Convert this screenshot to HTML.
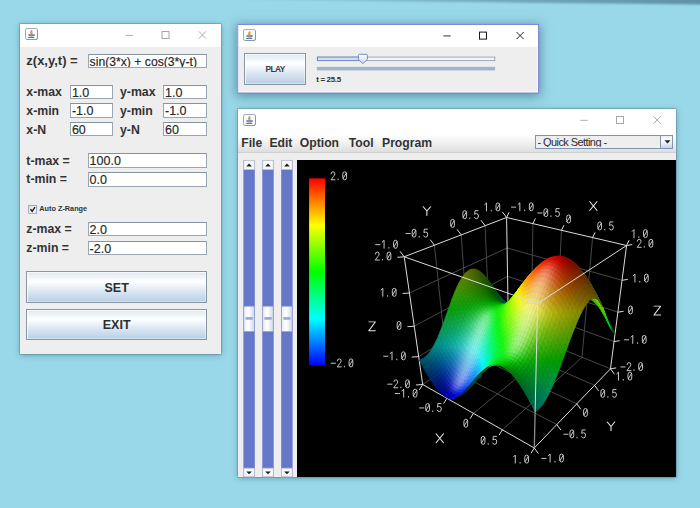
<!DOCTYPE html>
<html><head><meta charset="utf-8"><title>plot</title>
<style>
html,body{margin:0;padding:0}
body{width:700px;height:508px;overflow:hidden;position:relative;background:#99d8e9;font-family:"Liberation Sans",sans-serif;color:#333}
.abs,.jicon,.fld,.lbl,.win,.btn,.box{position:absolute}
.win{background:#eee;box-shadow:0 0 0 .6px rgba(80,110,125,.55),0 1px 6px rgba(30,70,90,.42)}
.tbar{position:absolute;left:0;top:0;right:0;background:#fff}
.fld{background:#fff;border:1px solid #9aa6b3;border-top-color:#8592a0;box-sizing:border-box;white-space:pre;overflow:hidden;padding-left:.6px;color:#262626;-webkit-text-stroke:.15px #262626}
.lbl{font-weight:bold;white-space:pre;color:#333}
.btn{box-sizing:border-box;border:1px solid #8795a5;background:linear-gradient(#dde8f3 0%,#fff 32%,#dde8f3 62%,#b8cfe5 100%);font-weight:bold;text-align:center;color:#2e2e2e;box-shadow:inset 1px 1px 0 rgba(255,255,255,.75),inset -1px -1px 0 rgba(255,255,255,.35)}
</style></head><body>

<svg class="abs" style="left:0;top:0" width="700" height="14"><defs><linearGradient id="tg" x1="0" y1="0" x2="1" y2="0"><stop offset="0" stop-color="#7db6c8" stop-opacity=".0"/><stop offset=".35" stop-color="#76b0c3" stop-opacity=".75"/><stop offset="1" stop-color="#5c91a4" stop-opacity="1"/></linearGradient><filter id="bl" x="-5%" y="-100%" width="110%" height="300%"><feGaussianBlur stdDeviation="1.1"/></filter></defs><path d="M110 -3H705V4.6L420 1.6Z" fill="url(#tg)" filter="url(#bl)"/></svg>
<div class="win" style="left:20px;top:24px;width:201px;height:329.6px"><div class="tbar" style="height:23.1px"></div></div>
<svg class="jicon" style="left:25px;top:28.4px" width="13" height="13" viewBox="0 0 13 13"><rect x=".5" y=".5" width="12" height="11" rx="1.6" fill="#fbfcfd" stroke="#a1adbc"/><path d="M12.45 2V9.8Q12.45 11.5 10.8 11.5H2" fill="none" stroke="#8292a6" stroke-width=".8"/><path d="M6.4 1.8C7.7 3.2 8 4.5 7.3 6H5.4C4.6 4.7 5.3 3.2 6.4 1.8z" fill="#f6932e"/><rect x="3.4" y="6.2" width="6.3" height="1.7" fill="#5f7fa8"/><rect x="4.4" y="7.9" width="4.2" height=".8" fill="#9fb3cc"/><rect x="2.9" y="9" width="6.4" height=".9" fill="#4b6b92"/></svg>
<svg class="abs" style="left:0;top:0" width="700" height="508"><g fill="none" stroke="#a6a6a6" stroke-width="1">
<path d="M125.6 35.35h7.4" stroke-width=".9"/><rect x="162.0" y="31.5" width="7" height="7"/><path d="M198.8 31.4l7.2 7.2m0 -7.2l-7.2 7.2" stroke-width=".95"/></g></svg>
<div class="lbl" style="left:26.3px;top:53.73px;font-size:13px;line-height:14.94px;">z(x,y,t) =</div>
<div class="fld" style="left:88px;top:53.6px;width:119px;height:14.4px;font-size:12.2px;line-height:15.4px">sin(3*x) + cos(3*y-t)</div>
<div class="lbl" style="left:26.3px;top:85.47px;font-size:12.3px;line-height:14.13px;">x-max</div>
<div class="fld" style="left:70.3px;top:84.6px;width:42.6px;height:14.4px;font-size:12.5px;line-height:15.4px">1.0</div>
<div class="lbl" style="left:120px;top:85.47px;font-size:12.3px;line-height:14.13px;">y-max</div>
<div class="fld" style="left:163.4px;top:84.6px;width:43.6px;height:14.4px;font-size:12.5px;line-height:15.4px">1.0</div>
<div class="lbl" style="left:26.3px;top:104.07px;font-size:12.3px;line-height:14.13px;">x-min</div>
<div class="fld" style="left:70.3px;top:103.3px;width:42.6px;height:14.4px;font-size:12.5px;line-height:15.4px">-1.0</div>
<div class="lbl" style="left:120px;top:104.07px;font-size:12.3px;line-height:14.13px;">y-min</div>
<div class="fld" style="left:163.4px;top:103.3px;width:43.6px;height:14.4px;font-size:12.5px;line-height:15.4px">-1.0</div>
<div class="lbl" style="left:26.3px;top:122.67px;font-size:12.3px;line-height:14.13px;">x-N</div>
<div class="fld" style="left:70.3px;top:122px;width:42.6px;height:14.4px;font-size:12.5px;line-height:15.4px">60</div>
<div class="lbl" style="left:120px;top:122.67px;font-size:12.3px;line-height:14.13px;">y-N</div>
<div class="fld" style="left:163.4px;top:122px;width:43.6px;height:14.4px;font-size:12.5px;line-height:15.4px">60</div>
<div class="lbl" style="left:26.3px;top:153.57px;font-size:12.3px;line-height:14.13px;">t-max =</div>
<div class="fld" style="left:88px;top:153.2px;width:119px;height:14.6px;font-size:12.5px;line-height:15.6px">100.0</div>
<div class="lbl" style="left:26.3px;top:172.27px;font-size:12.3px;line-height:14.13px;">t-min =</div>
<div class="fld" style="left:88px;top:171.9px;width:119px;height:14.8px;font-size:12.5px;line-height:15.8px">0.0</div>
<svg class="abs" style="left:0;top:0" width="120" height="230"><defs><linearGradient id="ckg" x1="0" y1="0" x2="1" y2="1"><stop offset="0" stop-color="#cfdbe8"/><stop offset=".55" stop-color="#fbfcfd"/><stop offset="1" stop-color="#e3ebf4"/></linearGradient></defs><rect x="28.7" y="205.4" width="7.9" height="7.9" fill="url(#ckg)" stroke="#93a0af" stroke-width=".9"/><path d="M30.5 209.3L32.2 211.3L35 207.2" fill="none" stroke="#1c1c1c" stroke-width="1.5"/></svg>
<div class="lbl" style="left:39.3px;top:204.99px;font-size:7.3px;line-height:8.39px;">Auto Z-Range</div>
<div class="lbl" style="left:26.3px;top:222.27px;font-size:12.3px;line-height:14.13px;">z-max =</div>
<div class="fld" style="left:88px;top:221.7px;width:119px;height:14.7px;font-size:12.5px;line-height:15.7px">2.0</div>
<div class="lbl" style="left:26.3px;top:241.27px;font-size:12.3px;line-height:14.13px;">z-min =</div>
<div class="fld" style="left:88px;top:240.5px;width:119px;height:14.6px;font-size:12.5px;line-height:15.6px">-2.0</div>
<div class="btn" style="left:26.3px;top:271px;width:180.7px;height:31.6px;font-size:12.5px;line-height:32.6px">SET</div>
<div class="btn" style="left:26.3px;top:309.3px;width:180.7px;height:30.6px;font-size:12.5px;line-height:31.6px">EXIT</div>
<div class="win" style="left:237px;top:24px;width:302px;height:69.4px;box-shadow:0 2px 10px 1px rgba(30,70,90,.5)"><div class="tbar" style="height:23.1px"></div></div><svg class="abs" style="left:0;top:0" width="700" height="508"><rect x="238.7" y="25.4" width="298.9" height="66.7" fill="none" stroke="#fff" stroke-width=".9"/><rect x="237.75" y="24.45" width="300.8" height="68.6" fill="none" stroke="#7a7edb" stroke-width=".95"/></svg>
<svg class="jicon" style="left:243.1px;top:28.9px" width="13" height="13" viewBox="0 0 13 13"><rect x=".5" y=".5" width="12" height="11" rx="1.6" fill="#fbfcfd" stroke="#a1adbc"/><path d="M12.45 2V9.8Q12.45 11.5 10.8 11.5H2" fill="none" stroke="#8292a6" stroke-width=".8"/><path d="M6.4 1.8C7.7 3.2 8 4.5 7.3 6H5.4C4.6 4.7 5.3 3.2 6.4 1.8z" fill="#f6932e"/><rect x="3.4" y="6.2" width="6.3" height="1.7" fill="#5f7fa8"/><rect x="4.4" y="7.9" width="4.2" height=".8" fill="#9fb3cc"/><rect x="2.9" y="9" width="6.4" height=".9" fill="#4b6b92"/></svg>
<svg class="abs" style="left:0;top:0" width="700" height="508"><g fill="none" stroke="#1a1a1a" stroke-width="1">
<path d="M443.3 35.95h7.4" stroke-width=".9"/><rect x="479.5" y="32.1" width="7" height="7"/><path d="M516.5 32.0l7.2 7.2m0 -7.2l-7.2 7.2" stroke-width=".95"/></g></svg>
<div class="btn" style="left:244.2px;top:53.4px;width:62px;height:31.3px;font-size:8.4px;letter-spacing:-.55px;line-height:31.4px;color:#3a3a3a">PLAY</div>
<svg class="abs" style="left:0;top:0" width="700" height="508"><defs><linearGradient id="thb" x1="0" y1="0" x2="0" y2="1"><stop offset="0" stop-color="#fff"/><stop offset="1" stop-color="#c9d9ee"/></linearGradient></defs>
<rect x="317.4" y="57.1" width="177.4" height="3.5" fill="#f3f5f8" stroke="#96a3b3" stroke-width=".9"/>
<rect x="317.4" y="57.1" width="45" height="3.5" fill="#d3dff1" stroke="#6788c5" stroke-width=".9"/>
<path d="M358.4 55.4Q358.4 54.3 359.5 54.3H366.3Q367.4 54.3 367.4 55.4V59.3L362.9 63.6L358.4 59.3Z" fill="url(#thb)" stroke="#6382bf" stroke-width=".9"/>
<rect x="316.9" y="66.9" width="178.2" height="3.5" fill="#9fb3d0"/>
</svg>
<div class="lbl" style="left:316.2px;top:74.55px;font-size:7.9px;line-height:9.08px;letter-spacing:-.3px;color:#2e2e2e">t = 25.5</div>
<div class="win" style="left:237.6px;top:109.2px;width:438.6px;height:368px"><div class="tbar" style="height:25.3px"></div><div class="abs" style="position:absolute;left:0;right:0;top:25.3px;height:17.8px;background:linear-gradient(#fff,#f4f4f4 40%,#dedede);border-bottom:1px solid #d0d0d0"></div></div>
<svg class="jicon" style="left:243.1px;top:113.9px" width="13" height="13" viewBox="0 0 13 13"><rect x=".5" y=".5" width="12" height="11" rx="1.6" fill="#fbfcfd" stroke="#a1adbc"/><path d="M12.45 2V9.8Q12.45 11.5 10.8 11.5H2" fill="none" stroke="#8292a6" stroke-width=".8"/><path d="M6.4 1.8C7.7 3.2 8 4.5 7.3 6H5.4C4.6 4.7 5.3 3.2 6.4 1.8z" fill="#f6932e"/><rect x="3.4" y="6.2" width="6.3" height="1.7" fill="#5f7fa8"/><rect x="4.4" y="7.9" width="4.2" height=".8" fill="#9fb3cc"/><rect x="2.9" y="9" width="6.4" height=".9" fill="#4b6b92"/></svg>
<svg class="abs" style="left:0;top:0" width="700" height="508"><g fill="none" stroke="#a6a6a6" stroke-width="1">
<path d="M580.3 120.35h7.4" stroke-width=".9"/><rect x="616.5" y="116.5" width="7" height="7"/><path d="M653.5 116.4l7.2 7.2m0 -7.2l-7.2 7.2" stroke-width=".95"/></g></svg>
<div class="lbl" style="left:241.2px;top:135.86px;font-size:12.2px;line-height:14.02px;">File</div>
<div class="lbl" style="left:269.4px;top:135.86px;font-size:12.2px;line-height:14.02px;">Edit</div>
<div class="lbl" style="left:299.8px;top:135.86px;font-size:12.2px;line-height:14.02px;">Option</div>
<div class="lbl" style="left:348.8px;top:135.86px;font-size:12.2px;line-height:14.02px;">Tool</div>
<div class="lbl" style="left:382.0px;top:135.86px;font-size:12.2px;line-height:14.02px;">Program</div>
<div class="box" style="left:535px;top:135px;width:138px;height:14px;box-sizing:border-box;border:1px solid #7f93b3;background:#eee;overflow:hidden"><div style="position:absolute;left:0;top:0;width:124px;height:10.9px;overflow:hidden"><div style="position:absolute;left:1.5px;top:0px;font-size:11px;letter-spacing:-0.58px;white-space:pre;color:#2c2c2c;line-height:13px">- Quick Setting -</div></div><div style="position:absolute;right:0;top:0;bottom:0;width:11.2px;border-left:1px solid #7f93b3;background:linear-gradient(#e6eef7,#fff 35%,#c3d5ea)"></div></div>
<svg class="abs" style="left:662.6px;top:139.4px" width="10" height="6"><path d="M1.4 1.2H7.6L4.5 4.4Z" fill="#222"/></svg>
<svg class="abs" style="left:0;top:0" width="700" height="508"><defs><linearGradient id="thg" x1="0" x2="1" y1="0" y2="0"><stop offset="0" stop-color="#e8eef8"/><stop offset=".45" stop-color="#fff"/><stop offset="1" stop-color="#cdd8ea"/></linearGradient></defs><rect x="243.4" y="160" width="11.4" height="317" fill="#6577c9"/><rect x="243.8" y="160.3" width="10.6" height="9.3" fill="#f7f8fa" stroke="#b9c0cc" stroke-width=".8"/><path d="M246.3 166.4h5.6l-2.8 -2.9z" fill="#1a1a1a"/><rect x="243.8" y="468.2" width="10.6" height="8.6" fill="#f7f8fa" stroke="#b9c0cc" stroke-width=".8"/><path d="M246.3 471.4h5.6l-2.8 2.9z" fill="#1a1a1a"/><rect x="243.8" y="306.2" width="10.6" height="25.4" fill="url(#thg)" stroke="#8fa0d8" stroke-width=".8"/><rect x="245.5" y="317.1" width="7.3" height="2.6" fill="#98a6d6"/><rect x="262.3" y="160" width="11.4" height="317" fill="#6577c9"/><rect x="262.7" y="160.3" width="10.6" height="9.3" fill="#f7f8fa" stroke="#b9c0cc" stroke-width=".8"/><path d="M265.2 166.4h5.6l-2.8 -2.9z" fill="#1a1a1a"/><rect x="262.7" y="468.2" width="10.6" height="8.6" fill="#f7f8fa" stroke="#b9c0cc" stroke-width=".8"/><path d="M265.2 471.4h5.6l-2.8 2.9z" fill="#1a1a1a"/><rect x="262.7" y="306.2" width="10.6" height="25.4" fill="url(#thg)" stroke="#8fa0d8" stroke-width=".8"/><rect x="264.40000000000003" y="317.1" width="7.3" height="2.6" fill="#98a6d6"/><rect x="281.2" y="160" width="11.4" height="317" fill="#6577c9"/><rect x="281.59999999999997" y="160.3" width="10.6" height="9.3" fill="#f7f8fa" stroke="#b9c0cc" stroke-width=".8"/><path d="M284.09999999999997 166.4h5.6l-2.8 -2.9z" fill="#1a1a1a"/><rect x="281.59999999999997" y="468.2" width="10.6" height="8.6" fill="#f7f8fa" stroke="#b9c0cc" stroke-width=".8"/><path d="M284.09999999999997 471.4h5.6l-2.8 2.9z" fill="#1a1a1a"/><rect x="281.59999999999997" y="306.2" width="10.6" height="25.4" fill="url(#thg)" stroke="#8fa0d8" stroke-width=".8"/><rect x="283.3" y="317.1" width="7.3" height="2.6" fill="#98a6d6"/></svg>
<svg class="abs" style="left:297px;top:160px;background:#000" width="379.2" height="317.2" viewBox="297 160 379.2 317.2"><defs><linearGradient id="cbg" x1="0" y1="0" x2="0" y2="1"><stop offset="0" stop-color="#f00"/><stop offset="0.25" stop-color="#ff0"/><stop offset="0.5" stop-color="#0f0"/><stop offset="0.75" stop-color="#0ff"/><stop offset="1" stop-color="#00f"/></linearGradient></defs><rect x="309.1" y="178.4" width="15.9" height="187.1" fill="url(#cbg)"/><g fill="none" stroke="#e6e6e6" stroke-width="0.871" stroke-linecap="round" stroke-linejoin="round"><path transform="translate(330.60 171.80) scale(1.043 0.930)" d="M.5 2.1Q.5 0 2.3 0Q4.1 0 4.1 2.1Q4.1 3.6 2.6 5.2L.4 8.6H4.3"/><path transform="translate(336.45 171.80) scale(1.043 0.930)" d="M1.6 7.8V8.6"/><path transform="translate(342.30 171.80) scale(1.043 0.930)" d="M.5 2.2Q.5 0 2.3 0Q4.1 0 4.1 2.2V6.4Q4.1 8.6 2.3 8.6Q.5 8.6 .5 6.4ZM.9 6.9L3.7 1.7"/></g><g fill="none" stroke="#e6e6e6" stroke-width="0.871" stroke-linecap="round" stroke-linejoin="round"><path transform="translate(331.00 358.90) scale(1.043 0.930)" d="M.2 4.7H4.3"/><path transform="translate(336.85 358.90) scale(1.043 0.930)" d="M.5 2.1Q.5 0 2.3 0Q4.1 0 4.1 2.1Q4.1 3.6 2.6 5.2L.4 8.6H4.3"/><path transform="translate(342.70 358.90) scale(1.043 0.930)" d="M1.6 7.8V8.6"/><path transform="translate(348.55 358.90) scale(1.043 0.930)" d="M.5 2.2Q.5 0 2.3 0Q4.1 0 4.1 2.2V6.4Q4.1 8.6 2.3 8.6Q.5 8.6 .5 6.4ZM.9 6.9L3.7 1.7"/></g><g fill="none"><path d="M447.4 368.1L434.4 245.2" stroke="#474747" stroke-width="1"/><path d="M418.6 356.6L508.0 302.8" stroke="#474747" stroke-width="1"/><path d="M531.2 336.8L532.9 223.6" stroke="#474747" stroke-width="1"/><path d="M508.0 302.8L614.0 341.6" stroke="#474747" stroke-width="1"/><path d="M446.9 398.3L531.2 336.8" stroke="#474747" stroke-width="1"/><path d="M447.4 368.1L556.8 424.5" stroke="#474747" stroke-width="1"/><path d="M469.7 353.2L461.2 234.9" stroke="#474747" stroke-width="1"/><path d="M414.2 326.2L507.5 276.4" stroke="#474747" stroke-width="1"/><path d="M555.7 346.6L561.5 230.3" stroke="#474747" stroke-width="1"/><path d="M507.5 276.4L617.9 312.2" stroke="#474747" stroke-width="1"/><path d="M473.4 413.4L555.7 346.6" stroke="#474747" stroke-width="1"/><path d="M469.7 353.2L576.8 403.8" stroke="#474747" stroke-width="1"/><path d="M490.0 339.8L485.1 225.7" stroke="#474747" stroke-width="1"/><path d="M409.4 293.0L507.1 248.0" stroke="#474747" stroke-width="1"/><path d="M582.0 357.3L592.6 237.6" stroke="#474747" stroke-width="1"/><path d="M507.1 248.0L622.1 280.3" stroke="#474747" stroke-width="1"/><path d="M502.4 429.8L582.0 357.3" stroke="#474747" stroke-width="1"/><path d="M490.0 339.8L594.6 385.3" stroke="#474747" stroke-width="1"/><path d="M422.7 384.5L508.4 327.5" stroke="#474747" stroke-width="1"/><path d="M508.4 327.5L610.5 368.8" stroke="#474747" stroke-width="1"/><path d="M508.4 327.5L506.6 217.5" stroke="#dcdcdc" stroke-width="1"/><path d="M404.2 256.8L506.6 217.5" stroke="#dcdcdc" stroke-width="1"/><path d="M506.6 217.5L626.6 245.5" stroke="#dcdcdc" stroke-width="1"/><path d="M422.7 384.5L404.2 256.8" stroke="#dcdcdc" stroke-width="1"/><path d="M610.5 368.8L626.6 245.5" stroke="#dcdcdc" stroke-width="1"/><path d="M422.7 384.5L534.3 448.0" stroke="#dcdcdc" stroke-width="1"/><path d="M534.3 448.0L610.5 368.8" stroke="#dcdcdc" stroke-width="1"/></g><g stroke-width="0.6" stroke-linejoin="round"><path d="M515.8 319.4L517.7 322.2L519.1 322.9L517.3 320.1z" fill="#00295e" stroke="#00295e"/><path d="M514.0 316.4L515.8 319.4L517.3 320.1L515.4 317.1z" fill="#00305c" stroke="#00305c"/><path d="M517.7 322.2L519.6 324.8L521.0 325.4L519.1 322.9z" fill="#002360" stroke="#002360"/><path d="M512.1 313.1L514.0 316.4L515.4 317.1L513.6 313.8z" fill="#00385a" stroke="#00385a"/><path d="M519.6 324.8L521.4 327.0L522.8 327.6L521.0 325.4z" fill="#001d64" stroke="#001d64"/><path d="M510.2 309.7L512.1 313.1L513.6 313.8L511.7 310.4z" fill="#004159" stroke="#004159"/><path d="M521.4 327.0L523.3 328.9L524.7 329.5L522.8 327.6z" fill="#001969" stroke="#001969"/><path d="M508.4 306.1L510.2 309.7L511.7 310.4L509.9 306.8z" fill="#004a58" stroke="#004a58"/><path d="M523.3 328.9L525.1 330.5L526.5 331.1L524.7 329.5z" fill="#00166e" stroke="#00166e"/><path d="M506.5 302.4L508.4 306.1L509.9 306.8L508.0 303.2z" fill="#005457" stroke="#005457"/><path d="M525.1 330.5L527.0 331.8L528.4 332.4L526.5 331.1z" fill="#001475" stroke="#001475"/><path d="M514.4 318.4L516.3 321.3L517.7 322.2L515.8 319.4z" fill="#002e5b" stroke="#002e5b"/><path d="M512.5 315.4L514.4 318.4L515.8 319.4L514.0 316.4z" fill="#003559" stroke="#003559"/><path d="M516.3 321.3L518.1 323.8L519.6 324.8L517.7 322.2z" fill="#00285d" stroke="#00285d"/><path d="M510.6 312.1L512.5 315.4L514.0 316.4L512.1 313.1z" fill="#003d57" stroke="#003d57"/><path d="M518.1 323.8L520.0 326.1L521.4 327.0L519.6 324.8z" fill="#002361" stroke="#002361"/><path d="M508.8 308.6L510.6 312.1L512.1 313.1L510.2 309.7z" fill="#004556" stroke="#004556"/><path d="M527.0 331.8L528.9 332.7L530.3 333.3L528.4 332.4z" fill="#00147d" stroke="#00147d"/><path d="M520.0 326.1L521.9 328.0L523.3 328.9L521.4 327.0z" fill="#001f65" stroke="#001f65"/><path d="M506.9 305.0L508.8 308.6L510.2 309.7L508.4 306.1z" fill="#004e55" stroke="#004e55"/><path d="M521.9 328.0L523.8 329.6L525.1 330.5L523.3 328.9z" fill="#001d6a" stroke="#001d6a"/><path d="M505.0 301.3L506.9 305.0L508.4 306.1L506.5 302.4z" fill="#005553" stroke="#005553"/><path d="M528.9 332.7L530.8 333.2L532.2 333.8L530.3 333.3z" fill="#001585" stroke="#001585"/><path d="M523.8 329.6L525.6 330.9L527.0 331.8L525.1 330.5z" fill="#001b71" stroke="#001b71"/><path d="M512.9 317.2L514.8 320.0L516.3 321.3L514.4 318.4z" fill="#003459" stroke="#003459"/><path d="M511.0 314.1L512.9 317.2L514.4 318.4L512.5 315.4z" fill="#003b57" stroke="#003b57"/><path d="M514.8 320.0L516.7 322.6L518.1 323.8L516.3 321.3z" fill="#002f5b" stroke="#002f5b"/><path d="M509.1 310.8L511.0 314.1L512.5 315.4L510.6 312.1z" fill="#004255" stroke="#004255"/><path d="M516.7 322.6L518.6 324.9L520.0 326.1L518.1 323.8z" fill="#002a5e" stroke="#002a5e"/><path d="M525.6 330.9L527.5 331.8L528.9 332.7L527.0 331.8z" fill="#002397" stroke="#002397"/><path d="M530.8 333.2L532.8 333.4L534.1 334.0L532.2 333.8z" fill="#00167d" stroke="#00167d"/><path d="M507.2 307.3L509.1 310.8L510.6 312.1L508.8 308.6z" fill="#004a54" stroke="#004a54"/><path d="M518.6 324.9L520.4 326.8L521.9 328.0L520.0 326.1z" fill="#002762" stroke="#002762"/><path d="M505.3 303.7L507.2 307.3L508.8 308.6L506.9 305.0z" fill="#005353" stroke="#005353"/><path d="M520.4 326.8L522.3 328.4L523.8 329.6L521.9 328.0z" fill="#002467" stroke="#002467"/><path d="M503.4 299.9L505.3 303.7L506.9 305.0L505.0 301.3z" fill="#00534a" stroke="#00534a"/><path d="M527.5 331.8L529.5 332.3L530.8 333.2L528.9 332.7z" fill="#00208d" stroke="#00208d"/><path d="M532.8 333.4L534.7 333.3L536.1 333.9L534.1 334.0z" fill="#001876" stroke="#001876"/><path d="M522.3 328.4L524.2 329.7L525.6 330.9L523.8 329.6z" fill="#0036a5" stroke="#0036a5"/><path d="M511.4 315.7L513.3 318.5L514.8 320.0L512.9 317.2z" fill="#003b57" stroke="#003b57"/><path d="M509.5 312.6L511.4 315.7L512.9 317.2L511.0 314.1z" fill="#004255" stroke="#004255"/><path d="M513.3 318.5L515.2 321.1L516.7 322.6L514.8 320.0z" fill="#003659" stroke="#003659"/><path d="M529.5 332.3L531.4 332.5L532.8 333.4L530.8 333.2z" fill="#002083" stroke="#002083"/><path d="M507.6 309.2L509.5 312.6L511.0 314.1L509.1 310.8z" fill="#004954" stroke="#004954"/><path d="M524.2 329.7L526.1 330.6L527.5 331.8L525.6 330.9z" fill="#00319c" stroke="#00319c"/><path d="M515.2 321.1L517.1 323.4L518.6 324.9L516.7 322.6z" fill="#00325c" stroke="#00325c"/><path d="M505.7 305.7L507.6 309.2L509.1 310.8L507.2 307.3z" fill="#005053" stroke="#005053"/><path d="M517.1 323.4L519.0 325.4L520.4 326.8L518.6 324.9z" fill="#002f60" stroke="#002f60"/><path d="M503.8 302.1L505.7 305.7L507.2 307.3L505.3 303.7z" fill="#00524b" stroke="#00524b"/><path d="M534.7 333.3L536.7 332.8L538.0 333.4L536.1 333.9z" fill="#001c70" stroke="#001c70"/><path d="M519.0 325.4L520.9 327.0L522.3 328.4L520.4 326.8z" fill="#004eb1" stroke="#004eb1"/><path d="M501.9 298.3L503.8 302.1L505.3 303.7L503.4 299.9z" fill="#005141" stroke="#005141"/><path d="M526.1 330.6L528.1 331.1L529.5 332.3L527.5 331.8z" fill="#002e93" stroke="#002e93"/><path d="M531.4 332.5L533.3 332.4L534.7 333.3L532.8 333.4z" fill="#00227d" stroke="#00227d"/><path d="M520.9 327.0L522.8 328.2L524.2 329.7L522.3 328.4z" fill="#0046a9" stroke="#0046a9"/><path d="M528.1 331.1L530.0 331.3L531.4 332.5L529.5 332.3z" fill="#002d8a" stroke="#002d8a"/><path d="M509.9 313.9L511.8 316.8L513.3 318.5L511.4 315.7z" fill="#004356" stroke="#004356"/><path d="M508.0 310.8L509.9 313.9L511.4 315.7L509.5 312.6z" fill="#004954" stroke="#004954"/><path d="M511.8 316.8L513.7 319.4L515.2 321.1L513.3 318.5z" fill="#003e58" stroke="#003e58"/><path d="M536.7 332.8L538.7 332.0L540.0 332.6L538.0 333.4z" fill="#00216c" stroke="#00216c"/><path d="M522.8 328.2L524.7 329.2L526.1 330.6L524.2 329.7z" fill="#0041a1" stroke="#0041a1"/><path d="M506.1 307.4L508.0 310.8L509.5 312.6L507.6 309.2z" fill="#005053" stroke="#005053"/><path d="M513.7 319.4L515.6 321.7L517.1 323.4L515.2 321.1z" fill="#003a5b" stroke="#003a5b"/><path d="M504.1 303.9L506.1 307.4L507.6 309.2L505.7 305.7z" fill="#00524b" stroke="#00524b"/><path d="M533.3 332.4L535.3 331.9L536.7 332.8L534.7 333.3z" fill="#002677" stroke="#002677"/><path d="M515.6 321.7L517.5 323.7L519.0 325.4L517.1 323.4z" fill="#006cb9" stroke="#006cb9"/><path d="M502.2 300.2L504.1 303.9L505.7 305.7L503.8 302.1z" fill="#005142" stroke="#005142"/><path d="M517.5 323.7L519.4 325.3L520.9 327.0L519.0 325.4z" fill="#0061b3" stroke="#0061b3"/><path d="M500.3 296.4L502.2 300.2L503.8 302.1L501.9 298.3z" fill="#005038" stroke="#005038"/><path d="M524.7 329.2L526.7 329.7L528.1 331.1L526.1 330.6z" fill="#003d98" stroke="#003d98"/><path d="M530.0 331.3L532.0 331.2L533.3 332.4L531.4 332.5z" fill="#002e82" stroke="#002e82"/><path d="M519.4 325.3L521.4 326.6L522.8 328.2L520.9 327.0z" fill="#0059ac" stroke="#0059ac"/><path d="M538.7 332.0L540.7 330.8L542.0 331.5L540.0 332.6z" fill="#002768" stroke="#002768"/><path d="M535.3 331.9L537.3 331.0L538.7 332.0L536.7 332.8z" fill="#002b72" stroke="#002b72"/><path d="M526.7 329.7L528.6 329.9L530.0 331.3L528.1 331.1z" fill="#003c8f" stroke="#003c8f"/><path d="M508.4 312.0L510.3 314.9L511.8 316.8L509.9 313.9z" fill="#004b55" stroke="#004b55"/><path d="M506.4 308.8L508.4 312.0L509.9 313.9L508.0 310.8z" fill="#005153" stroke="#005153"/><path d="M510.3 314.9L512.2 317.5L513.7 319.4L511.8 316.8z" fill="#004757" stroke="#004757"/><path d="M521.4 326.6L523.3 327.5L524.7 329.2L522.8 328.2z" fill="#0052a4" stroke="#0052a4"/><path d="M504.5 305.5L506.4 308.8L508.0 310.8L506.1 307.4z" fill="#00524b" stroke="#00524b"/><path d="M532.0 331.2L534.0 330.7L535.3 331.9L533.3 332.4z" fill="#00327c" stroke="#00327c"/><path d="M512.2 317.5L514.1 319.8L515.6 321.7L513.7 319.4z" fill="#008fc0" stroke="#008fc0"/><path d="M502.6 301.9L504.5 305.5L506.1 307.4L504.1 303.9z" fill="#005142" stroke="#005142"/><path d="M514.1 319.8L516.0 321.8L517.5 323.7L515.6 321.7z" fill="#0081bb" stroke="#0081bb"/><path d="M500.6 298.2L502.6 301.9L504.1 303.9L502.2 300.2z" fill="#005039" stroke="#005039"/><path d="M523.3 327.5L525.2 328.0L526.7 329.7L524.7 329.2z" fill="#004e9b" stroke="#004e9b"/><path d="M528.6 329.9L530.6 329.7L532.0 331.2L530.0 331.3z" fill="#003c86" stroke="#003c86"/><path d="M516.0 321.8L518.0 323.5L519.4 325.3L517.5 323.7z" fill="#0076b5" stroke="#0076b5"/><path d="M498.6 294.3L500.6 298.2L502.2 300.2L500.3 296.4z" fill="#00502f" stroke="#00502f"/><path d="M540.7 330.8L542.8 329.4L544.1 330.1L542.0 331.5z" fill="#002e65" stroke="#002e65"/><path d="M537.3 331.0L539.4 329.9L540.7 330.8L538.7 332.0z" fill="#00316e" stroke="#00316e"/><path d="M518.0 323.5L519.9 324.7L521.4 326.6L519.4 325.3z" fill="#006cae" stroke="#006cae"/><path d="M534.0 330.7L536.0 329.8L537.3 331.0L535.3 331.9z" fill="#003677" stroke="#003677"/><path d="M525.2 328.0L527.2 328.2L528.6 329.9L526.7 329.7z" fill="#004c93" stroke="#004c93"/><path d="M506.8 309.9L508.7 312.8L510.3 314.9L508.4 312.0z" fill="#005454" stroke="#005454"/><path d="M530.6 329.7L532.6 329.2L534.0 330.7L532.0 331.2z" fill="#003f80" stroke="#003f80"/><path d="M519.9 324.7L521.8 325.7L523.3 327.5L521.4 326.6z" fill="#0065a6" stroke="#0065a6"/><path d="M504.8 306.7L506.8 309.9L508.4 312.0L506.4 308.8z" fill="#00524b" stroke="#00524b"/><path d="M508.7 312.8L510.7 315.5L512.2 317.5L510.3 314.9z" fill="#005056" stroke="#005056"/><path d="M502.9 303.3L504.8 306.7L506.4 308.8L504.5 305.5z" fill="#005142" stroke="#005142"/><path d="M510.7 315.5L512.6 317.8L514.1 319.8L512.2 317.5z" fill="#00a5c1" stroke="#00a5c1"/><path d="M500.9 299.7L502.9 303.3L504.5 305.5L502.6 301.9z" fill="#005039" stroke="#005039"/><path d="M512.6 317.8L514.5 319.8L516.0 321.8L514.1 319.8z" fill="#0097bc" stroke="#0097bc"/><path d="M542.8 329.4L544.8 327.7L546.2 328.4L544.1 330.1z" fill="#003562" stroke="#003562"/><path d="M539.4 329.9L541.4 328.5L542.8 329.4L540.7 330.8z" fill="#00386b" stroke="#00386b"/><path d="M499.0 296.0L500.9 299.7L502.6 301.9L500.6 298.2z" fill="#004f2f" stroke="#004f2f"/><path d="M527.2 328.2L529.2 328.1L530.6 329.7L528.6 329.9z" fill="#004c8b" stroke="#004c8b"/><path d="M521.8 325.7L523.8 326.2L525.2 328.0L523.3 327.5z" fill="#00619e" stroke="#00619e"/><path d="M536.0 329.8L538.0 328.7L539.4 329.9L537.3 331.0z" fill="#003c73" stroke="#003c73"/><path d="M514.5 319.8L516.5 321.5L518.0 323.5L516.0 321.8z" fill="#008bb6" stroke="#008bb6"/><path d="M497.0 292.1L499.0 296.0L500.6 298.2L498.6 294.3z" fill="#004f26" stroke="#004f26"/><path d="M532.6 329.2L534.6 328.4L536.0 329.8L534.0 330.7z" fill="#00447b" stroke="#00447b"/><path d="M516.5 321.5L518.4 322.7L519.9 324.7L518.0 323.5z" fill="#0081af" stroke="#0081af"/><path d="M523.8 326.2L525.8 326.4L527.2 328.2L525.2 328.0z" fill="#005e96" stroke="#005e96"/><path d="M529.2 328.1L531.2 327.5L532.6 329.2L530.6 329.7z" fill="#004e83" stroke="#004e83"/><path d="M518.4 322.7L520.4 323.7L521.8 325.7L519.9 324.7z" fill="#0079a8" stroke="#0079a8"/><path d="M505.2 307.7L507.1 310.7L508.7 312.8L506.8 309.9z" fill="#00544a" stroke="#00544a"/><path d="M503.2 304.5L505.2 307.7L506.8 309.9L504.8 306.7z" fill="#005241" stroke="#005241"/><path d="M507.1 310.7L509.1 313.3L510.7 315.5L508.7 312.8z" fill="#00c5bd" stroke="#00c5bd"/><path d="M541.4 328.5L543.5 326.8L544.8 327.7L542.8 329.4z" fill="#004068" stroke="#004068"/><path d="M544.8 327.7L547.0 325.8L548.3 326.5L546.2 328.4z" fill="#003e60" stroke="#003e60"/><path d="M501.3 301.1L503.2 304.5L504.8 306.7L502.9 303.3z" fill="#005138" stroke="#005138"/><path d="M509.1 313.3L511.0 315.7L512.6 317.8L510.7 315.5z" fill="#00bcc1" stroke="#00bcc1"/><path d="M538.0 328.7L540.1 327.2L541.4 328.5L539.4 329.9z" fill="#004470" stroke="#004470"/><path d="M499.3 297.4L501.3 301.1L502.9 303.3L500.9 299.7z" fill="#00502f" stroke="#00502f"/><path d="M511.0 315.7L513.0 317.7L514.5 319.8L512.6 317.8z" fill="#00aebc" stroke="#00aebc"/><path d="M497.3 293.6L499.3 297.4L500.9 299.7L499.0 296.0z" fill="#004f26" stroke="#004f26"/><path d="M534.6 328.4L536.6 327.2L538.0 328.7L536.0 329.8z" fill="#004a77" stroke="#004a77"/><path d="M525.8 326.4L527.8 326.2L529.2 328.1L527.2 328.2z" fill="#005d8e" stroke="#005d8e"/><path d="M520.4 323.7L522.3 324.2L523.8 326.2L521.8 325.7z" fill="#0074a0" stroke="#0074a0"/><path d="M513.0 317.7L514.9 319.3L516.5 321.5L514.5 319.8z" fill="#00a1b7" stroke="#00a1b7"/><path d="M495.3 289.7L497.3 293.6L499.0 296.0L497.0 292.1z" fill="#004f1c" stroke="#004f1c"/><path d="M531.2 327.5L533.2 326.7L534.6 328.4L532.6 329.2z" fill="#00527f" stroke="#00527f"/><path d="M514.9 319.3L516.9 320.6L518.4 322.7L516.5 321.5z" fill="#0096b0" stroke="#0096b0"/><path d="M522.3 324.2L524.3 324.4L525.8 326.4L523.8 326.2z" fill="#007098" stroke="#007098"/><path d="M543.5 326.8L545.7 324.8L547.0 325.8L544.8 327.7z" fill="#004966" stroke="#004966"/><path d="M527.8 326.2L529.8 325.7L531.2 327.5L529.2 328.1z" fill="#005e86" stroke="#005e86"/><path d="M540.1 327.2L542.2 325.5L543.5 326.8L541.4 328.5z" fill="#004c6d" stroke="#004c6d"/><path d="M547.0 325.8L549.1 323.7L550.4 324.4L548.3 326.5z" fill="#00475f" stroke="#00475f"/><path d="M516.9 320.6L518.9 321.5L520.4 323.7L518.4 322.7z" fill="#008ea9" stroke="#008ea9"/><path d="M503.6 305.4L505.5 308.4L507.1 310.7L505.2 307.7z" fill="#005440" stroke="#005440"/><path d="M536.6 327.2L538.7 325.7L540.1 327.2L538.0 328.7z" fill="#005174" stroke="#005174"/><path d="M501.6 302.2L503.6 305.4L505.2 307.7L503.2 304.5z" fill="#005237" stroke="#005237"/><path d="M505.5 308.4L507.5 311.1L509.1 313.3L507.1 310.7z" fill="#00c5a5" stroke="#00c5a5"/><path d="M499.6 298.7L501.6 302.2L503.2 304.5L501.3 301.1z" fill="#00512e" stroke="#00512e"/><path d="M507.5 311.1L509.5 313.4L511.0 315.7L509.1 313.3z" fill="#00c1af" stroke="#00c1af"/><path d="M497.6 295.1L499.6 298.7L501.3 301.1L499.3 297.4z" fill="#005025" stroke="#005025"/><path d="M533.2 326.7L535.3 325.5L536.6 327.2L534.6 328.4z" fill="#00587a" stroke="#00587a"/><path d="M509.5 313.4L511.4 315.5L513.0 317.7L511.0 315.7z" fill="#00bdb5" stroke="#00bdb5"/><path d="M495.6 291.2L497.6 295.1L499.3 297.4L497.3 293.6z" fill="#004f1c" stroke="#004f1c"/><path d="M524.3 324.4L526.3 324.2L527.8 326.2L525.8 326.4z" fill="#006f90" stroke="#006f90"/><path d="M518.9 321.5L520.8 322.1L522.3 324.2L520.4 323.7z" fill="#0087a1" stroke="#0087a1"/><path d="M511.4 315.5L513.4 317.1L514.9 319.3L513.0 317.7z" fill="#00b7b7" stroke="#00b7b7"/><path d="M493.6 287.3L495.6 291.2L497.3 293.6L495.3 289.7z" fill="#004e13" stroke="#004e13"/><path d="M529.8 325.7L531.8 324.8L533.2 326.7L531.2 327.5z" fill="#006281" stroke="#006281"/><path d="M513.4 317.1L515.4 318.4L516.9 320.6L514.9 319.3z" fill="#00acb1" stroke="#00acb1"/><path d="M545.7 324.8L547.8 322.7L549.1 323.7L547.0 325.8z" fill="#005264" stroke="#005264"/><path d="M542.2 325.5L544.3 323.6L545.7 324.8L543.5 326.8z" fill="#00556b" stroke="#00556b"/><path d="M549.1 323.7L551.3 321.4L552.6 322.2L550.4 324.4z" fill="#00515e" stroke="#00515e"/><path d="M538.7 325.7L540.8 324.0L542.2 325.5L540.1 327.2z" fill="#005971" stroke="#005971"/><path d="M520.8 322.1L522.8 322.2L524.3 324.4L522.3 324.2z" fill="#008399" stroke="#008399"/><path d="M526.3 324.2L528.3 323.6L529.8 325.7L527.8 326.2z" fill="#006f89" stroke="#006f89"/><path d="M535.3 325.5L537.3 324.0L538.7 325.7L536.6 327.2z" fill="#005f77" stroke="#005f77"/><path d="M515.4 318.4L517.3 319.3L518.9 321.5L516.9 320.6z" fill="#00a2a9" stroke="#00a2a9"/><path d="M501.9 303.1L503.9 306.1L505.5 308.4L503.6 305.4z" fill="#005436" stroke="#005436"/><path d="M499.9 299.8L501.9 303.1L503.6 305.4L501.6 302.2z" fill="#00522d" stroke="#00522d"/><path d="M503.9 306.1L505.9 308.8L507.5 311.1L505.5 308.4z" fill="#00c58e" stroke="#00c58e"/><path d="M497.9 296.3L499.9 299.8L501.6 302.2L499.6 298.7z" fill="#005125" stroke="#005125"/><path d="M505.9 308.8L507.9 311.2L509.5 313.4L507.5 311.1z" fill="#00c198" stroke="#00c198"/><path d="M531.8 324.8L533.9 323.6L535.3 325.5L533.2 326.7z" fill="#00677d" stroke="#00677d"/><path d="M495.9 292.6L497.9 296.3L499.6 298.7L497.6 295.1z" fill="#00501c" stroke="#00501c"/><path d="M507.9 311.2L509.8 313.2L511.4 315.5L509.5 313.4z" fill="#00bd9e" stroke="#00bd9e"/><path d="M522.8 322.2L524.8 322.0L526.3 324.2L524.3 324.4z" fill="#008191" stroke="#008191"/><path d="M493.9 288.8L495.9 292.6L497.6 295.1L495.6 291.2z" fill="#004f13" stroke="#004f13"/><path d="M517.3 319.3L519.3 319.9L520.8 322.1L518.9 321.5z" fill="#009ba2" stroke="#009ba2"/><path d="M509.8 313.2L511.8 314.9L513.4 317.1L511.4 315.5z" fill="#00b7a1" stroke="#00b7a1"/><path d="M491.9 284.8L493.9 288.8L495.6 291.2L493.6 287.3z" fill="#004e0a" stroke="#004e0a"/><path d="M528.3 323.6L530.4 322.7L531.8 324.8L529.8 325.7z" fill="#007283" stroke="#007283"/><path d="M544.3 323.6L546.5 321.4L547.8 322.7L545.7 324.8z" fill="#005f69" stroke="#005f69"/><path d="M547.8 322.7L550.0 320.4L551.3 321.4L549.1 323.7z" fill="#005d63" stroke="#005d63"/><path d="M540.8 324.0L543.0 322.0L544.3 323.6L542.2 325.5z" fill="#00626f" stroke="#00626f"/><path d="M551.3 321.4L553.6 319.0L554.9 319.8L552.6 322.2z" fill="#005c5e" stroke="#005c5e"/><path d="M511.8 314.9L513.8 316.2L515.4 318.4L513.4 317.1z" fill="#00b0a0" stroke="#00b0a0"/><path d="M537.3 324.0L539.5 322.2L540.8 324.0L538.7 325.7z" fill="#006774" stroke="#006774"/><path d="M519.3 319.9L521.3 320.0L522.8 322.2L520.8 322.1z" fill="#00969a" stroke="#00969a"/><path d="M524.8 322.0L526.9 321.5L528.3 323.6L526.3 324.2z" fill="#00818a" stroke="#00818a"/><path d="M533.9 323.6L536.0 322.1L537.3 324.0L535.3 325.5z" fill="#006e7a" stroke="#006e7a"/><path d="M513.8 316.2L515.8 317.1L517.3 319.3L515.4 318.4z" fill="#00a99c" stroke="#00a99c"/><path d="M500.2 300.8L502.2 303.8L503.9 306.1L501.9 303.1z" fill="#00542c" stroke="#00542c"/><path d="M498.2 297.5L500.2 300.8L501.9 303.1L499.9 299.8z" fill="#005224" stroke="#005224"/><path d="M502.2 303.8L504.2 306.6L505.9 308.8L503.9 306.1z" fill="#00c576" stroke="#00c576"/><path d="M496.2 294.0L498.2 297.5L499.9 299.8L497.9 296.3z" fill="#00511b" stroke="#00511b"/><path d="M504.2 306.6L506.2 309.0L507.9 311.2L505.9 308.8z" fill="#00c181" stroke="#00c181"/><path d="M530.4 322.7L532.4 321.5L533.9 323.6L531.8 324.8z" fill="#00777f" stroke="#00777f"/><path d="M494.2 290.3L496.2 294.0L497.9 296.3L495.9 292.6z" fill="#005012" stroke="#005012"/><path d="M506.2 309.0L508.2 311.0L509.8 313.2L507.9 311.2z" fill="#00bc88" stroke="#00bc88"/><path d="M521.3 320.0L523.3 319.8L524.8 322.0L522.8 322.2z" fill="#009291" stroke="#009291"/><path d="M492.1 286.4L494.2 290.3L495.9 292.6L493.9 288.8z" fill="#004f09" stroke="#004f09"/><path d="M515.8 317.1L517.8 317.7L519.3 319.9L517.3 319.3z" fill="#00a194" stroke="#00a194"/><path d="M546.5 321.4L548.7 319.1L550.0 320.4L547.8 322.7z" fill="#006867" stroke="#006867"/><path d="M543.0 322.0L545.2 319.8L546.5 321.4L544.3 323.6z" fill="#006c6d" stroke="#006c6d"/><path d="M508.2 311.0L510.2 312.7L511.8 314.9L509.8 313.2z" fill="#00b78b" stroke="#00b78b"/><path d="M550.0 320.4L552.3 318.0L553.6 319.0L551.3 321.4z" fill="#00635e" stroke="#00635e"/><path d="M490.1 282.4L492.1 286.4L493.9 288.8L491.9 284.8z" fill="#004f00" stroke="#004f00"/><path d="M526.9 321.5L528.9 320.6L530.4 322.7L528.3 323.6z" fill="#008284" stroke="#008284"/><path d="M539.5 322.2L541.6 320.2L543.0 322.0L540.8 324.0z" fill="#007072" stroke="#007072"/><path d="M553.6 319.0L555.8 316.6L557.1 317.3L554.9 319.8z" fill="#005d54" stroke="#005d54"/><path d="M536.0 322.1L538.1 320.3L539.5 322.2L537.3 324.0z" fill="#007677" stroke="#007677"/><path d="M510.2 312.7L512.2 314.0L513.8 316.2L511.8 314.9z" fill="#00b08b" stroke="#00b08b"/><path d="M517.8 317.7L519.8 317.8L521.3 320.0L519.3 319.9z" fill="#009a8b" stroke="#009a8b"/><path d="M523.3 319.8L525.4 319.2L526.9 321.5L524.8 322.0z" fill="#008b84" stroke="#008b84"/><path d="M532.4 321.5L534.5 320.0L536.0 322.1L533.9 323.6z" fill="#007b79" stroke="#007b79"/><path d="M512.2 314.0L514.2 314.9L515.8 317.1L513.8 316.2z" fill="#00a987" stroke="#00a987"/><path d="M498.5 298.6L500.6 301.6L502.2 303.8L500.2 300.8z" fill="#005422" stroke="#005422"/><path d="M496.5 295.3L498.5 298.6L500.2 300.8L498.2 297.5z" fill="#00531a" stroke="#00531a"/><path d="M500.6 301.6L502.6 304.4L504.2 306.6L502.2 303.8z" fill="#00572a" stroke="#00572a"/><path d="M494.5 291.7L496.5 295.3L498.2 297.5L496.2 294.0z" fill="#005112" stroke="#005112"/><path d="M502.6 304.4L504.6 306.8L506.2 309.0L504.2 306.6z" fill="#00c06a" stroke="#00c06a"/><path d="M528.9 320.6L531.0 319.3L532.4 321.5L530.4 322.7z" fill="#008079" stroke="#008079"/><path d="M492.4 287.9L494.5 291.7L496.2 294.0L494.2 290.3z" fill="#005009" stroke="#005009"/><path d="M504.6 306.8L506.6 308.9L508.2 311.0L506.2 309.0z" fill="#00bb71" stroke="#00bb71"/><path d="M548.7 319.1L550.9 316.6L552.3 318.0L550.0 320.4z" fill="#00675a" stroke="#00675a"/><path d="M545.2 319.8L547.4 317.5L548.7 319.1L546.5 321.4z" fill="#006c60" stroke="#006c60"/><path d="M490.4 284.0L492.4 287.9L494.2 290.3L492.1 286.4z" fill="#005000" stroke="#005000"/><path d="M519.8 317.8L521.8 317.6L523.3 319.8L521.3 320.0z" fill="#009280" stroke="#009280"/><path d="M552.3 318.0L554.5 315.5L555.8 316.6L553.6 319.0z" fill="#006252" stroke="#006252"/><path d="M541.6 320.2L543.8 318.0L545.2 319.8L543.0 322.0z" fill="#007066" stroke="#007066"/><path d="M514.2 314.9L516.2 315.5L517.8 317.7L515.8 317.1z" fill="#00a181" stroke="#00a181"/><path d="M506.6 308.9L508.6 310.5L510.2 312.7L508.2 311.0z" fill="#00b675" stroke="#00b675"/><path d="M488.3 280.0L490.4 284.0L492.1 286.4L490.1 282.4z" fill="#094f00" stroke="#094f00"/><path d="M555.8 316.6L558.1 314.0L559.4 314.8L557.1 317.3z" fill="#005d49" stroke="#005d49"/><path d="M538.1 320.3L540.2 318.2L541.6 320.2L539.5 322.2z" fill="#007469" stroke="#007469"/><path d="M525.4 319.2L527.4 318.3L528.9 320.6L526.9 321.5z" fill="#008576" stroke="#008576"/><path d="M534.5 320.0L536.7 318.1L538.1 320.3L536.0 322.1z" fill="#00786b" stroke="#00786b"/><path d="M508.6 310.5L510.6 311.9L512.2 314.0L510.2 312.7z" fill="#00af76" stroke="#00af76"/><path d="M516.2 315.5L518.2 315.6L519.8 317.8L517.8 317.7z" fill="#009978" stroke="#009978"/><path d="M531.0 319.3L533.1 317.7L534.5 320.0L532.4 321.5z" fill="#007d6c" stroke="#007d6c"/><path d="M521.8 317.6L523.9 317.0L525.4 319.2L523.3 319.8z" fill="#008b73" stroke="#008b73"/><path d="M496.8 296.5L498.8 299.5L500.6 301.6L498.5 298.6z" fill="#005519" stroke="#005519"/><path d="M510.6 311.9L512.6 312.8L514.2 314.9L512.2 314.0z" fill="#00a773" stroke="#00a773"/><path d="M494.8 293.1L496.8 296.5L498.5 298.6L496.5 295.3z" fill="#005311" stroke="#005311"/><path d="M498.8 299.5L500.9 302.3L502.6 304.4L500.6 301.6z" fill="#005721" stroke="#005721"/><path d="M492.7 289.5L494.8 293.1L496.5 295.3L494.5 291.7z" fill="#005209" stroke="#005209"/><path d="M500.9 302.3L502.9 304.7L504.6 306.8L502.6 304.4z" fill="#00bf54" stroke="#00bf54"/><path d="M527.4 318.3L529.5 317.0L531.0 319.3L528.9 320.6z" fill="#00806a" stroke="#00806a"/><path d="M490.6 285.7L492.7 289.5L494.5 291.7L492.4 287.9z" fill="#005100" stroke="#005100"/><path d="M547.4 317.5L549.6 315.0L550.9 316.6L548.7 319.1z" fill="#006b53" stroke="#006b53"/><path d="M550.9 316.6L553.2 314.1L554.5 315.5L552.3 318.0z" fill="#00674d" stroke="#00674d"/><path d="M543.8 318.0L546.0 315.6L547.4 317.5L545.2 319.8z" fill="#006f58" stroke="#006f58"/><path d="M502.9 304.7L504.9 306.8L506.6 308.9L504.6 306.8z" fill="#00ba5c" stroke="#00ba5c"/><path d="M554.5 315.5L556.8 312.9L558.1 314.0L555.8 316.6z" fill="#006246" stroke="#006246"/><path d="M488.6 281.8L490.6 285.7L492.4 287.9L490.4 284.0z" fill="#095000" stroke="#095000"/><path d="M540.2 318.2L542.4 316.0L543.8 318.0L541.6 320.2z" fill="#00735c" stroke="#00735c"/><path d="M518.2 315.6L520.3 315.4L521.8 317.6L519.8 317.8z" fill="#00916e" stroke="#00916e"/><path d="M558.1 314.0L560.5 311.5L561.8 312.3L559.4 314.8z" fill="#005e3e" stroke="#005e3e"/><path d="M512.6 312.8L514.6 313.3L516.2 315.5L514.2 314.9z" fill="#009f6d" stroke="#009f6d"/><path d="M504.9 306.8L506.9 308.5L508.6 310.5L506.6 308.9z" fill="#00b460" stroke="#00b460"/><path d="M486.5 277.7L488.6 281.8L490.4 284.0L488.3 280.0z" fill="#125000" stroke="#125000"/><path d="M536.7 318.1L538.8 316.1L540.2 318.2L538.1 320.3z" fill="#00765e" stroke="#00765e"/><path d="M523.9 317.0L525.9 316.0L527.4 318.3L525.4 319.2z" fill="#008467" stroke="#008467"/><path d="M533.1 317.7L535.3 315.9L536.7 318.1L534.5 320.0z" fill="#007a5e" stroke="#007a5e"/><path d="M506.9 308.5L509.0 309.8L510.6 311.9L508.6 310.5z" fill="#00ad61" stroke="#00ad61"/><path d="M514.6 313.3L516.7 313.5L518.2 315.6L516.2 315.5z" fill="#009765" stroke="#009765"/><path d="M529.5 317.0L531.7 315.4L533.1 317.7L531.0 319.3z" fill="#007d5d" stroke="#007d5d"/><path d="M520.3 315.4L522.3 314.7L523.9 317.0L521.8 317.6z" fill="#008a62" stroke="#008a62"/><path d="M495.1 294.5L497.1 297.6L498.8 299.5L496.8 296.5z" fill="#005610" stroke="#005610"/><path d="M493.0 291.1L495.1 294.5L496.8 296.5L494.8 293.1z" fill="#005408" stroke="#005408"/><path d="M497.1 297.6L499.2 300.4L500.9 302.3L498.8 299.5z" fill="#005818" stroke="#005818"/><path d="M509.0 309.8L511.0 310.8L512.6 312.8L510.6 311.9z" fill="#00a65f" stroke="#00a65f"/><path d="M490.9 287.5L493.0 291.1L494.8 293.1L492.7 289.5z" fill="#005300" stroke="#005300"/><path d="M499.2 300.4L501.2 302.8L502.9 304.7L500.9 302.3z" fill="#005b1e" stroke="#005b1e"/><path d="M549.6 315.0L551.9 312.4L553.2 314.1L550.9 316.6z" fill="#006b46" stroke="#006b46"/><path d="M553.2 314.1L555.5 311.5L556.8 312.9L554.5 315.5z" fill="#006741" stroke="#006741"/><path d="M546.0 315.6L548.3 313.1L549.6 315.0L547.4 317.5z" fill="#006e4b" stroke="#006e4b"/><path d="M488.8 283.7L490.9 287.5L492.7 289.5L490.6 285.7z" fill="#085200" stroke="#085200"/><path d="M556.8 312.9L559.2 310.4L560.5 311.5L558.1 314.0z" fill="#00633b" stroke="#00633b"/><path d="M501.2 302.8L503.2 304.9L504.9 306.8L502.9 304.7z" fill="#00b948" stroke="#00b948"/><path d="M525.9 316.0L528.0 314.7L529.5 317.0L527.4 318.3z" fill="#00805b" stroke="#00805b"/><path d="M542.4 316.0L544.7 313.6L546.0 315.6L543.8 318.0z" fill="#00714e" stroke="#00714e"/><path d="M560.5 311.5L562.8 309.1L564.1 309.9L561.8 312.3z" fill="#005e34" stroke="#005e34"/><path d="M486.7 279.7L488.8 283.7L490.6 285.7L488.6 281.8z" fill="#115100" stroke="#115100"/><path d="M538.8 316.1L541.0 313.8L542.4 316.0L540.2 318.2z" fill="#007450" stroke="#007450"/><path d="M516.7 313.5L518.7 313.2L520.3 315.4L518.2 315.6z" fill="#008f5c" stroke="#008f5c"/><path d="M511.0 310.8L513.0 311.3L514.6 313.3L512.6 312.8z" fill="#009d5a" stroke="#009d5a"/><path d="M503.2 304.9L505.3 306.6L506.9 308.5L504.9 306.8z" fill="#00b24c" stroke="#00b24c"/><path d="M484.6 275.6L486.7 279.7L488.6 281.8L486.5 277.7z" fill="#1b5100" stroke="#1b5100"/><path d="M535.3 315.9L537.4 313.8L538.8 316.1L536.7 318.1z" fill="#007751" stroke="#007751"/><path d="M522.3 314.7L524.4 313.8L525.9 316.0L523.9 317.0z" fill="#008456" stroke="#008456"/><path d="M505.3 306.6L507.3 308.0L509.0 309.8L506.9 308.5z" fill="#00ab4e" stroke="#00ab4e"/><path d="M531.7 315.4L533.8 313.6L535.3 315.9L533.1 317.7z" fill="#007a50" stroke="#007a50"/><path d="M513.0 311.3L515.1 311.4L516.7 313.5L514.6 313.3z" fill="#009553" stroke="#009553"/><path d="M493.3 292.8L495.4 295.9L497.1 297.6L495.1 294.5z" fill="#005708" stroke="#005708"/><path d="M491.2 289.3L493.3 292.8L495.1 294.5L493.0 291.1z" fill="#005600" stroke="#005600"/><path d="M495.4 295.9L497.4 298.7L499.2 300.4L497.1 297.6z" fill="#005a0f" stroke="#005a0f"/><path d="M518.7 313.2L520.8 312.6L522.3 314.7L520.3 315.4z" fill="#008851" stroke="#008851"/><path d="M528.0 314.7L530.2 313.1L531.7 315.4L529.5 317.0z" fill="#007d4e" stroke="#007d4e"/><path d="M507.3 308.0L509.3 308.9L511.0 310.8L509.0 309.8z" fill="#00a34c" stroke="#00a34c"/><path d="M489.1 285.7L491.2 289.3L493.0 291.1L490.9 287.5z" fill="#085400" stroke="#085400"/><path d="M497.4 298.7L499.5 301.1L501.2 302.8L499.2 300.4z" fill="#005d16" stroke="#005d16"/><path d="M551.9 312.4L554.2 309.8L555.5 311.5L553.2 314.1z" fill="#006b39" stroke="#006b39"/><path d="M555.5 311.5L557.9 309.0L559.2 310.4L556.8 312.9z" fill="#006735" stroke="#006735"/><path d="M548.3 313.1L550.6 310.5L551.9 312.4L549.6 315.0z" fill="#006e3d" stroke="#006e3d"/><path d="M487.0 281.8L489.1 285.7L490.9 287.5L488.8 283.7z" fill="#115300" stroke="#115300"/><path d="M559.2 310.4L561.6 307.9L562.8 309.1L560.5 311.5z" fill="#00632f" stroke="#00632f"/><path d="M544.7 313.6L546.9 311.0L548.3 313.1L546.0 315.6z" fill="#007140" stroke="#007140"/><path d="M499.5 301.1L501.5 303.3L503.2 304.9L501.2 302.8z" fill="#00611c" stroke="#00611c"/><path d="M562.8 309.1L565.2 306.7L566.5 307.6L564.1 309.9z" fill="#005f29" stroke="#005f29"/><path d="M484.9 277.8L487.0 281.8L488.8 283.7L486.7 279.7z" fill="#1a5200" stroke="#1a5200"/><path d="M541.0 313.8L543.3 311.3L544.7 313.6L542.4 316.0z" fill="#007342" stroke="#007342"/><path d="M524.4 313.8L526.5 312.4L528.0 314.7L525.9 316.0z" fill="#00804b" stroke="#00804b"/><path d="M501.5 303.3L503.6 305.0L505.3 306.6L503.2 304.9z" fill="#00b03a" stroke="#00b03a"/><path d="M482.8 273.7L484.9 277.8L486.7 279.7L484.6 275.6z" fill="#235200" stroke="#235200"/><path d="M537.4 313.8L539.6 311.5L541.0 313.8L538.8 316.1z" fill="#007643" stroke="#007643"/><path d="M515.1 311.4L517.1 311.2L518.7 313.2L516.7 313.5z" fill="#008d4a" stroke="#008d4a"/><path d="M509.3 308.9L511.4 309.4L513.0 311.3L511.0 310.8z" fill="#009a48" stroke="#009a48"/><path d="M533.8 313.6L536.0 311.4L537.4 313.8L535.3 315.9z" fill="#007843" stroke="#007843"/><path d="M520.8 312.6L522.9 311.6L524.4 313.8L522.3 314.7z" fill="#008246" stroke="#008246"/><path d="M503.6 305.0L505.6 306.3L507.3 308.0L505.3 306.6z" fill="#00a83c" stroke="#00a83c"/><path d="M530.2 313.1L532.3 311.2L533.8 313.6L531.7 315.4z" fill="#007a41" stroke="#007a41"/><path d="M491.5 291.3L493.6 294.4L495.4 295.9L493.3 292.8z" fill="#005900" stroke="#005900"/><path d="M511.4 309.4L513.4 309.5L515.1 311.4L513.0 311.3z" fill="#009242" stroke="#009242"/><path d="M489.4 287.8L491.5 291.3L493.3 292.8L491.2 289.3z" fill="#085700" stroke="#085700"/><path d="M493.6 294.4L495.7 297.2L497.4 298.7L495.4 295.9z" fill="#005c07" stroke="#005c07"/><path d="M487.3 284.2L489.4 287.8L491.2 289.3L489.1 285.7z" fill="#105600" stroke="#105600"/><path d="M495.7 297.2L497.7 299.7L499.5 301.1L497.4 298.7z" fill="#005f0e" stroke="#005f0e"/><path d="M505.6 306.3L507.7 307.2L509.3 308.9L507.3 308.0z" fill="#009f3b" stroke="#009f3b"/><path d="M517.1 311.2L519.2 310.5L520.8 312.6L518.7 313.2z" fill="#008541" stroke="#008541"/><path d="M557.9 309.0L560.3 306.4L561.6 307.9L559.2 310.4z" fill="#006829" stroke="#006829"/><path d="M554.2 309.8L556.6 307.2L557.9 309.0L555.5 311.5z" fill="#006b2d" stroke="#006b2d"/><path d="M561.6 307.9L564.0 305.6L565.2 306.7L562.8 309.1z" fill="#006425" stroke="#006425"/><path d="M485.2 280.3L487.3 284.2L489.1 285.7L487.0 281.8z" fill="#185500" stroke="#185500"/><path d="M550.6 310.5L552.9 307.9L554.2 309.8L551.9 312.4z" fill="#006e30" stroke="#006e30"/><path d="M526.5 312.4L528.7 310.8L530.2 313.1L528.0 314.7z" fill="#007c3f" stroke="#007c3f"/><path d="M565.2 306.7L567.6 304.5L568.9 305.4L566.5 307.6z" fill="#006020" stroke="#006020"/><path d="M546.9 311.0L549.2 308.4L550.6 310.5L548.3 313.1z" fill="#007033" stroke="#007033"/><path d="M497.7 299.7L499.8 301.8L501.5 303.3L499.5 301.1z" fill="#006314" stroke="#006314"/><path d="M483.1 276.2L485.2 280.3L487.0 281.8L484.9 277.8z" fill="#225400" stroke="#225400"/><path d="M543.3 311.3L545.6 308.7L546.9 311.0L544.7 313.6z" fill="#007234" stroke="#007234"/><path d="M499.8 301.8L501.8 303.6L503.6 305.0L501.5 303.3z" fill="#006819" stroke="#006819"/><path d="M539.6 311.5L541.9 309.0L543.3 311.3L541.0 313.8z" fill="#007435" stroke="#007435"/><path d="M480.9 272.0L483.1 276.2L484.9 277.8L482.8 273.7z" fill="#2b5400" stroke="#2b5400"/><path d="M522.9 311.6L525.0 310.2L526.5 312.4L524.4 313.8z" fill="#007e3b" stroke="#007e3b"/><path d="M507.7 307.2L509.7 307.8L511.4 309.4L509.3 308.9z" fill="#009638" stroke="#009638"/><path d="M513.4 309.5L515.5 309.3L517.1 311.2L515.1 311.4z" fill="#00893a" stroke="#00893a"/><path d="M536.0 311.4L538.2 309.1L539.6 311.5L537.4 313.8z" fill="#007635" stroke="#007635"/><path d="M501.8 303.6L503.9 304.9L505.6 306.3L503.6 305.0z" fill="#00a42c" stroke="#00a42c"/><path d="M532.3 311.2L534.5 309.0L536.0 311.4L533.8 313.6z" fill="#007834" stroke="#007834"/><path d="M519.2 310.5L521.3 309.5L522.9 311.6L520.8 312.6z" fill="#008037" stroke="#008037"/><path d="M489.7 290.1L491.8 293.2L493.6 294.4L491.5 291.3z" fill="#075c00" stroke="#075c00"/><path d="M487.6 286.6L489.7 290.1L491.5 291.3L489.4 287.8z" fill="#0f5a00" stroke="#0f5a00"/><path d="M491.8 293.2L493.9 296.1L495.7 297.2L493.6 294.4z" fill="#005e00" stroke="#005e00"/><path d="M485.5 282.9L487.6 286.6L489.4 287.8L487.3 284.2z" fill="#175800" stroke="#175800"/><path d="M509.7 307.8L511.8 307.9L513.4 309.5L511.4 309.4z" fill="#008d32" stroke="#008d32"/><path d="M493.9 296.1L496.0 298.6L497.7 299.7L495.7 297.2z" fill="#006207" stroke="#006207"/><path d="M528.7 310.8L530.8 308.8L532.3 311.2L530.2 313.1z" fill="#007933" stroke="#007933"/><path d="M503.9 304.9L506.0 305.8L507.7 307.2L505.6 306.3z" fill="#009b2c" stroke="#009b2c"/><path d="M483.3 279.0L485.5 282.9L487.3 284.2L485.2 280.3z" fill="#205700" stroke="#205700"/><path d="M564.0 305.6L566.4 303.3L567.6 304.5L565.2 306.7z" fill="#00661a" stroke="#00661a"/><path d="M560.3 306.4L562.7 304.0L564.0 305.6L561.6 307.9z" fill="#00691e" stroke="#00691e"/><path d="M567.6 304.5L570.1 302.6L571.3 303.4L568.9 305.4z" fill="#006217" stroke="#006217"/><path d="M556.6 307.2L559.0 304.7L560.3 306.4L557.9 309.0z" fill="#006c21" stroke="#006c21"/><path d="M496.0 298.6L498.0 300.7L499.8 301.8L497.7 299.7z" fill="#00660d" stroke="#00660d"/><path d="M552.9 307.9L555.3 305.2L556.6 307.2L554.2 309.8z" fill="#006e23" stroke="#006e23"/><path d="M515.5 309.3L517.6 308.6L519.2 310.5L517.1 311.2z" fill="#008331" stroke="#008331"/><path d="M481.2 274.9L483.3 279.0L485.2 280.3L483.1 276.2z" fill="#295600" stroke="#295600"/><path d="M549.2 308.4L551.6 305.7L552.9 307.9L550.6 310.5z" fill="#007025" stroke="#007025"/><path d="M525.0 310.2L527.1 308.5L528.7 310.8L526.5 312.4z" fill="#007b30" stroke="#007b30"/><path d="M545.6 308.7L547.9 306.1L549.2 308.4L546.9 311.0z" fill="#007227" stroke="#007227"/><path d="M498.0 300.7L500.1 302.5L501.8 303.6L499.8 301.8z" fill="#006b12" stroke="#006b12"/><path d="M479.0 270.7L481.2 274.9L483.1 276.2L480.9 272.0z" fill="#335600" stroke="#335600"/><path d="M541.9 309.0L544.2 306.3L545.6 308.7L543.3 311.3z" fill="#007327" stroke="#007327"/><path d="M506.0 305.8L508.0 306.4L509.7 307.8L507.7 307.2z" fill="#009129" stroke="#009129"/><path d="M521.3 309.5L523.4 308.1L525.0 310.2L522.9 311.6z" fill="#007c2d" stroke="#007c2d"/><path d="M511.8 307.9L513.8 307.6L515.5 309.3L513.4 309.5z" fill="#00852b" stroke="#00852b"/><path d="M538.2 309.1L540.5 306.5L541.9 309.0L539.6 311.5z" fill="#007527" stroke="#007527"/><path d="M500.1 302.5L502.2 303.8L503.9 304.9L501.8 303.6z" fill="#007216" stroke="#007216"/><path d="M534.5 309.0L536.8 306.6L538.2 309.1L536.0 311.4z" fill="#007627" stroke="#007627"/><path d="M487.9 289.2L490.0 292.4L491.8 293.2L489.7 290.1z" fill="#0e5f00" stroke="#0e5f00"/><path d="M485.8 285.7L487.9 289.2L489.7 290.1L487.6 286.6z" fill="#155c00" stroke="#155c00"/><path d="M490.0 292.4L492.1 295.3L493.9 296.1L491.8 293.2z" fill="#066200" stroke="#066200"/><path d="M483.6 282.0L485.8 285.7L487.6 286.6L485.5 282.9z" fill="#1e5b00" stroke="#1e5b00"/><path d="M517.6 308.6L519.7 307.6L521.3 309.5L519.2 310.5z" fill="#007e29" stroke="#007e29"/><path d="M492.1 295.3L494.2 297.8L496.0 298.6L493.9 296.1z" fill="#006500" stroke="#006500"/><path d="M530.8 308.8L533.0 306.6L534.5 309.0L532.3 311.2z" fill="#007726" stroke="#007726"/><path d="M481.5 278.1L483.6 282.0L485.5 282.9L483.3 279.0z" fill="#275a00" stroke="#275a00"/><path d="M570.1 302.6L572.5 300.8L573.8 301.7L571.3 303.4z" fill="#00650e" stroke="#00650e"/><path d="M508.0 306.4L510.1 306.5L511.8 307.9L509.7 307.8z" fill="#008824" stroke="#008824"/><path d="M566.4 303.3L568.8 301.3L570.1 302.6L567.6 304.5z" fill="#006811" stroke="#006811"/><path d="M502.2 303.8L504.2 304.7L506.0 305.8L503.9 304.9z" fill="#00951e" stroke="#00951e"/><path d="M494.2 297.8L496.3 299.9L498.0 300.7L496.0 298.6z" fill="#006a06" stroke="#006a06"/><path d="M562.7 304.0L565.1 301.8L566.4 303.3L564.0 305.6z" fill="#006b13" stroke="#006b13"/><path d="M559.0 304.7L561.4 302.2L562.7 304.0L560.3 306.4z" fill="#006d15" stroke="#006d15"/><path d="M479.3 273.9L481.5 278.1L483.3 279.0L481.2 274.9z" fill="#305900" stroke="#305900"/><path d="M527.1 308.5L529.3 306.6L530.8 308.8L528.7 310.8z" fill="#007824" stroke="#007824"/><path d="M555.3 305.2L557.7 302.6L559.0 304.7L556.6 307.2z" fill="#006f17" stroke="#006f17"/><path d="M513.8 307.6L515.9 306.9L517.6 308.6L515.5 309.3z" fill="#007f24" stroke="#007f24"/><path d="M551.6 305.7L554.0 303.0L555.3 305.2L552.9 307.9z" fill="#007118" stroke="#007118"/><path d="M496.3 299.9L498.4 301.7L500.1 302.5L498.0 300.7z" fill="#00700b" stroke="#00700b"/><path d="M477.1 269.7L479.3 273.9L481.2 274.9L479.0 270.7z" fill="#3a5800" stroke="#3a5800"/><path d="M547.9 306.1L550.2 303.3L551.6 305.7L549.2 308.4z" fill="#007219" stroke="#007219"/><path d="M523.4 308.1L525.6 306.4L527.1 308.5L525.0 310.2z" fill="#007922" stroke="#007922"/><path d="M504.2 304.7L506.3 305.3L508.0 306.4L506.0 305.8z" fill="#008b1c" stroke="#008b1c"/><path d="M544.2 306.3L546.5 303.6L547.9 306.1L545.6 308.7z" fill="#007319" stroke="#007319"/><path d="M498.4 301.7L500.4 303.0L502.2 303.8L500.1 302.5z" fill="#00770f" stroke="#00770f"/><path d="M510.1 306.5L512.2 306.2L513.8 307.6L511.8 307.9z" fill="#00801e" stroke="#00801e"/><path d="M540.5 306.5L542.8 303.9L544.2 306.3L541.9 309.0z" fill="#00741a" stroke="#00741a"/><path d="M486.1 288.7L488.2 291.9L490.0 292.4L487.9 289.2z" fill="#136300" stroke="#136300"/><path d="M484.0 285.2L486.1 288.7L487.9 289.2L485.8 285.7z" fill="#1c6000" stroke="#1c6000"/><path d="M488.2 291.9L490.3 294.8L492.1 295.3L490.0 292.4z" fill="#0c6600" stroke="#0c6600"/><path d="M519.7 307.6L521.8 306.2L523.4 308.1L521.3 309.5z" fill="#007a1f" stroke="#007a1f"/><path d="M481.8 281.5L484.0 285.2L485.8 285.7L483.6 282.0z" fill="#245e00" stroke="#245e00"/><path d="M490.3 294.8L492.4 297.3L494.2 297.8L492.1 295.3z" fill="#066a00" stroke="#066a00"/><path d="M536.8 306.6L539.0 304.1L540.5 306.5L538.2 309.1z" fill="#007519" stroke="#007519"/><path d="M479.6 277.5L481.8 281.5L483.6 282.0L481.5 278.1z" fill="#2d5d00" stroke="#2d5d00"/><path d="M572.5 300.8L575.0 299.4L576.2 300.3L573.8 301.7z" fill="#006806" stroke="#006806"/><path d="M492.4 297.3L494.5 299.5L496.3 299.9L494.2 297.8z" fill="#006f00" stroke="#006f00"/><path d="M568.8 301.3L571.3 299.6L572.5 300.8L570.1 302.6z" fill="#006b07" stroke="#006b07"/><path d="M533.0 306.6L535.3 304.2L536.8 306.6L534.5 309.0z" fill="#007519" stroke="#007519"/><path d="M500.4 303.0L502.5 304.0L504.2 304.7L502.2 303.8z" fill="#007e11" stroke="#007e11"/><path d="M515.9 306.9L518.1 305.9L519.7 307.6L517.6 308.6z" fill="#007a1b" stroke="#007a1b"/><path d="M477.5 273.4L479.6 277.5L481.5 278.1L479.3 273.9z" fill="#375c00" stroke="#375c00"/><path d="M506.3 305.3L508.4 305.4L510.1 306.5L508.0 306.4z" fill="#008218" stroke="#008218"/><path d="M565.1 301.8L567.6 299.8L568.8 301.3L566.4 303.3z" fill="#006d08" stroke="#006d08"/><path d="M561.4 302.2L563.8 300.0L565.1 301.8L562.7 304.0z" fill="#006f09" stroke="#006f09"/><path d="M529.3 306.6L531.5 304.3L533.0 306.6L530.8 308.8z" fill="#007618" stroke="#007618"/><path d="M494.5 299.5L496.6 301.3L498.4 301.7L496.3 299.9z" fill="#007505" stroke="#007505"/><path d="M475.3 269.1L477.5 273.4L479.3 273.9L477.1 269.7z" fill="#425c00" stroke="#425c00"/><path d="M557.7 302.6L560.1 300.2L561.4 302.2L559.0 304.7z" fill="#00700a" stroke="#00700a"/><path d="M512.2 306.2L514.3 305.5L515.9 306.9L513.8 307.6z" fill="#007b18" stroke="#007b18"/><path d="M554.0 303.0L556.4 300.4L557.7 302.6L555.3 305.2z" fill="#00710b" stroke="#00710b"/><path d="M525.6 306.4L527.7 304.4L529.3 306.6L527.1 308.5z" fill="#007616" stroke="#007616"/><path d="M502.5 304.0L504.6 304.5L506.3 305.3L504.2 304.7z" fill="#008312" stroke="#008312"/><path d="M484.3 288.6L486.4 291.9L488.2 291.9L486.1 288.7z" fill="#196700" stroke="#196700"/><path d="M496.6 301.3L498.7 302.6L500.4 303.0L498.4 301.7z" fill="#007d09" stroke="#007d09"/><path d="M550.2 303.3L552.6 300.6L554.0 303.0L551.6 305.7z" fill="#00720b" stroke="#00720b"/><path d="M482.1 285.1L484.3 288.6L486.1 288.7L484.0 285.2z" fill="#216500" stroke="#216500"/><path d="M486.4 291.9L488.5 294.8L490.3 294.8L488.2 291.9z" fill="#116b00" stroke="#116b00"/><path d="M480.0 281.3L482.1 285.1L484.0 285.2L481.8 281.5z" fill="#2a6300" stroke="#2a6300"/><path d="M521.8 306.2L524.0 304.4L525.6 306.4L523.4 308.1z" fill="#007615" stroke="#007615"/><path d="M488.5 294.8L490.6 297.3L492.4 297.3L490.3 294.8z" fill="#0b6f00" stroke="#0b6f00"/><path d="M546.5 303.6L548.9 300.9L550.2 303.3L547.9 306.1z" fill="#00730c" stroke="#00730c"/><path d="M508.4 305.4L510.5 305.1L512.2 306.2L510.1 306.5z" fill="#007b13" stroke="#007b13"/><path d="M477.8 277.4L480.0 281.3L481.8 281.5L479.6 277.5z" fill="#346100" stroke="#346100"/><path d="M575.0 299.4L577.4 298.3L578.7 299.2L576.2 300.3z" fill="#016c00" stroke="#016c00"/><path d="M542.8 303.9L545.1 301.1L546.5 303.6L544.2 306.3z" fill="#00740c" stroke="#00740c"/><path d="M490.6 297.3L492.7 299.5L494.5 299.5L492.4 297.3z" fill="#057500" stroke="#057500"/><path d="M518.1 305.9L520.2 304.4L521.8 306.2L519.7 307.6z" fill="#007612" stroke="#007612"/><path d="M475.6 273.2L477.8 277.4L479.6 277.5L477.5 273.4z" fill="#3e6000" stroke="#3e6000"/><path d="M571.3 299.6L573.7 298.1L575.0 299.4L572.5 300.8z" fill="#016e00" stroke="#016e00"/><path d="M498.7 302.6L500.8 303.6L502.5 304.0L500.4 303.0z" fill="#00860b" stroke="#00860b"/><path d="M539.0 304.1L541.3 301.3L542.8 303.9L540.5 306.5z" fill="#00740c" stroke="#00740c"/><path d="M504.6 304.5L506.7 304.6L508.4 305.4L506.3 305.3z" fill="#007b0f" stroke="#007b0f"/><path d="M492.7 299.5L494.8 301.2L496.6 301.3L494.5 299.5z" fill="#007c00" stroke="#007c00"/><path d="M567.6 299.8L570.0 298.0L571.3 299.6L568.8 301.3z" fill="#017000" stroke="#017000"/><path d="M473.4 268.9L475.6 273.2L477.5 273.4L475.3 269.1z" fill="#486000" stroke="#486000"/><path d="M535.3 304.2L537.5 301.6L539.0 304.1L536.8 306.6z" fill="#00740b" stroke="#00740b"/><path d="M514.3 305.5L516.4 304.4L518.1 305.9L515.9 306.9z" fill="#007610" stroke="#007610"/><path d="M563.8 300.0L566.3 297.9L567.6 299.8L565.1 301.8z" fill="#027100" stroke="#027100"/><path d="M531.5 304.3L533.8 301.9L535.3 304.2L533.0 306.6z" fill="#00740b" stroke="#00740b"/><path d="M482.5 289.0L484.6 292.2L486.4 291.9L484.3 288.6z" fill="#1d6d00" stroke="#1d6d00"/><path d="M480.3 285.4L482.5 289.0L484.3 288.6L482.1 285.1z" fill="#266a00" stroke="#266a00"/><path d="M484.6 292.2L486.7 295.1L488.5 294.8L486.4 291.9z" fill="#157100" stroke="#157100"/><path d="M560.1 300.2L562.6 297.9L563.8 300.0L561.4 302.2z" fill="#027200" stroke="#027200"/><path d="M494.8 301.2L496.9 302.6L498.7 302.6L496.6 301.3z" fill="#008504" stroke="#008504"/><path d="M478.1 281.6L480.3 285.4L482.1 285.1L480.0 281.3z" fill="#2f6800" stroke="#2f6800"/><path d="M500.8 303.6L502.9 304.1L504.6 304.5L502.5 304.0z" fill="#00920c" stroke="#00920c"/><path d="M510.5 305.1L512.6 304.4L514.3 305.5L512.2 306.2z" fill="#00750d" stroke="#00750d"/><path d="M486.7 295.1L488.9 297.7L490.6 297.3L488.5 294.8z" fill="#0e7600" stroke="#0e7600"/><path d="M527.7 304.4L530.0 302.1L531.5 304.3L529.3 306.6z" fill="#00740a" stroke="#00740a"/><path d="M475.9 277.6L478.1 281.6L480.0 281.3L477.8 277.4z" fill="#396600" stroke="#396600"/><path d="M556.4 300.4L558.8 297.9L560.1 300.2L557.7 302.6z" fill="#027300" stroke="#027300"/><path d="M577.4 298.3L579.9 297.5L581.1 298.5L578.7 299.2z" fill="#077000" stroke="#077000"/><path d="M488.9 297.7L491.0 299.9L492.7 299.5L490.6 297.3z" fill="#087d00" stroke="#087d00"/><path d="M524.0 304.4L526.2 302.4L527.7 304.4L525.6 306.4z" fill="#00730a" stroke="#00730a"/><path d="M552.6 300.6L555.0 298.0L556.4 300.4L554.0 303.0z" fill="#027300" stroke="#027300"/><path d="M473.7 273.4L475.9 277.6L477.8 277.4L475.6 273.2z" fill="#446500" stroke="#446500"/><path d="M506.7 304.6L508.8 304.3L510.5 305.1L508.4 305.4z" fill="#00740b" stroke="#00740b"/><path d="M573.7 298.1L576.2 297.0L577.4 298.3L575.0 299.4z" fill="#097200" stroke="#097200"/><path d="M496.9 302.6L499.0 303.6L500.8 303.6L498.7 302.6z" fill="#009106" stroke="#009106"/><path d="M548.9 300.9L551.3 298.1L552.6 300.6L550.2 303.3z" fill="#027300" stroke="#027300"/><path d="M520.2 304.4L522.4 302.7L524.0 304.4L521.8 306.2z" fill="#007309" stroke="#007309"/><path d="M491.0 299.9L493.1 301.6L494.8 301.2L492.7 299.5z" fill="#048500" stroke="#048500"/><path d="M471.5 269.1L473.7 273.4L475.6 273.2L473.4 268.9z" fill="#4f6400" stroke="#4f6400"/><path d="M545.1 301.1L547.5 298.3L548.9 300.9L546.5 303.6z" fill="#027400" stroke="#027400"/><path d="M502.9 304.1L504.9 304.2L506.7 304.6L504.6 304.5z" fill="#007308" stroke="#007308"/><path d="M480.6 289.7L482.8 293.0L484.6 292.2L482.5 289.0z" fill="#207300" stroke="#207300"/><path d="M570.0 298.0L572.5 296.5L573.7 298.1L571.3 299.6z" fill="#0b7300" stroke="#0b7300"/><path d="M516.4 304.4L518.5 303.0L520.2 304.4L518.1 305.9z" fill="#007108" stroke="#007108"/><path d="M478.5 286.2L480.6 289.7L482.5 289.0L480.3 285.4z" fill="#297000" stroke="#297000"/><path d="M482.8 293.0L484.9 295.9L486.7 295.1L484.6 292.2z" fill="#187800" stroke="#187800"/><path d="M476.3 282.4L478.5 286.2L480.3 285.4L478.1 281.6z" fill="#336d00" stroke="#336d00"/><path d="M541.3 301.3L543.7 298.5L545.1 301.1L542.8 303.9z" fill="#027300" stroke="#027300"/><path d="M484.9 295.9L487.1 298.5L488.9 297.7L486.7 295.1z" fill="#117e00" stroke="#117e00"/><path d="M493.1 301.6L495.2 303.0L496.9 302.6L494.8 301.2z" fill="#009100" stroke="#009100"/><path d="M566.3 297.9L568.8 296.1L570.0 298.0L567.6 299.8z" fill="#0c7400" stroke="#0c7400"/><path d="M512.6 304.4L514.7 303.3L516.4 304.4L514.3 305.5z" fill="#007006" stroke="#007006"/><path d="M474.1 278.3L476.3 282.4L478.1 281.6L475.9 277.6z" fill="#3d6c00" stroke="#3d6c00"/><path d="M537.5 301.6L539.9 298.8L541.3 301.3L539.0 304.1z" fill="#027300" stroke="#027300"/><path d="M499.0 303.6L501.1 304.1L502.9 304.1L500.8 303.6z" fill="#009e06" stroke="#009e06"/><path d="M579.9 297.5L582.4 297.2L583.6 298.1L581.1 298.5z" fill="#0d7600" stroke="#0d7600"/><path d="M487.1 298.5L489.2 300.7L491.0 299.9L488.9 297.7z" fill="#0b8500" stroke="#0b8500"/><path d="M471.9 274.1L474.1 278.3L475.9 277.6L473.7 273.4z" fill="#486a00" stroke="#486a00"/><path d="M533.8 301.9L536.0 299.2L537.5 301.6L535.3 304.2z" fill="#027300" stroke="#027300"/><path d="M562.6 297.9L565.0 295.8L566.3 297.9L563.8 300.0z" fill="#0d7400" stroke="#0d7400"/><path d="M508.8 304.3L510.9 303.6L512.6 304.4L510.5 305.1z" fill="#006e05" stroke="#006e05"/><path d="M530.0 302.1L532.2 299.6L533.8 301.9L531.5 304.3z" fill="#027200" stroke="#027200"/><path d="M489.2 300.7L491.3 302.5L493.1 301.6L491.0 299.9z" fill="#069100" stroke="#069100"/><path d="M469.6 269.8L471.9 274.1L473.7 273.4L471.5 269.1z" fill="#546900" stroke="#546900"/><path d="M495.2 303.0L497.3 304.0L499.0 303.6L496.9 302.6z" fill="#009f02" stroke="#009f02"/><path d="M576.2 297.0L578.7 296.2L579.9 297.5L577.4 298.3z" fill="#107700" stroke="#107700"/><path d="M558.8 297.9L561.3 295.5L562.6 297.9L560.1 300.2z" fill="#0e7400" stroke="#0e7400"/><path d="M478.8 290.9L481.0 294.2L482.8 293.0L480.6 289.7z" fill="#227a00" stroke="#227a00"/><path d="M504.9 304.2L507.0 303.9L508.8 304.3L506.7 304.6z" fill="#006c04" stroke="#006c04"/><path d="M476.7 287.4L478.8 290.9L480.6 289.7L478.5 286.2z" fill="#2c7600" stroke="#2c7600"/><path d="M481.0 294.2L483.2 297.1L484.9 295.9L482.8 293.0z" fill="#1a7f00" stroke="#1a7f00"/><path d="M526.2 302.4L528.4 300.1L530.0 302.1L527.7 304.4z" fill="#027100" stroke="#027100"/><path d="M474.5 283.6L476.7 287.4L478.5 286.2L476.3 282.4z" fill="#367400" stroke="#367400"/><path d="M483.2 297.1L485.3 299.7L487.1 298.5L484.9 295.9z" fill="#128600" stroke="#128600"/><path d="M555.0 298.0L557.5 295.4L558.8 297.9L556.4 300.4z" fill="#0f7400" stroke="#0f7400"/><path d="M522.4 302.7L524.6 300.6L526.2 302.4L524.0 304.4z" fill="#027000" stroke="#027000"/><path d="M472.2 279.5L474.5 283.6L476.3 282.4L474.1 278.3z" fill="#417100" stroke="#417100"/><path d="M501.1 304.1L503.2 304.2L504.9 304.2L502.9 304.1z" fill="#00aa04" stroke="#00aa04"/><path d="M491.3 302.5L493.4 303.9L495.2 303.0L493.1 301.6z" fill="#029f00" stroke="#029f00"/><path d="M572.5 296.5L575.0 295.4L576.2 297.0L573.7 298.1z" fill="#137700" stroke="#137700"/><path d="M485.3 299.7L487.4 301.9L489.2 300.7L487.1 298.5z" fill="#0c9100" stroke="#0c9100"/><path d="M582.4 297.2L584.8 297.3L586.0 298.2L583.6 298.1z" fill="#117d00" stroke="#117d00"/><path d="M518.5 303.0L520.7 301.2L522.4 302.7L520.2 304.4z" fill="#016e00" stroke="#016e00"/><path d="M551.3 298.1L553.7 295.4L555.0 298.0L552.6 300.6z" fill="#107400" stroke="#107400"/><path d="M470.0 275.3L472.2 279.5L474.1 278.3L471.9 274.1z" fill="#4c7000" stroke="#4c7000"/><path d="M497.3 304.0L499.4 304.5L501.1 304.1L499.0 303.6z" fill="#00ac02" stroke="#00ac02"/><path d="M514.7 303.3L516.9 301.8L518.5 303.0L516.4 304.4z" fill="#016c00" stroke="#016c00"/><path d="M547.5 298.3L549.9 295.5L551.3 298.1L548.9 300.9z" fill="#107400" stroke="#107400"/><path d="M568.8 296.1L571.3 294.6L572.5 296.5L570.0 298.0z" fill="#167700" stroke="#167700"/><path d="M477.0 292.6L479.2 295.9L481.0 294.2L478.8 290.9z" fill="#228100" stroke="#228100"/><path d="M487.4 301.9L489.5 303.7L491.3 302.5L489.2 300.7z" fill="#079d01" stroke="#079d01"/><path d="M467.8 271.0L470.0 275.3L471.9 274.1L469.6 269.8z" fill="#586f00" stroke="#586f00"/><path d="M474.8 289.0L477.0 292.6L478.8 290.9L476.7 287.4z" fill="#2c7d00" stroke="#2c7d00"/><path d="M479.2 295.9L481.4 298.8L483.2 297.1L481.0 294.2z" fill="#1a8700" stroke="#1a8700"/><path d="M510.9 303.6L513.0 302.5L514.7 303.3L512.6 304.4z" fill="#016900" stroke="#016900"/><path d="M472.6 285.2L474.8 289.0L476.7 287.4L474.5 283.6z" fill="#377a00" stroke="#377a00"/><path d="M493.4 303.9L495.5 304.8L497.3 304.0L495.2 303.0z" fill="#00ad00" stroke="#00ad00"/><path d="M543.7 298.5L546.0 295.7L547.5 298.3L545.1 301.1z" fill="#107300" stroke="#107300"/><path d="M481.4 298.8L483.5 301.4L485.3 299.7L483.2 297.1z" fill="#129101" stroke="#129101"/><path d="M578.7 296.2L581.2 295.9L582.4 297.2L579.9 297.5z" fill="#167d00" stroke="#167d00"/><path d="M507.0 303.9L509.2 303.2L510.9 303.6L508.8 304.3z" fill="#016600" stroke="#016600"/><path d="M470.4 281.1L472.6 285.2L474.5 283.6L472.2 279.5z" fill="#427700" stroke="#427700"/><path d="M565.0 295.8L567.5 293.9L568.8 296.1L566.3 297.9z" fill="#187700" stroke="#187700"/><path d="M539.9 298.8L542.2 296.0L543.7 298.5L541.3 301.3z" fill="#107300" stroke="#107300"/><path d="M483.5 301.4L485.6 303.6L487.4 301.9L485.3 299.7z" fill="#0c9c02" stroke="#0c9c02"/><path d="M489.5 303.7L491.6 305.1L493.4 303.9L491.3 302.5z" fill="#03ac01" stroke="#03ac01"/><path d="M503.2 304.2L505.3 303.9L507.0 303.9L504.9 304.2z" fill="#016300" stroke="#016300"/><path d="M584.8 297.3L587.2 297.8L588.4 298.7L586.0 298.2z" fill="#158500" stroke="#158500"/><path d="M468.2 276.9L470.4 281.1L472.2 279.5L470.0 275.3z" fill="#4e7600" stroke="#4e7600"/><path d="M536.0 299.2L538.4 296.4L539.9 298.8L537.5 301.6z" fill="#0f7200" stroke="#0f7200"/><path d="M475.3 294.7L477.4 298.0L479.2 295.9L477.0 292.6z" fill="#218901" stroke="#218901"/><path d="M499.4 304.5L501.5 304.6L503.2 304.2L501.1 304.1z" fill="#01b800" stroke="#01b800"/><path d="M473.1 291.1L475.3 294.7L477.0 292.6L474.8 289.0z" fill="#2b8301" stroke="#2b8301"/><path d="M477.4 298.0L479.6 300.9L481.4 298.8L479.2 295.9z" fill="#189102" stroke="#189102"/><path d="M561.3 295.5L563.8 293.4L565.0 295.8L562.6 297.9z" fill="#1a7700" stroke="#1a7700"/><path d="M532.2 299.6L534.5 296.9L536.0 299.2L533.8 301.9z" fill="#0f7100" stroke="#0f7100"/><path d="M575.0 295.4L577.5 294.6L578.7 296.2L576.2 297.0z" fill="#1b7c00" stroke="#1b7c00"/><path d="M485.6 303.6L487.8 305.4L489.5 303.7L487.4 301.9z" fill="#08aa04" stroke="#08aa04"/><path d="M470.8 287.3L473.1 291.1L474.8 289.0L472.6 285.2z" fill="#368000" stroke="#368000"/><path d="M465.9 272.5L468.2 276.9L470.0 275.3L467.8 271.0z" fill="#5b7400" stroke="#5b7400"/><path d="M479.6 300.9L481.7 303.5L483.5 301.4L481.4 298.8z" fill="#119b04" stroke="#119b04"/><path d="M495.5 304.8L497.6 305.4L499.4 304.5L497.3 304.0z" fill="#00bb00" stroke="#00bb00"/><path d="M528.4 300.1L530.6 297.5L532.2 299.6L530.0 302.1z" fill="#0e6f00" stroke="#0e6f00"/><path d="M468.6 283.2L470.8 287.3L472.6 285.2L470.4 281.1z" fill="#427d00" stroke="#427d00"/><path d="M524.6 300.6L526.8 298.3L528.4 300.1L526.2 302.4z" fill="#0c6e00" stroke="#0c6e00"/><path d="M557.5 295.4L560.0 293.0L561.3 295.5L558.8 297.9z" fill="#1c7600" stroke="#1c7600"/><path d="M491.6 305.1L493.7 306.1L495.5 304.8L493.4 303.9z" fill="#02bb02" stroke="#02bb02"/><path d="M481.7 303.5L483.9 305.8L485.6 303.6L483.5 301.4z" fill="#0da707" stroke="#0da707"/><path d="M520.7 301.2L522.9 299.1L524.6 300.6L522.4 302.7z" fill="#0b6b00" stroke="#0b6b00"/><path d="M581.2 295.9L583.6 296.0L584.8 297.3L582.4 297.2z" fill="#1c8300" stroke="#1c8300"/><path d="M587.2 297.8L589.6 298.7L590.8 299.7L588.4 298.7z" fill="#169000" stroke="#169000"/><path d="M473.5 297.2L475.7 300.5L477.4 298.0L475.3 294.7z" fill="#1e9203" stroke="#1e9203"/><path d="M466.4 279.0L468.6 283.2L470.4 281.1L468.2 276.9z" fill="#4f7b00" stroke="#4f7b00"/><path d="M471.3 293.6L473.5 297.2L475.3 294.7L473.1 291.1z" fill="#288b02" stroke="#288b02"/><path d="M571.3 294.6L573.8 293.4L575.0 295.4L572.5 296.5z" fill="#1f7b00" stroke="#1f7b00"/><path d="M475.7 300.5L477.8 303.5L479.6 300.9L477.4 298.0z" fill="#169a05" stroke="#169a05"/><path d="M516.9 301.8L519.0 300.0L520.7 301.2L518.5 303.0z" fill="#0a6900" stroke="#0a6900"/><path d="M487.8 305.4L489.9 306.9L491.6 305.1L489.5 303.7z" fill="#07b908" stroke="#07b908"/><path d="M553.7 295.4L556.2 292.8L557.5 295.4L555.0 298.0z" fill="#1d7600" stroke="#1d7600"/><path d="M469.1 289.8L471.3 293.6L473.1 291.1L470.8 287.3z" fill="#338601" stroke="#338601"/><path d="M513.0 302.5L515.2 301.0L516.9 301.8L514.7 303.3z" fill="#086600" stroke="#086600"/><path d="M477.8 303.5L480.0 306.1L481.7 303.5L479.6 300.9z" fill="#10a509" stroke="#10a509"/><path d="M483.9 305.8L486.0 307.6L487.8 305.4L485.6 303.6z" fill="#0db60e" stroke="#0db60e"/><path d="M509.2 303.2L511.3 302.1L513.0 302.5L510.9 303.6z" fill="#066200" stroke="#066200"/><path d="M464.1 274.6L466.4 279.0L468.2 276.9L465.9 272.5z" fill="#5c7a00" stroke="#5c7a00"/><path d="M466.8 285.7L469.1 289.8L470.8 287.3L468.6 283.2z" fill="#3f8301" stroke="#3f8301"/><path d="M505.3 303.9L507.4 303.2L509.2 303.2L507.0 303.9z" fill="#055d00" stroke="#055d00"/><path d="M549.9 295.5L552.3 292.7L553.7 295.4L551.3 298.1z" fill="#1e7500" stroke="#1e7500"/><path d="M501.5 304.6L503.6 304.3L505.3 303.9L503.2 304.2z" fill="#06c100" stroke="#06c100"/><path d="M480.0 306.1L482.1 308.3L483.9 305.8L481.7 303.5z" fill="#10b212" stroke="#10b212"/><path d="M471.7 300.1L473.9 303.4L475.7 300.5L473.5 297.2z" fill="#1a9906" stroke="#1a9906"/><path d="M469.5 296.5L471.7 300.1L473.5 297.2L471.3 293.6z" fill="#249204" stroke="#249204"/><path d="M497.6 305.4L499.7 305.5L501.5 304.6L499.4 304.5z" fill="#03c600" stroke="#03c600"/><path d="M473.9 303.4L476.1 306.4L477.8 303.5L475.7 300.5z" fill="#12a209" stroke="#12a209"/><path d="M567.5 293.9L570.0 292.4L571.3 294.6L568.8 296.1z" fill="#237a00" stroke="#237a00"/><path d="M464.6 281.4L466.8 285.7L468.6 283.2L466.4 279.0z" fill="#4d8101" stroke="#4d8101"/><path d="M493.7 306.1L495.8 306.6L497.6 305.4L495.5 304.8z" fill="#02c802" stroke="#02c802"/><path d="M589.6 298.7L592.0 300.1L593.2 301.1L590.8 299.7z" fill="#169a00" stroke="#169a00"/><path d="M467.3 292.6L469.5 296.5L471.3 293.6L469.1 289.8z" fill="#2f8d02" stroke="#2f8d02"/><path d="M577.5 294.6L580.0 294.3L581.2 295.9L578.7 296.2z" fill="#228200" stroke="#228200"/><path d="M476.1 306.4L478.2 309.0L480.0 306.1L477.8 303.5z" fill="#10ae12" stroke="#10ae12"/><path d="M489.9 306.9L492.0 307.8L493.7 306.1L491.6 305.1z" fill="#0ac80d" stroke="#0ac80d"/><path d="M546.0 295.7L548.5 292.8L549.9 295.5L547.5 298.3z" fill="#1e7400" stroke="#1e7400"/><path d="M486.0 307.6L488.1 309.0L489.9 306.9L487.8 305.4z" fill="#16c51c" stroke="#16c51c"/><path d="M465.0 288.6L467.3 292.6L469.1 289.8L466.8 285.7z" fill="#3b8902" stroke="#3b8902"/><path d="M583.6 296.0L586.0 296.5L587.2 297.8L584.8 297.3z" fill="#208d00" stroke="#208d00"/><path d="M470.0 303.4L472.2 306.7L473.9 303.4L471.7 300.1z" fill="#14a00a" stroke="#14a00a"/><path d="M482.1 308.3L484.2 310.1L486.0 307.6L483.9 305.8z" fill="#1dc125" stroke="#1dc125"/><path d="M462.3 277.1L464.6 281.4L466.4 279.0L464.1 274.6z" fill="#5b7f00" stroke="#5b7f00"/><path d="M467.8 299.8L470.0 303.4L471.7 300.1L469.5 296.5z" fill="#1d9906" stroke="#1d9906"/><path d="M472.2 306.7L474.4 309.7L476.1 306.4L473.9 303.4z" fill="#0faa11" stroke="#0faa11"/><path d="M542.2 296.0L544.6 293.1L546.0 295.7L543.7 298.5z" fill="#1d7300" stroke="#1d7300"/><path d="M478.2 309.0L480.4 311.2L482.1 308.3L480.0 306.1z" fill="#1cbb27" stroke="#1cbb27"/><path d="M451.7 351.2L453.8 354.5L455.5 350.1L453.3 346.8z" fill="#179fb2" stroke="#179fb2"/><path d="M450.0 355.3L452.2 358.7L453.8 354.5L451.7 351.2z" fill="#158caf" stroke="#158caf"/><path d="M453.3 346.8L455.5 350.1L457.2 345.6L455.0 342.3z" fill="#19b2b4" stroke="#19b2b4"/><path d="M465.5 295.9L467.8 299.8L469.5 296.5L467.3 292.6z" fill="#299304" stroke="#299304"/><path d="M449.4 347.6L451.7 351.2L453.3 346.8L451.1 343.2z" fill="#11a5aa" stroke="#11a5aa"/><path d="M453.8 354.5L456.0 357.5L457.7 353.1L455.5 350.1z" fill="#209cbb" stroke="#209cbb"/><path d="M563.8 293.4L566.3 291.6L567.5 293.9L565.0 295.8z" fill="#267a00" stroke="#267a00"/><path d="M447.8 351.8L450.0 355.3L451.7 351.2L449.4 347.6z" fill="#0f92a8" stroke="#0f92a8"/><path d="M451.1 343.2L453.3 346.8L455.0 342.3L452.8 338.8z" fill="#12aca0" stroke="#12aca0"/><path d="M452.2 358.7L454.3 361.7L456.0 357.5L453.8 354.5z" fill="#1e89b8" stroke="#1e89b8"/><path d="M455.5 350.1L457.7 353.1L459.3 348.6L457.2 345.6z" fill="#22afbd" stroke="#22afbd"/><path d="M474.4 309.7L476.5 312.3L478.2 309.0L476.1 306.4z" fill="#19b525" stroke="#19b525"/><path d="M455.0 342.3L457.2 345.6L458.8 341.1L456.6 337.8z" fill="#1ab5a5" stroke="#1ab5a5"/><path d="M462.8 284.3L465.0 288.6L466.8 285.7L464.6 281.4z" fill="#498601" stroke="#498601"/><path d="M448.3 359.3L450.5 362.6L452.2 358.7L450.0 355.3z" fill="#1279ac" stroke="#1279ac"/><path d="M452.8 338.8L455.0 342.3L456.6 337.8L454.4 334.2z" fill="#14ae90" stroke="#14ae90"/><path d="M468.3 307.0L470.5 310.3L472.2 306.7L470.0 303.4z" fill="#0ea610" stroke="#0ea610"/><path d="M538.4 296.4L540.7 293.5L542.2 296.0L539.9 298.8z" fill="#1d7100" stroke="#1d7100"/><path d="M457.2 345.6L459.3 348.6L461.0 344.1L458.8 341.1z" fill="#24beba" stroke="#24beba"/><path d="M611.9 329.0L614.0 333.3L615.0 334.0L613.0 329.7z" fill="#005738" stroke="#005738"/><path d="M446.0 355.7L448.3 359.3L450.0 355.3L447.8 351.8z" fill="#0c80a4" stroke="#0c80a4"/><path d="M447.2 343.8L449.4 347.6L451.1 343.2L448.9 339.4z" fill="#0da49b" stroke="#0da49b"/><path d="M592.0 300.1L594.4 302.0L595.5 302.9L593.2 301.1z" fill="#13a300" stroke="#13a300"/><path d="M450.5 362.6L452.6 365.6L454.3 361.7L452.2 358.7z" fill="#1a76b5" stroke="#1a76b5"/><path d="M456.6 337.8L458.8 341.1L460.5 336.4L458.3 333.1z" fill="#1bb693" stroke="#1bb693"/><path d="M466.1 303.4L468.3 307.0L470.0 303.4L467.8 299.8z" fill="#159f09" stroke="#159f09"/><path d="M445.5 347.9L447.8 351.8L449.4 347.6L447.2 343.8z" fill="#0b9ba2" stroke="#0b9ba2"/><path d="M448.9 339.4L451.1 343.2L452.8 338.8L450.5 334.9z" fill="#0ea78c" stroke="#0ea78c"/><path d="M470.5 310.3L472.6 313.3L474.4 309.7L472.2 306.7z" fill="#15b023" stroke="#15b023"/><path d="M456.0 357.5L458.1 360.2L459.8 355.8L457.7 353.1z" fill="#2e9dc5" stroke="#2e9dc5"/><path d="M454.4 334.2L456.6 337.8L458.3 333.1L456.0 329.5z" fill="#14ae7e" stroke="#14ae7e"/><path d="M463.3 291.8L465.5 295.9L467.3 292.6L465.0 288.6z" fill="#358f03" stroke="#358f03"/><path d="M458.8 341.1L461.0 344.1L462.6 339.4L460.5 336.4z" fill="#24bea8" stroke="#24bea8"/><path d="M454.3 361.7L456.5 364.3L458.1 360.2L456.0 357.5z" fill="#2b8ac3" stroke="#2b8ac3"/><path d="M457.7 353.1L459.8 355.8L461.5 351.3L459.3 348.6z" fill="#30afc7" stroke="#30afc7"/><path d="M450.5 334.9L452.8 338.8L454.4 334.2L452.2 330.3z" fill="#0fa87b" stroke="#0fa87b"/><path d="M458.3 333.1L460.5 336.4L462.1 331.8L459.9 328.5z" fill="#1bb680" stroke="#1bb680"/><path d="M443.8 351.9L446.0 355.7L447.8 351.8L445.5 347.9z" fill="#09899e" stroke="#09899e"/><path d="M446.5 363.0L448.7 366.3L450.5 362.6L448.3 359.3z" fill="#0e67a7" stroke="#0e67a7"/><path d="M459.3 348.6L461.5 351.3L463.1 346.7L461.0 344.1z" fill="#31c2c8" stroke="#31c2c8"/><path d="M534.5 296.9L536.8 294.1L538.4 296.4L536.0 299.2z" fill="#1b7000" stroke="#1b7000"/><path d="M463.8 299.5L466.1 303.4L467.8 299.8L465.5 295.9z" fill="#209907" stroke="#209907"/><path d="M456.0 329.5L458.3 333.1L459.9 328.5L457.7 324.9z" fill="#14af6c" stroke="#14af6c"/><path d="M466.6 310.9L468.8 314.2L470.5 310.3L468.3 307.0z" fill="#12ab22" stroke="#12ab22"/><path d="M460.5 336.4L462.6 339.4L464.3 334.8L462.1 331.8z" fill="#25bf96" stroke="#25bf96"/><path d="M452.6 365.6L454.8 368.3L456.5 364.3L454.3 361.7z" fill="#2778c0" stroke="#2778c0"/><path d="M444.3 359.4L446.5 363.0L448.3 359.3L446.0 355.7z" fill="#0a6e9f" stroke="#0a6e9f"/><path d="M573.8 293.4L576.3 292.7L577.5 294.6L575.0 295.4z" fill="#288000" stroke="#288000"/><path d="M452.2 330.3L454.4 334.2L456.0 329.5L453.8 325.7z" fill="#10a96a" stroke="#10a96a"/><path d="M448.7 366.3L450.9 369.3L452.6 365.6L450.5 362.6z" fill="#1664b1" stroke="#1664b1"/><path d="M472.6 313.3L474.8 315.9L476.5 312.3L474.4 309.7z" fill="#21bb39" stroke="#21bb39"/><path d="M476.5 312.3L478.6 314.5L480.4 311.2L478.2 309.0z" fill="#29c33d" stroke="#29c33d"/><path d="M444.9 339.7L447.2 343.8L448.9 339.4L446.6 335.4z" fill="#0aa087" stroke="#0aa087"/><path d="M464.4 307.3L466.6 310.9L468.3 307.0L466.1 303.4z" fill="#0ca40f" stroke="#0ca40f"/><path d="M459.9 328.5L462.1 331.8L463.8 327.2L461.6 323.9z" fill="#1bb56e" stroke="#1bb56e"/><path d="M480.4 311.2L482.5 313.1L484.2 310.1L482.1 308.3z" fill="#2fcb3f" stroke="#2fcb3f"/><path d="M468.8 314.2L470.9 317.2L472.6 313.3L470.5 310.3z" fill="#1ab536" stroke="#1ab536"/><path d="M443.2 343.9L445.5 347.9L447.2 343.8L444.9 339.7z" fill="#099d94" stroke="#099d94"/><path d="M446.6 335.4L448.9 339.4L450.5 334.9L448.2 330.9z" fill="#0ca278" stroke="#0ca278"/><path d="M461.0 344.1L463.1 346.7L464.8 342.1L462.6 339.4z" fill="#32c8bc" stroke="#32c8bc"/><path d="M460.5 279.9L462.8 284.3L464.6 281.4L462.3 277.1z" fill="#578401" stroke="#578401"/><path d="M457.7 324.9L459.9 328.5L461.6 323.9L459.3 320.3z" fill="#14ae59" stroke="#14ae59"/><path d="M484.2 310.1L486.3 311.6L488.1 309.0L486.0 307.6z" fill="#2dd139" stroke="#2dd139"/><path d="M462.1 331.8L464.3 334.8L465.9 330.2L463.8 327.2z" fill="#25be83" stroke="#25be83"/><path d="M464.9 315.0L467.1 318.3L468.8 314.2L466.6 310.9z" fill="#15af34" stroke="#15af34"/><path d="M461.6 323.9L463.8 327.2L465.4 322.7L463.2 319.4z" fill="#1ab45a" stroke="#1ab45a"/><path d="M609.9 324.7L611.9 329.0L613.0 329.7L610.9 325.5z" fill="#00582e" stroke="#00582e"/><path d="M530.6 297.5L532.9 294.8L534.5 296.9L532.2 299.6z" fill="#1a6e00" stroke="#1a6e00"/><path d="M453.8 325.7L456.0 329.5L457.7 324.9L455.4 321.0z" fill="#10a958" stroke="#10a958"/><path d="M488.1 309.0L490.2 310.0L492.0 307.8L489.9 306.9z" fill="#1ed426" stroke="#1ed426"/><path d="M448.2 330.9L450.5 334.9L452.2 330.3L449.9 326.3z" fill="#0ca368" stroke="#0ca368"/><path d="M463.2 319.4L465.4 322.7L467.1 318.3L464.9 315.0z" fill="#18b247" stroke="#18b247"/><path d="M442.0 355.5L444.3 359.4L446.0 355.7L443.8 351.9z" fill="#077799" stroke="#077799"/><path d="M462.7 311.4L464.9 315.0L466.6 310.9L464.4 307.3z" fill="#0fa820" stroke="#0fa820"/><path d="M459.3 320.3L461.6 323.9L463.2 319.4L461.0 315.8z" fill="#13ad46" stroke="#13ad46"/><path d="M467.1 318.3L469.3 321.3L470.9 317.2L468.8 314.2z" fill="#1fb84a" stroke="#1fb84a"/><path d="M441.5 347.8L443.8 351.9L445.5 347.9L443.2 343.9z" fill="#079499" stroke="#079499"/><path d="M461.0 287.6L463.3 291.8L465.0 288.6L462.8 284.3z" fill="#438c03" stroke="#438c03"/><path d="M463.8 327.2L465.9 330.2L467.6 325.7L465.4 322.7z" fill="#23bd70" stroke="#23bd70"/><path d="M458.1 360.2L460.3 362.5L461.9 358.1L459.8 355.8z" fill="#40a2d1" stroke="#40a2d1"/><path d="M462.1 303.4L464.4 307.3L466.1 303.4L463.8 299.5z" fill="#169e09" stroke="#169e09"/><path d="M462.6 339.4L464.8 342.1L466.4 337.4L464.3 334.8z" fill="#32c9aa" stroke="#32c9aa"/><path d="M461.0 315.8L463.2 319.4L464.9 315.0L462.7 311.4z" fill="#11ab33" stroke="#11ab33"/><path d="M492.0 307.8L494.1 308.4L495.8 306.6L493.7 306.1z" fill="#0bd50e" stroke="#0bd50e"/><path d="M560.0 293.0L562.5 290.9L563.8 293.4L561.3 295.5z" fill="#287800" stroke="#287800"/><path d="M461.6 295.4L463.8 299.5L465.5 295.9L463.3 291.8z" fill="#2d9505" stroke="#2d9505"/><path d="M465.4 322.7L467.6 325.7L469.3 321.3L467.1 318.3z" fill="#22bb5d" stroke="#22bb5d"/><path d="M450.9 369.3L453.0 372.0L454.8 368.3L452.6 365.6z" fill="#2366bc" stroke="#2366bc"/><path d="M456.5 364.3L458.6 366.7L460.3 362.5L458.1 360.2z" fill="#3e91cf" stroke="#3e91cf"/><path d="M459.8 355.8L461.9 358.1L463.6 353.6L461.5 351.3z" fill="#42b4d2" stroke="#42b4d2"/><path d="M455.4 321.0L457.7 324.9L459.3 320.3L457.1 316.4z" fill="#10a845" stroke="#10a845"/><path d="M470.9 317.2L473.1 319.8L474.8 315.9L472.6 313.3z" fill="#28c04d" stroke="#28c04d"/><path d="M449.9 326.3L452.2 330.3L453.8 325.7L451.5 321.6z" fill="#0da456" stroke="#0da456"/><path d="M526.8 298.3L529.0 295.7L530.6 297.5L528.4 300.1z" fill="#186c00" stroke="#186c00"/><path d="M495.8 306.6L497.9 306.8L499.7 305.5L497.6 305.4z" fill="#05d302" stroke="#05d302"/><path d="M444.7 366.3L446.9 369.7L448.7 366.3L446.5 363.0z" fill="#0b56a1" stroke="#0b56a1"/><path d="M594.4 302.0L596.7 304.2L597.8 305.1L595.5 302.9z" fill="#086900" stroke="#086900"/><path d="M464.3 334.8L466.4 337.4L468.1 332.8L465.9 330.2z" fill="#32c898" stroke="#32c898"/><path d="M461.5 351.3L463.6 353.6L465.2 349.0L463.1 346.7z" fill="#43c5d3" stroke="#43c5d3"/><path d="M460.4 307.6L462.7 311.4L464.4 307.3L462.1 303.4z" fill="#0ba20e" stroke="#0ba20e"/><path d="M499.7 305.5L501.8 305.2L503.6 304.3L501.5 304.6z" fill="#0acf00" stroke="#0acf00"/><path d="M457.1 316.4L459.3 320.3L461.0 315.8L458.8 311.9z" fill="#0fa732" stroke="#0fa732"/><path d="M442.5 362.8L444.7 366.3L446.5 363.0L444.3 359.4z" fill="#075d9a" stroke="#075d9a"/><path d="M454.8 368.3L456.9 370.6L458.6 366.7L456.5 364.3z" fill="#3a80cd" stroke="#3a80cd"/><path d="M442.6 335.5L444.9 339.7L446.6 335.4L444.3 331.2z" fill="#099d73" stroke="#099d73"/><path d="M522.9 299.1L525.1 296.7L526.8 298.3L524.6 300.6z" fill="#156900" stroke="#156900"/><path d="M458.8 311.9L461.0 315.8L462.7 311.4L460.4 307.6z" fill="#0da520" stroke="#0da520"/><path d="M446.9 369.7L449.1 372.7L450.9 369.3L448.7 366.3z" fill="#1152ab" stroke="#1152ab"/><path d="M474.8 315.9L476.9 318.2L478.6 314.5L476.5 312.3z" fill="#33c953" stroke="#33c953"/><path d="M503.6 304.3L505.7 303.6L507.4 303.2L505.3 303.9z" fill="#065400" stroke="#065400"/><path d="M469.3 321.3L471.4 324.0L473.1 319.8L470.9 317.2z" fill="#2cc361" stroke="#2cc361"/><path d="M451.5 321.6L453.8 325.7L455.4 321.0L453.2 317.0z" fill="#0da444" stroke="#0da444"/><path d="M440.9 339.7L443.2 343.9L444.9 339.7L442.6 335.5z" fill="#089a81" stroke="#089a81"/><path d="M444.3 331.2L446.6 335.4L448.2 330.9L446.0 326.7z" fill="#0a9f64" stroke="#0a9f64"/><path d="M465.9 330.2L468.1 332.8L469.7 328.3L467.6 325.7z" fill="#31c786" stroke="#31c786"/><path d="M586.0 296.5L588.5 297.4L589.6 298.7L587.2 297.8z" fill="#229700" stroke="#229700"/><path d="M439.8 351.5L442.0 355.5L443.8 351.9L441.5 347.8z" fill="#058395" stroke="#058395"/><path d="M519.0 300.0L521.2 297.9L522.9 299.1L520.7 301.2z" fill="#136600" stroke="#136600"/><path d="M507.4 303.2L509.6 302.0L511.3 302.1L509.2 303.2z" fill="#095900" stroke="#095900"/><path d="M467.6 325.7L469.7 328.3L471.4 324.0L469.3 321.3z" fill="#30c674" stroke="#30c674"/><path d="M463.1 346.7L465.2 349.0L466.9 344.4L464.8 342.1z" fill="#44d3cf" stroke="#44d3cf"/><path d="M515.2 301.0L517.3 299.2L519.0 300.0L516.9 301.8z" fill="#106300" stroke="#106300"/><path d="M511.3 302.1L513.5 300.6L515.2 301.0L513.0 302.5z" fill="#0d5e00" stroke="#0d5e00"/><path d="M459.9 299.3L462.1 303.4L463.8 299.5L461.6 295.4z" fill="#239907" stroke="#239907"/><path d="M607.7 320.7L609.9 324.7L610.9 325.5L608.8 321.5z" fill="#005925" stroke="#005925"/><path d="M446.0 326.7L448.2 330.9L449.9 326.3L447.6 322.1z" fill="#0ba054" stroke="#0ba054"/><path d="M580.0 294.3L582.4 294.3L583.6 296.0L581.2 295.9z" fill="#288a00" stroke="#288a00"/><path d="M453.2 317.0L455.4 321.0L457.1 316.4L454.8 312.4z" fill="#0da432" stroke="#0da432"/><path d="M440.3 358.9L442.5 362.8L444.3 359.4L442.0 355.5z" fill="#056794" stroke="#056794"/><path d="M439.2 343.7L441.5 347.8L443.2 343.9L440.9 339.7z" fill="#06968c" stroke="#06968c"/><path d="M478.6 314.5L480.8 316.4L482.5 313.1L480.4 311.2z" fill="#3fd258" stroke="#3fd258"/><path d="M459.3 291.2L461.6 295.4L463.3 291.8L461.0 287.6z" fill="#3b9104" stroke="#3b9104"/><path d="M464.8 342.1L466.9 344.4L468.5 339.7L466.4 337.4z" fill="#44d3be" stroke="#44d3be"/><path d="M458.7 283.2L461.0 287.6L462.8 284.3L460.5 279.9z" fill="#528a02" stroke="#528a02"/><path d="M449.1 372.7L451.3 375.4L453.0 372.0L450.9 369.3z" fill="#1c53b7" stroke="#1c53b7"/><path d="M458.2 303.5L460.4 307.6L462.1 303.4L459.9 299.3z" fill="#169d09" stroke="#169d09"/><path d="M453.0 372.0L455.1 374.3L456.9 370.6L454.8 368.3z" fill="#356eca" stroke="#356eca"/><path d="M454.8 312.4L457.1 316.4L458.8 311.9L456.5 307.8z" fill="#0ca21f" stroke="#0ca21f"/><path d="M447.6 322.1L449.9 326.3L451.5 321.6L449.3 317.4z" fill="#0ba143" stroke="#0ba143"/><path d="M473.1 319.8L475.2 322.1L476.9 318.2L474.8 315.9z" fill="#3acd67" stroke="#3acd67"/><path d="M456.5 307.8L458.8 311.9L460.4 307.6L458.2 303.5z" fill="#0ba00d" stroke="#0ba00d"/><path d="M596.7 304.2L598.9 306.8L600.1 307.7L597.8 305.1z" fill="#026400" stroke="#026400"/><path d="M466.4 337.4L468.5 339.7L470.2 335.1L468.1 332.8z" fill="#44d3ad" stroke="#44d3ad"/><path d="M460.3 362.5L462.3 364.4L464.0 360.1L461.9 358.1z" fill="#56abdc" stroke="#56abdc"/><path d="M605.6 316.8L607.7 320.7L608.8 321.5L606.7 317.6z" fill="#005a1c" stroke="#005a1c"/><path d="M449.3 317.4L451.5 321.6L453.2 317.0L450.9 312.7z" fill="#0ba131" stroke="#0ba131"/><path d="M482.5 313.1L484.6 314.5L486.3 311.6L484.2 310.1z" fill="#45d958" stroke="#45d958"/><path d="M556.2 292.8L558.6 290.4L560.0 293.0L557.5 295.4z" fill="#2a7700" stroke="#2a7700"/><path d="M440.3 331.2L442.6 335.5L444.3 331.2L442.0 326.9z" fill="#089b61" stroke="#089b61"/><path d="M437.5 347.3L439.8 351.5L441.5 347.8L439.2 343.7z" fill="#058f92" stroke="#058f92"/><path d="M458.6 366.7L460.6 368.6L462.3 364.4L460.3 362.5z" fill="#559cdb" stroke="#559cdb"/><path d="M461.9 358.1L464.0 360.1L465.7 355.5L463.6 353.6z" fill="#57bbdd" stroke="#57bbdd"/><path d="M471.4 324.0L473.5 326.2L475.2 322.1L473.1 319.8z" fill="#40d079" stroke="#40d079"/><path d="M468.1 332.8L470.2 335.1L471.9 330.6L469.7 328.3z" fill="#44d39c" stroke="#44d39c"/><path d="M438.0 354.9L440.3 358.9L442.0 355.5L439.8 351.5z" fill="#047290" stroke="#047290"/><path d="M438.6 335.4L440.9 339.7L442.6 335.5L440.3 331.2z" fill="#07986e" stroke="#07986e"/><path d="M442.0 326.9L444.3 331.2L446.0 326.7L443.7 322.4z" fill="#099d52" stroke="#099d52"/><path d="M442.9 369.4L445.1 372.7L446.9 369.7L444.7 366.3z" fill="#07479a" stroke="#07479a"/><path d="M457.6 295.1L459.9 299.3L461.6 295.4L459.3 291.2z" fill="#319606" stroke="#319606"/><path d="M469.7 328.3L471.9 330.6L473.5 326.2L471.4 324.0z" fill="#43d18b" stroke="#43d18b"/><path d="M463.6 353.6L465.7 355.5L467.3 350.9L465.2 349.0z" fill="#57cbdd" stroke="#57cbdd"/><path d="M570.0 292.4L572.5 291.2L573.8 293.4L571.3 294.6z" fill="#2d7f00" stroke="#2d7f00"/><path d="M440.7 365.8L442.9 369.4L444.7 366.3L442.5 362.8z" fill="#054f93" stroke="#054f93"/><path d="M450.9 312.7L453.2 317.0L454.8 312.4L452.6 308.1z" fill="#0ba01f" stroke="#0ba01f"/><path d="M445.1 372.7L447.3 375.8L449.1 372.7L446.9 369.7z" fill="#0c42a4" stroke="#0c42a4"/><path d="M443.7 322.4L446.0 326.7L447.6 322.1L445.3 317.7z" fill="#0a9e42" stroke="#0a9e42"/><path d="M598.9 306.8L601.2 309.8L602.3 310.7L600.1 307.7z" fill="#006004" stroke="#006004"/><path d="M456.9 370.6L458.9 372.6L460.6 368.6L458.6 366.7z" fill="#538dda" stroke="#538dda"/><path d="M603.4 313.2L605.6 316.8L606.7 317.6L604.5 314.0z" fill="#005c13" stroke="#005c13"/><path d="M436.9 339.4L439.2 343.7L440.9 339.7L438.6 335.4z" fill="#059479" stroke="#059479"/><path d="M476.9 318.2L479.1 320.0L480.8 316.4L478.6 314.5z" fill="#4bd76e" stroke="#4bd76e"/><path d="M455.9 299.2L458.2 303.5L459.9 299.3L457.6 295.1z" fill="#259a08" stroke="#259a08"/><path d="M452.6 308.1L454.8 312.4L456.5 307.8L454.2 303.6z" fill="#0a9f0d" stroke="#0a9f0d"/><path d="M457.0 286.8L459.3 291.2L461.0 287.6L458.7 283.2z" fill="#4a8f04" stroke="#4a8f04"/><path d="M451.3 375.4L453.4 377.7L455.1 374.3L453.0 372.0z" fill="#2e5cc5" stroke="#2e5cc5"/><path d="M601.2 309.8L603.4 313.2L604.5 314.0L602.3 310.7z" fill="#005e0c" stroke="#005e0c"/><path d="M486.3 311.6L488.5 312.6L490.2 310.0L488.1 309.0z" fill="#3ade49" stroke="#3ade49"/><path d="M465.2 349.0L467.3 350.9L469.0 346.3L466.9 344.4z" fill="#58dcde" stroke="#58dcde"/><path d="M454.2 303.6L456.5 307.8L458.2 303.5L455.9 299.2z" fill="#179d09" stroke="#179d09"/><path d="M445.3 317.7L447.6 322.1L449.3 317.4L447.0 313.1z" fill="#0a9f30" stroke="#0a9f30"/><path d="M438.4 362.0L440.7 365.8L442.5 362.8L440.3 358.9z" fill="#03598e" stroke="#03598e"/><path d="M447.3 375.8L449.4 378.5L451.3 375.4L449.1 372.7z" fill="#1541b0" stroke="#1541b0"/><path d="M466.9 344.4L469.0 346.3L470.6 341.6L468.5 339.7z" fill="#59ded0" stroke="#59ded0"/><path d="M435.7 350.7L438.0 354.9L439.8 351.5L437.5 347.3z" fill="#037f8c" stroke="#037f8c"/><path d="M455.1 374.3L457.2 376.3L458.9 372.6L456.9 370.6z" fill="#4f7dd8" stroke="#4f7dd8"/><path d="M447.0 313.1L449.3 317.4L450.9 312.7L448.6 308.4z" fill="#0a9f1f" stroke="#0a9f1f"/><path d="M435.1 343.0L437.5 347.3L439.2 343.7L436.9 339.4z" fill="#049082" stroke="#049082"/><path d="M475.2 322.1L477.3 324.0L479.1 320.0L476.9 318.2z" fill="#53da81" stroke="#53da81"/><path d="M455.3 290.7L457.6 295.1L459.3 291.2L457.0 286.8z" fill="#419405" stroke="#419405"/><path d="M490.2 310.0L492.3 310.5L494.1 308.4L492.0 307.8z" fill="#20df28" stroke="#20df28"/><path d="M468.5 339.7L470.6 341.6L472.3 337.0L470.2 335.1z" fill="#5adec0" stroke="#5adec0"/><path d="M552.3 292.7L554.8 290.1L556.2 292.8L553.7 295.4z" fill="#2b7600" stroke="#2b7600"/><path d="M448.6 308.4L450.9 312.7L452.6 308.1L450.3 303.8z" fill="#0a9e0d" stroke="#0a9e0d"/><path d="M480.8 316.4L482.9 317.8L484.6 314.5L482.5 313.1z" fill="#58df73" stroke="#58df73"/><path d="M436.1 358.0L438.4 362.0L440.3 358.9L438.0 354.9z" fill="#026489" stroke="#026489"/><path d="M588.5 297.4L590.9 298.8L592.0 300.1L589.6 298.7z" fill="#22a000" stroke="#22a000"/><path d="M473.5 326.2L475.7 328.1L477.3 324.0L475.2 322.1z" fill="#57dc92" stroke="#57dc92"/><path d="M470.2 335.1L472.3 337.0L474.0 332.5L471.9 330.6z" fill="#5addb1" stroke="#5addb1"/><path d="M453.6 294.9L455.9 299.2L457.6 295.1L455.3 290.7z" fill="#359807" stroke="#359807"/><path d="M450.3 303.8L452.6 308.1L454.2 303.6L451.9 299.2z" fill="#189d09" stroke="#189d09"/><path d="M471.9 330.6L474.0 332.5L475.7 328.1L473.5 326.2z" fill="#59dda1" stroke="#59dda1"/><path d="M451.9 299.2L454.2 303.6L455.9 299.2L453.6 294.9z" fill="#279b08" stroke="#279b08"/><path d="M462.3 364.4L464.4 366.0L466.1 361.6L464.0 360.1z" fill="#6cb6e6" stroke="#6cb6e6"/><path d="M494.1 308.4L496.2 308.5L497.9 306.8L495.8 306.6z" fill="#09de09" stroke="#09de09"/><path d="M441.1 372.2L443.3 375.5L445.1 372.7L442.9 369.4z" fill="#043a93" stroke="#043a93"/><path d="M449.4 378.5L451.6 380.8L453.4 377.7L451.3 375.4z" fill="#2548be" stroke="#2548be"/><path d="M460.6 368.6L462.7 370.2L464.4 366.0L462.3 364.4z" fill="#6ca9e6" stroke="#6ca9e6"/><path d="M464.0 360.1L466.1 361.6L467.7 357.1L465.7 355.5z" fill="#6bc4e6" stroke="#6bc4e6"/><path d="M453.4 377.7L455.4 379.7L457.2 376.3L455.1 374.3z" fill="#476cd4" stroke="#476cd4"/><path d="M438.8 368.6L441.1 372.2L442.9 369.4L440.7 365.8z" fill="#03428c" stroke="#03428c"/><path d="M433.3 346.4L435.7 350.7L437.5 347.3L435.1 343.0z" fill="#038a88" stroke="#038a88"/><path d="M443.3 375.5L445.5 378.5L447.3 375.8L445.1 372.7z" fill="#07339c" stroke="#07339c"/><path d="M465.7 355.5L467.7 357.1L469.4 352.5L467.3 350.9z" fill="#6bd3e6" stroke="#6bd3e6"/><path d="M576.3 292.7L578.8 292.3L580.0 294.3L577.5 294.6z" fill="#2f8600" stroke="#2f8600"/><path d="M458.9 372.6L461.0 374.2L462.7 370.2L460.6 368.6z" fill="#6c9de5" stroke="#6c9de5"/><path d="M433.8 353.8L436.1 358.0L438.0 354.9L435.7 350.7z" fill="#027086" stroke="#027086"/><path d="M479.1 320.0L481.2 321.5L482.9 317.8L480.8 316.4z" fill="#65e388" stroke="#65e388"/><path d="M484.6 314.5L486.7 315.5L488.5 312.6L486.3 311.6z" fill="#56e56b" stroke="#56e56b"/><path d="M548.5 292.8L550.9 290.0L552.3 292.7L549.9 295.5z" fill="#2c7500" stroke="#2c7500"/><path d="M566.3 291.6L568.8 290.0L570.0 292.4L567.5 293.9z" fill="#317d00" stroke="#317d00"/><path d="M436.6 364.7L438.8 368.6L440.7 365.8L438.4 362.0z" fill="#024c86" stroke="#024c86"/><path d="M467.3 350.9L469.4 352.5L471.1 347.8L469.0 346.3z" fill="#6ce1e7" stroke="#6ce1e7"/><path d="M497.9 306.8L500.0 306.5L501.8 305.2L499.7 305.5z" fill="#0bdb01" stroke="#0bdb01"/><path d="M582.4 294.3L584.9 294.8L586.0 296.5L583.6 296.0z" fill="#2d9300" stroke="#2d9300"/><path d="M445.5 378.5L447.6 381.2L449.4 378.5L447.3 375.8z" fill="#0e31a7" stroke="#0e31a7"/><path d="M469.0 346.3L471.1 347.8L472.7 343.1L470.6 341.6z" fill="#6de7dd" stroke="#6de7dd"/><path d="M457.2 376.3L459.3 377.9L461.0 374.2L458.9 372.6z" fill="#6a90e4" stroke="#6a90e4"/><path d="M477.3 324.0L479.5 325.4L481.2 321.5L479.1 320.0z" fill="#6ce599" stroke="#6ce599"/><path d="M501.8 305.2L503.9 304.4L505.7 303.6L503.6 304.3z" fill="#13d500" stroke="#13d500"/><path d="M470.6 341.6L472.7 343.1L474.4 338.5L472.3 337.0z" fill="#6ee7cf" stroke="#6ee7cf"/><path d="M434.3 360.7L436.6 364.7L438.4 362.0L436.1 358.0z" fill="#015883" stroke="#015883"/><path d="M610.9 327.9L613.0 332.2L614.0 333.3L611.9 329.0z" fill="#005531" stroke="#005531"/><path d="M544.6 293.1L547.0 290.2L548.5 292.8L546.0 295.7z" fill="#2b7300" stroke="#2b7300"/><path d="M451.6 380.8L453.6 382.8L455.4 379.7L453.4 377.7z" fill="#3c58ce" stroke="#3c58ce"/><path d="M590.9 298.8L593.2 300.7L594.4 302.0L592.0 300.1z" fill="#1fa900" stroke="#1fa900"/><path d="M475.7 328.1L477.8 329.6L479.5 325.4L477.3 324.0z" fill="#6fe6a7" stroke="#6fe6a7"/><path d="M472.3 337.0L474.4 338.5L476.1 334.0L474.0 332.5z" fill="#6fe7c1" stroke="#6fe7c1"/><path d="M431.5 349.5L433.8 353.8L435.7 350.7L433.3 346.4z" fill="#027e85" stroke="#027e85"/><path d="M488.5 312.6L490.5 313.1L492.3 310.5L490.2 310.0z" fill="#3de74c" stroke="#3de74c"/><path d="M474.0 332.5L476.1 334.0L477.8 329.6L475.7 328.1z" fill="#70e7b4" stroke="#70e7b4"/><path d="M447.6 381.2L449.7 383.6L451.6 380.8L449.4 378.5z" fill="#1934b5" stroke="#1934b5"/><path d="M505.7 303.6L507.8 302.5L509.6 302.0L507.4 303.2z" fill="#0b5000" stroke="#0b5000"/><path d="M482.9 317.8L485.0 318.9L486.7 315.5L484.6 314.5z" fill="#6be986" stroke="#6be986"/><path d="M455.4 379.7L457.5 381.3L459.3 377.9L457.2 376.3z" fill="#6481e2" stroke="#6481e2"/><path d="M540.7 293.5L543.1 290.5L544.6 293.1L542.2 296.0z" fill="#2a7100" stroke="#2a7100"/><path d="M439.2 374.5L441.4 377.9L443.3 375.5L441.1 372.2z" fill="#022f8a" stroke="#022f8a"/><path d="M431.9 356.5L434.3 360.7L436.1 358.0L433.8 353.8z" fill="#016481" stroke="#016481"/><path d="M464.4 366.0L466.4 367.2L468.1 362.8L466.1 361.6z" fill="#7cc0ed" stroke="#7cc0ed"/><path d="M436.9 370.9L439.2 374.5L441.1 372.2L438.8 368.6z" fill="#013884" stroke="#013884"/><path d="M509.6 302.0L511.7 300.6L513.5 300.6L511.3 302.1z" fill="#0f5600" stroke="#0f5600"/><path d="M441.4 377.9L443.5 380.9L445.5 378.5L443.3 375.5z" fill="#042892" stroke="#042892"/><path d="M462.7 370.2L464.7 371.4L466.4 367.2L464.4 366.0z" fill="#7eb4ed" stroke="#7eb4ed"/><path d="M466.1 361.6L468.1 362.8L469.8 358.2L467.7 357.1z" fill="#7acced" stroke="#7acced"/><path d="M608.8 323.6L610.9 327.9L611.9 329.0L609.9 324.7z" fill="#005527" stroke="#005527"/><path d="M562.5 290.9L565.0 289.0L566.3 291.6L563.8 293.4z" fill="#347b00" stroke="#347b00"/><path d="M492.3 310.5L494.4 310.7L496.2 308.5L494.1 308.4z" fill="#1ae720" stroke="#1ae720"/><path d="M467.7 357.1L469.8 358.2L471.5 353.6L469.4 352.5z" fill="#7ad9ed" stroke="#7ad9ed"/><path d="M536.8 294.1L539.2 291.1L540.7 293.5L538.4 296.4z" fill="#297000" stroke="#297000"/><path d="M461.0 374.2L463.0 375.4L464.7 371.4L462.7 370.2z" fill="#7faaed" stroke="#7faaed"/><path d="M434.6 367.1L436.9 370.9L438.8 368.6L436.6 364.7z" fill="#014380" stroke="#014380"/><path d="M513.5 300.6L515.6 298.7L517.3 299.2L515.2 301.0z" fill="#145c00" stroke="#145c00"/><path d="M481.2 321.5L483.3 322.5L485.0 318.9L482.9 317.8z" fill="#78ec9a" stroke="#78ec9a"/><path d="M593.2 300.7L595.5 302.9L596.7 304.2L594.4 302.0z" fill="#1ab000" stroke="#1ab000"/><path d="M443.5 380.9L445.7 383.6L447.6 381.2L445.5 378.5z" fill="#07239d" stroke="#07239d"/><path d="M469.4 352.5L471.5 353.6L473.1 348.9L471.1 347.8z" fill="#7ae7ed" stroke="#7ae7ed"/><path d="M572.5 291.2L575.1 290.4L576.3 292.7L573.8 293.4z" fill="#368300" stroke="#368300"/><path d="M517.3 299.2L519.6 297.1L521.2 297.9L519.0 300.0z" fill="#186000" stroke="#186000"/><path d="M532.9 294.8L535.3 291.9L536.8 294.1L534.5 296.9z" fill="#266d00" stroke="#266d00"/><path d="M449.7 383.6L451.8 385.6L453.6 382.8L451.6 380.8z" fill="#2c41c6" stroke="#2c41c6"/><path d="M429.6 352.2L431.9 356.5L433.8 353.8L431.5 349.5z" fill="#017280" stroke="#017280"/><path d="M486.7 315.5L488.8 316.1L490.5 313.1L488.5 312.6z" fill="#5aec6f" stroke="#5aec6f"/><path d="M471.1 347.8L473.1 348.9L474.8 344.2L472.7 343.1z" fill="#7bede6" stroke="#7bede6"/><path d="M453.6 382.8L455.7 384.4L457.5 381.3L455.4 379.7z" fill="#586edd" stroke="#586edd"/><path d="M521.2 297.9L523.5 295.5L525.1 296.7L522.9 299.1z" fill="#1c6400" stroke="#1c6400"/><path d="M529.0 295.7L531.4 292.9L532.9 294.8L530.6 297.5z" fill="#236b00" stroke="#236b00"/><path d="M606.7 319.5L608.8 323.6L609.9 324.7L607.7 320.7z" fill="#00561e" stroke="#00561e"/><path d="M459.3 377.9L461.3 379.1L463.0 375.4L461.0 374.2z" fill="#7fa0ed" stroke="#7fa0ed"/><path d="M525.1 296.7L527.4 294.1L529.0 295.7L526.8 298.3z" fill="#206800" stroke="#206800"/><path d="M479.5 325.4L481.5 326.5L483.3 322.5L481.2 321.5z" fill="#7eeda9" stroke="#7eeda9"/><path d="M432.3 363.0L434.6 367.1L436.6 364.7L434.3 360.7z" fill="#014e7e" stroke="#014e7e"/><path d="M584.9 294.8L587.3 295.8L588.5 297.4L586.0 296.5z" fill="#309c00" stroke="#309c00"/><path d="M472.7 343.1L474.8 344.2L476.5 339.6L474.4 338.5z" fill="#7ceed9" stroke="#7ceed9"/><path d="M496.2 308.5L498.3 308.2L500.0 306.5L497.9 306.8z" fill="#0ce506" stroke="#0ce506"/><path d="M477.8 329.6L479.8 330.7L481.5 326.5L479.5 325.4z" fill="#80eeb5" stroke="#80eeb5"/><path d="M474.4 338.5L476.5 339.6L478.2 335.1L476.1 334.0z" fill="#7eeecc" stroke="#7eeecc"/><path d="M595.5 302.9L597.8 305.6L598.9 306.8L596.7 304.2z" fill="#096100" stroke="#096100"/><path d="M476.1 334.0L478.2 335.1L479.8 330.7L477.8 329.6z" fill="#80eec1" stroke="#80eec1"/><path d="M445.7 383.6L447.8 386.0L449.7 383.6L447.6 381.2z" fill="#0e22aa" stroke="#0e22aa"/><path d="M604.5 315.6L606.7 319.5L607.7 320.7L605.6 316.8z" fill="#005715" stroke="#005715"/><path d="M578.8 292.3L581.2 292.3L582.4 294.3L580.0 294.3z" fill="#378f00" stroke="#378f00"/><path d="M558.6 290.4L561.2 288.2L562.5 290.9L560.0 293.0z" fill="#377a00" stroke="#377a00"/><path d="M457.5 381.3L459.5 382.5L461.3 379.1L459.3 377.9z" fill="#7b93ec" stroke="#7b93ec"/><path d="M430.0 358.8L432.3 363.0L434.3 360.7L431.9 356.5z" fill="#005b7c" stroke="#005b7c"/><path d="M597.8 305.6L600.1 308.6L601.2 309.8L598.9 306.8z" fill="#025d00" stroke="#025d00"/><path d="M602.3 312.0L604.5 315.6L605.6 316.8L603.4 313.2z" fill="#00590d" stroke="#00590d"/><path d="M600.1 308.6L602.3 312.0L603.4 313.2L601.2 309.8z" fill="#005b05" stroke="#005b05"/><path d="M485.0 318.9L487.1 319.5L488.8 316.1L486.7 315.5z" fill="#6ff08a" stroke="#6ff08a"/><path d="M437.2 376.5L439.4 379.9L441.4 377.9L439.2 374.5z" fill="#012782" stroke="#012782"/><path d="M490.5 313.1L492.6 313.3L494.4 310.7L492.3 310.5z" fill="#33ed40" stroke="#33ed40"/><path d="M500.0 306.5L502.2 305.7L503.9 304.4L501.8 305.2z" fill="#15e001" stroke="#15e001"/><path d="M434.9 372.9L437.2 376.5L439.2 374.5L436.9 370.9z" fill="#00317d" stroke="#00317d"/><path d="M439.4 379.9L441.6 383.0L443.5 380.9L441.4 377.9z" fill="#011f88" stroke="#011f88"/><path d="M451.8 385.6L453.8 387.2L455.7 384.4L453.6 382.8z" fill="#4454d6" stroke="#4454d6"/><path d="M466.4 367.2L468.5 367.9L470.2 363.5L468.1 362.8z" fill="#80c4f2" stroke="#80c4f2"/><path d="M464.7 371.4L466.8 372.2L468.5 367.9L466.4 367.2z" fill="#82b9f2" stroke="#82b9f2"/><path d="M468.1 362.8L470.2 363.5L471.8 359.0L469.8 358.2z" fill="#7ed0f2" stroke="#7ed0f2"/><path d="M447.8 386.0L449.9 388.0L451.8 385.6L449.7 383.6z" fill="#1a29ba" stroke="#1a29ba"/><path d="M432.6 369.1L434.9 372.9L436.9 370.9L434.6 367.1z" fill="#003c7a" stroke="#003c7a"/><path d="M427.6 354.5L430.0 358.8L431.9 356.5L429.6 352.2z" fill="#00687a" stroke="#00687a"/><path d="M469.8 358.2L471.8 359.0L473.5 354.3L471.5 353.6z" fill="#7edef2" stroke="#7edef2"/><path d="M463.0 375.4L465.0 376.2L466.8 372.2L464.7 371.4z" fill="#84aff2" stroke="#84aff2"/><path d="M441.6 383.0L443.7 385.7L445.7 383.6L443.5 380.9z" fill="#031992" stroke="#031992"/><path d="M568.8 290.0L571.3 288.8L572.5 291.2L570.0 292.4z" fill="#3c8100" stroke="#3c8100"/><path d="M483.3 322.5L485.3 323.1L487.1 319.5L485.0 318.9z" fill="#7cf19e" stroke="#7cf19e"/><path d="M455.7 384.4L457.7 385.7L459.5 382.5L457.5 381.3z" fill="#6f81e9" stroke="#6f81e9"/><path d="M554.8 290.1L557.3 287.6L558.6 290.4L556.2 292.8z" fill="#397800" stroke="#397800"/><path d="M471.5 353.6L473.5 354.3L475.2 349.6L473.1 348.9z" fill="#7eebf2" stroke="#7eebf2"/><path d="M503.9 304.4L506.1 303.3L507.8 302.5L505.7 303.6z" fill="#0b4800" stroke="#0b4800"/><path d="M587.3 295.8L589.7 297.2L590.9 298.8L588.5 297.4z" fill="#31a500" stroke="#31a500"/><path d="M430.3 365.0L432.6 369.1L434.6 367.1L432.3 363.0z" fill="#004778" stroke="#004778"/><path d="M473.1 348.9L475.2 349.6L476.9 344.9L474.8 344.2z" fill="#7ff2ea" stroke="#7ff2ea"/><path d="M461.3 379.1L463.3 379.9L465.0 376.2L463.0 375.4z" fill="#84a5f2" stroke="#84a5f2"/><path d="M481.5 326.5L483.6 327.1L485.3 323.1L483.3 322.5z" fill="#82f2ad" stroke="#82f2ad"/><path d="M494.4 310.7L496.5 310.4L498.3 308.2L496.2 308.5z" fill="#12ec11" stroke="#12ec11"/><path d="M474.8 344.2L476.9 344.9L478.5 340.3L476.5 339.6z" fill="#80f2dd" stroke="#80f2dd"/><path d="M443.7 385.7L445.9 388.1L447.8 386.0L445.7 383.6z" fill="#06159e" stroke="#06159e"/><path d="M488.8 316.1L490.9 316.3L492.6 313.3L490.5 313.1z" fill="#4df162" stroke="#4df162"/><path d="M479.8 330.7L481.9 331.3L483.6 327.1L481.5 326.5z" fill="#84f2b9" stroke="#84f2b9"/><path d="M476.5 339.6L478.5 340.3L480.2 335.7L478.2 335.1z" fill="#82f2d0" stroke="#82f2d0"/><path d="M478.2 335.1L480.2 335.7L481.9 331.3L479.8 330.7z" fill="#84f2c5" stroke="#84f2c5"/><path d="M507.8 302.5L510.0 301.0L511.7 300.6L509.6 302.0z" fill="#104e00" stroke="#104e00"/><path d="M428.0 360.8L430.3 365.0L432.3 363.0L430.0 358.8z" fill="#005376" stroke="#005376"/><path d="M550.9 290.0L553.4 287.3L554.8 290.1L552.3 292.7z" fill="#397600" stroke="#397600"/><path d="M459.5 382.5L461.5 383.4L463.3 379.9L461.3 379.1z" fill="#8099f1" stroke="#8099f1"/><path d="M449.9 388.0L451.9 389.7L453.8 387.2L451.8 385.6z" fill="#2b35cb" stroke="#2b35cb"/><path d="M575.1 290.4L577.6 290.0L578.8 292.3L576.3 292.7z" fill="#3f8b00" stroke="#3f8b00"/><path d="M581.2 292.3L583.7 292.8L584.9 294.8L582.4 294.3z" fill="#3c9800" stroke="#3c9800"/><path d="M453.8 387.2L455.9 388.5L457.7 385.7L455.7 384.4z" fill="#5966e3" stroke="#5966e3"/><path d="M610.0 326.4L612.1 330.8L613.0 332.2L610.9 327.9z" fill="#005329" stroke="#005329"/><path d="M511.7 300.6L513.9 298.7L515.6 298.7L513.5 300.6z" fill="#155400" stroke="#155400"/><path d="M589.7 297.2L592.1 299.0L593.2 300.7L590.9 298.8z" fill="#2ead00" stroke="#2ead00"/><path d="M565.0 289.0L567.5 287.4L568.8 290.0L566.3 291.6z" fill="#407f00" stroke="#407f00"/><path d="M435.1 378.2L437.4 381.5L439.4 379.9L437.2 376.5z" fill="#00237b" stroke="#00237b"/><path d="M487.1 319.5L489.2 319.6L490.9 316.3L488.8 316.1z" fill="#62f37e" stroke="#62f37e"/><path d="M498.3 308.2L500.4 307.5L502.2 305.7L500.0 306.5z" fill="#14e903" stroke="#14e903"/><path d="M445.9 388.1L447.9 390.1L449.9 388.0L447.8 386.0z" fill="#0b15ad" stroke="#0b15ad"/><path d="M432.9 374.5L435.1 378.2L437.2 376.5L434.9 372.9z" fill="#002c77" stroke="#002c77"/><path d="M425.6 356.4L428.0 360.8L430.0 358.8L427.6 354.5z" fill="#006075" stroke="#006075"/><path d="M547.0 290.2L549.5 287.3L550.9 290.0L548.5 292.8z" fill="#397400" stroke="#397400"/><path d="M437.4 381.5L439.6 384.6L441.6 383.0L439.4 379.9z" fill="#001b80" stroke="#001b80"/><path d="M468.5 367.9L470.5 368.3L472.2 363.9L470.2 363.5z" fill="#77c4f5" stroke="#77c4f5"/><path d="M457.7 385.7L459.7 386.5L461.5 383.4L459.5 382.5z" fill="#7487ef" stroke="#7487ef"/><path d="M430.6 370.7L432.9 374.5L434.9 372.9L432.6 369.1z" fill="#003774" stroke="#003774"/><path d="M466.8 372.2L468.8 372.6L470.5 368.3L468.5 367.9z" fill="#78b7f5" stroke="#78b7f5"/><path d="M470.2 363.5L472.2 363.9L473.9 359.3L471.8 359.0z" fill="#76d2f5" stroke="#76d2f5"/><path d="M515.6 298.7L517.8 296.6L519.6 297.1L517.3 299.2z" fill="#1b5a00" stroke="#1b5a00"/><path d="M492.6 313.3L494.7 313.0L496.5 310.4L494.4 310.7z" fill="#24f12d" stroke="#24f12d"/><path d="M439.6 384.6L441.7 387.4L443.7 385.7L441.6 383.0z" fill="#011387" stroke="#011387"/><path d="M471.8 359.0L473.9 359.3L475.5 354.7L473.5 354.3z" fill="#76e0f4" stroke="#76e0f4"/><path d="M607.8 322.2L610.0 326.4L610.9 327.9L608.8 323.6z" fill="#00531f" stroke="#00531f"/><path d="M465.0 376.2L467.0 376.6L468.8 372.6L466.8 372.2z" fill="#79abf5" stroke="#79abf5"/><path d="M543.1 290.5L545.6 287.6L547.0 290.2L544.6 293.1z" fill="#387200" stroke="#387200"/><path d="M485.3 323.1L487.4 323.3L489.2 319.6L487.1 319.5z" fill="#6ff494" stroke="#6ff494"/><path d="M473.5 354.3L475.5 354.7L477.2 349.9L475.2 349.6z" fill="#76f0f4" stroke="#76f0f4"/><path d="M519.6 297.1L521.8 294.6L523.5 295.5L521.2 297.9z" fill="#215f00" stroke="#215f00"/><path d="M428.3 366.6L430.6 370.7L432.6 369.1L430.3 365.0z" fill="#004172" stroke="#004172"/><path d="M592.1 299.0L594.4 301.3L595.5 302.9L593.2 300.7z" fill="#29b400" stroke="#29b400"/><path d="M475.2 349.6L477.2 349.9L478.9 345.2L476.9 344.9z" fill="#77f4ea" stroke="#77f4ea"/><path d="M539.2 291.1L541.6 288.1L543.1 290.5L540.7 293.5z" fill="#367000" stroke="#367000"/><path d="M463.3 379.9L465.3 380.4L467.0 376.6L465.0 376.2z" fill="#779ff5" stroke="#779ff5"/><path d="M502.2 305.7L504.3 304.6L506.1 303.3L503.9 304.4z" fill="#21e300" stroke="#21e300"/><path d="M451.9 389.7L454.0 390.9L455.9 388.5L453.8 387.2z" fill="#3a42d9" stroke="#3a42d9"/><path d="M483.6 327.1L485.7 327.3L487.4 323.3L485.3 323.1z" fill="#76f5a5" stroke="#76f5a5"/><path d="M523.5 295.5L525.8 292.9L527.4 294.1L525.1 296.7z" fill="#266300" stroke="#266300"/><path d="M441.7 387.4L443.8 389.8L445.9 388.1L443.7 385.7z" fill="#020e92" stroke="#020e92"/><path d="M605.7 318.0L607.8 322.2L608.8 323.6L606.7 319.5z" fill="#005416" stroke="#005416"/><path d="M476.9 344.9L478.9 345.2L480.6 340.5L478.5 340.3z" fill="#78f5dc" stroke="#78f5dc"/><path d="M535.3 291.9L537.7 288.9L539.2 291.1L536.8 294.1z" fill="#336d00" stroke="#336d00"/><path d="M447.9 390.1L450.0 391.8L451.9 389.7L449.9 388.0z" fill="#1419bd" stroke="#1419bd"/><path d="M527.4 294.1L529.7 291.3L531.4 292.9L529.0 295.7z" fill="#2b6700" stroke="#2b6700"/><path d="M481.9 331.3L484.0 331.5L485.7 327.3L483.6 327.1z" fill="#7af5b3" stroke="#7af5b3"/><path d="M561.2 288.2L563.7 286.2L565.0 289.0L562.5 290.9z" fill="#437d00" stroke="#437d00"/><path d="M478.5 340.3L480.6 340.5L482.3 336.0L480.2 335.7z" fill="#79f5ce" stroke="#79f5ce"/><path d="M531.4 292.9L533.7 290.0L535.3 291.9L532.9 294.8z" fill="#306a00" stroke="#306a00"/><path d="M480.2 335.7L482.3 336.0L484.0 331.5L481.9 331.3z" fill="#7af5c0" stroke="#7af5c0"/><path d="M425.9 362.4L428.3 366.6L430.3 365.0L428.0 360.8z" fill="#004d70" stroke="#004d70"/><path d="M594.4 301.3L596.8 304.0L597.8 305.6L595.5 302.9z" fill="#20ba00" stroke="#20ba00"/><path d="M583.7 292.8L586.2 293.8L587.3 295.8L584.9 294.8z" fill="#40a100" stroke="#40a100"/><path d="M455.9 388.5L457.8 389.4L459.7 386.5L457.7 385.7z" fill="#5d6beb" stroke="#5d6beb"/><path d="M571.3 288.8L573.8 288.0L575.1 290.4L572.5 291.2z" fill="#468600" stroke="#468600"/><path d="M490.9 316.3L493.0 316.0L494.7 313.0L492.6 313.3z" fill="#39f44b" stroke="#39f44b"/><path d="M603.5 314.1L605.7 318.0L606.7 319.5L604.5 315.6z" fill="#00550d" stroke="#00550d"/><path d="M461.5 383.4L463.5 383.8L465.3 380.4L463.3 379.9z" fill="#7190f4" stroke="#7190f4"/><path d="M496.5 310.4L498.6 309.7L500.4 307.5L498.3 308.2z" fill="#15f00a" stroke="#15f00a"/><path d="M596.8 304.0L599.0 307.0L600.1 308.6L597.8 305.6z" fill="#14be00" stroke="#14be00"/><path d="M601.3 310.4L603.5 314.1L604.5 315.6L602.3 312.0z" fill="#005705" stroke="#005705"/><path d="M506.1 303.3L508.2 301.8L510.0 301.0L507.8 302.5z" fill="#0f4600" stroke="#0f4600"/><path d="M599.0 307.0L601.3 310.4L602.3 312.0L600.1 308.6z" fill="#025900" stroke="#025900"/><path d="M577.6 290.0L580.1 290.1L581.2 292.3L578.8 292.3z" fill="#479300" stroke="#479300"/><path d="M443.8 389.8L445.9 391.8L447.9 390.1L445.9 388.1z" fill="#030a9f" stroke="#030a9f"/><path d="M423.5 358.0L425.9 362.4L428.0 360.8L425.6 356.4z" fill="#00596f" stroke="#00596f"/><path d="M433.0 379.4L435.3 382.8L437.4 381.5L435.1 378.2z" fill="#002174" stroke="#002174"/><path d="M430.8 375.8L433.0 379.4L435.1 378.2L432.9 374.5z" fill="#002a70" stroke="#002a70"/><path d="M435.3 382.8L437.5 385.9L439.6 384.6L437.4 381.5z" fill="#001978" stroke="#001978"/><path d="M489.2 319.6L491.2 319.4L493.0 316.0L490.9 316.3z" fill="#4bf667" stroke="#4bf667"/><path d="M557.3 287.6L559.8 285.4L561.2 288.2L558.6 290.4z" fill="#467a00" stroke="#467a00"/><path d="M459.7 386.5L461.7 387.0L463.5 383.8L461.5 383.4z" fill="#647cf3" stroke="#647cf3"/><path d="M428.5 371.9L430.8 375.8L432.9 374.5L430.6 370.7z" fill="#00336e" stroke="#00336e"/><path d="M470.5 368.3L472.5 368.3L474.2 363.9L472.2 363.9z" fill="#65c3f7" stroke="#65c3f7"/><path d="M450.0 391.8L452.0 393.0L454.0 390.9L451.9 389.7z" fill="#1c1fcc" stroke="#1c1fcc"/><path d="M437.5 385.9L439.6 388.6L441.7 387.4L439.6 384.6z" fill="#00117e" stroke="#00117e"/><path d="M468.8 372.6L470.8 372.6L472.5 368.3L470.5 368.3z" fill="#65b3f7" stroke="#65b3f7"/><path d="M472.2 363.9L474.2 363.9L475.9 359.3L473.9 359.3z" fill="#66d3f6" stroke="#66d3f6"/><path d="M510.0 301.0L512.2 299.1L513.9 298.7L511.7 300.6z" fill="#164c00" stroke="#164c00"/><path d="M454.0 390.9L456.0 391.8L457.8 389.4L455.9 388.5z" fill="#3d46e3" stroke="#3d46e3"/><path d="M473.9 359.3L475.9 359.3L477.6 354.6L475.5 354.7z" fill="#66e4f6" stroke="#66e4f6"/><path d="M586.2 293.8L588.6 295.2L589.7 297.2L587.3 295.8z" fill="#41a900" stroke="#41a900"/><path d="M500.4 307.5L502.5 306.4L504.3 304.6L502.2 305.7z" fill="#20ec02" stroke="#20ec02"/><path d="M467.0 376.6L469.0 376.6L470.8 372.6L468.8 372.6z" fill="#63a4f7" stroke="#63a4f7"/><path d="M487.4 323.3L489.5 323.1L491.2 319.4L489.2 319.6z" fill="#58f77f" stroke="#58f77f"/><path d="M426.1 367.8L428.5 371.9L430.6 370.7L428.3 366.6z" fill="#003e6c" stroke="#003e6c"/><path d="M494.7 313.0L496.9 312.3L498.6 309.7L496.5 310.4z" fill="#17f417" stroke="#17f417"/><path d="M475.5 354.7L477.6 354.6L479.3 349.8L477.2 349.9z" fill="#66f5f6" stroke="#66f5f6"/><path d="M445.9 391.8L448.0 393.5L450.0 391.8L447.9 390.1z" fill="#0609ae" stroke="#0609ae"/><path d="M567.5 287.4L570.1 286.1L571.3 288.8L568.8 290.0z" fill="#4b8300" stroke="#4b8300"/><path d="M477.2 349.9L479.3 349.8L481.0 345.1L478.9 345.2z" fill="#67f6e6" stroke="#67f6e6"/><path d="M439.6 388.6L441.8 391.1L443.8 389.8L441.7 387.4z" fill="#000b86" stroke="#000b86"/><path d="M465.3 380.4L467.3 380.4L469.0 376.6L467.0 376.6z" fill="#5f94f7" stroke="#5f94f7"/><path d="M553.4 287.3L555.9 284.8L557.3 287.6L554.8 290.1z" fill="#477800" stroke="#477800"/><path d="M485.7 327.3L487.8 327.1L489.5 323.1L487.4 323.3z" fill="#61f793" stroke="#61f793"/><path d="M478.9 345.2L481.0 345.1L482.6 340.4L480.6 340.5z" fill="#67f6d5" stroke="#67f6d5"/><path d="M457.8 389.4L459.8 389.8L461.7 387.0L459.7 386.5z" fill="#4f61f0" stroke="#4f61f0"/><path d="M513.9 298.7L516.1 296.5L517.8 296.6L515.6 298.7z" fill="#1c5300" stroke="#1c5300"/><path d="M423.7 363.5L426.1 367.8L428.3 366.6L425.9 362.4z" fill="#00496b" stroke="#00496b"/><path d="M484.0 331.5L486.1 331.3L487.8 327.1L485.7 327.3z" fill="#65f7a5" stroke="#65f7a5"/><path d="M480.6 340.5L482.6 340.4L484.4 335.8L482.3 336.0z" fill="#68f7c5" stroke="#68f7c5"/><path d="M482.3 336.0L484.4 335.8L486.1 331.3L484.0 331.5z" fill="#67f7b5" stroke="#67f7b5"/><path d="M463.5 383.8L465.5 383.9L467.3 380.4L465.3 380.4z" fill="#5882f7" stroke="#5882f7"/><path d="M580.1 290.1L582.6 290.6L583.7 292.8L581.2 292.3z" fill="#4d9b00" stroke="#4d9b00"/><path d="M609.0 324.7L611.1 329.2L612.1 330.8L610.0 326.4z" fill="#005120" stroke="#005120"/><path d="M588.6 295.2L591.0 297.1L592.1 299.0L589.7 297.2z" fill="#3fb100" stroke="#3fb100"/><path d="M573.8 288.0L576.4 287.6L577.6 290.0L575.1 290.4z" fill="#508e00" stroke="#508e00"/><path d="M504.3 304.6L506.4 303.1L508.2 301.8L506.1 303.3z" fill="#31e500" stroke="#31e500"/><path d="M549.5 287.3L552.0 284.6L553.4 287.3L550.9 290.0z" fill="#477500" stroke="#477500"/><path d="M493.0 316.0L495.1 315.3L496.9 312.3L494.7 313.0z" fill="#26f731" stroke="#26f731"/><path d="M517.8 296.6L520.1 294.1L521.8 294.6L519.6 297.1z" fill="#235800" stroke="#235800"/><path d="M441.8 391.1L443.9 393.1L445.9 391.8L443.8 389.8z" fill="#010792" stroke="#010792"/><path d="M421.4 359.2L423.7 363.5L425.9 362.4L423.5 358.0z" fill="#00556a" stroke="#00556a"/><path d="M452.0 393.0L454.0 393.9L456.0 391.8L454.0 390.9z" fill="#1d21d8" stroke="#1d21d8"/><path d="M498.6 309.7L500.8 308.6L502.5 306.4L500.4 307.5z" fill="#1ef206" stroke="#1ef206"/><path d="M448.0 393.5L450.0 394.7L452.0 393.0L450.0 391.8z" fill="#0809bd" stroke="#0809bd"/><path d="M563.7 286.2L566.2 284.6L567.5 287.4L565.0 289.0z" fill="#508000" stroke="#508000"/><path d="M606.9 320.4L609.0 324.7L610.0 326.4L607.8 322.2z" fill="#005217" stroke="#005217"/><path d="M521.8 294.6L524.1 292.0L525.8 292.9L523.5 295.5z" fill="#2a5d00" stroke="#2a5d00"/><path d="M430.9 380.3L433.1 383.7L435.3 382.8L433.0 379.4z" fill="#00206d" stroke="#00206d"/><path d="M545.6 287.6L548.0 284.7L549.5 287.3L547.0 290.2z" fill="#467300" stroke="#467300"/><path d="M461.7 387.0L463.6 387.1L465.5 383.9L463.5 383.8z" fill="#4b6cf5" stroke="#4b6cf5"/><path d="M428.6 376.6L430.9 380.3L433.0 379.4L430.8 375.8z" fill="#00296a" stroke="#00296a"/><path d="M433.1 383.7L435.3 386.8L437.5 385.9L435.3 382.8z" fill="#001971" stroke="#001971"/><path d="M456.0 391.8L457.9 392.3L459.8 389.8L457.8 389.4z" fill="#323fea" stroke="#323fea"/><path d="M591.0 297.1L593.4 299.4L594.4 301.3L592.1 299.0z" fill="#3ab700" stroke="#3ab700"/><path d="M491.2 319.4L493.3 318.7L495.1 315.3L493.0 316.0z" fill="#34f84c" stroke="#34f84c"/><path d="M426.2 372.7L428.6 376.6L430.8 375.8L428.5 371.9z" fill="#003268" stroke="#003268"/><path d="M525.8 292.9L528.1 290.0L529.7 291.3L527.4 294.1z" fill="#316200" stroke="#316200"/><path d="M541.6 288.1L544.1 285.1L545.6 287.6L543.1 290.5z" fill="#447000" stroke="#447000"/><path d="M435.3 386.8L437.5 389.6L439.6 388.6L437.5 385.9z" fill="#001277" stroke="#001277"/><path d="M604.7 316.2L606.9 320.4L607.8 322.2L605.7 318.0z" fill="#00530e" stroke="#00530e"/><path d="M508.2 301.8L510.4 300.0L512.2 299.1L510.0 301.0z" fill="#144500" stroke="#144500"/><path d="M472.5 368.3L474.5 367.9L476.2 363.5L474.2 363.9z" fill="#50c4f8" stroke="#50c4f8"/><path d="M470.8 372.6L472.7 372.2L474.5 367.9L472.5 368.3z" fill="#4eb1f9" stroke="#4eb1f9"/><path d="M474.2 363.9L476.2 363.5L477.9 358.8L475.9 359.3z" fill="#52d7f8" stroke="#52d7f8"/><path d="M443.9 393.1L445.9 394.8L448.0 393.5L445.9 391.8z" fill="#0103a0" stroke="#0103a0"/><path d="M529.7 291.3L532.1 288.3L533.7 290.0L531.4 292.9z" fill="#376600" stroke="#376600"/><path d="M537.7 288.9L540.1 285.9L541.6 288.1L539.2 291.1z" fill="#406d00" stroke="#406d00"/><path d="M533.7 290.0L536.1 286.9L537.7 288.9L535.3 291.9z" fill="#3c6a00" stroke="#3c6a00"/><path d="M475.9 359.3L477.9 358.8L479.6 354.1L477.6 354.6z" fill="#52eaf8" stroke="#52eaf8"/><path d="M423.9 368.6L426.2 372.7L428.5 371.9L426.1 367.8z" fill="#003c66" stroke="#003c66"/><path d="M469.0 376.6L471.0 376.3L472.7 372.2L470.8 372.6z" fill="#4b9ff9" stroke="#4b9ff9"/><path d="M593.4 299.4L595.7 302.1L596.8 304.0L594.4 301.3z" fill="#32bc00" stroke="#32bc00"/><path d="M489.5 323.1L491.6 322.5L493.3 318.7L491.2 319.4z" fill="#40f965" stroke="#40f965"/><path d="M602.5 312.3L604.7 316.2L605.7 318.0L603.5 314.1z" fill="#005406" stroke="#005406"/><path d="M477.6 354.6L479.6 354.1L481.3 349.4L479.3 349.8z" fill="#53f8f2" stroke="#53f8f2"/><path d="M582.6 290.6L585.0 291.6L586.2 293.8L583.7 292.8z" fill="#52a400" stroke="#52a400"/><path d="M437.5 389.6L439.6 392.0L441.8 391.1L439.6 388.6z" fill="#000c7d" stroke="#000c7d"/><path d="M459.8 389.8L461.8 389.9L463.6 387.1L461.7 387.0z" fill="#3852f3" stroke="#3852f3"/><path d="M479.3 349.8L481.3 349.4L483.0 344.6L481.0 345.1z" fill="#54f8de" stroke="#54f8de"/><path d="M595.7 302.1L598.0 305.1L599.0 307.0L596.8 304.0z" fill="#26c000" stroke="#26c000"/><path d="M496.9 312.3L499.0 311.2L500.8 308.6L498.6 309.7z" fill="#1bf60d" stroke="#1bf60d"/><path d="M467.3 380.4L469.2 380.1L471.0 376.3L469.0 376.6z" fill="#468cf9" stroke="#468cf9"/><path d="M600.3 308.5L602.5 312.3L603.5 314.1L601.3 310.4z" fill="#06c600" stroke="#06c600"/><path d="M559.8 285.4L562.4 283.4L563.7 286.2L561.2 288.2z" fill="#537d00" stroke="#537d00"/><path d="M487.8 327.1L489.9 326.5L491.6 322.5L489.5 323.1z" fill="#49f97c" stroke="#49f97c"/><path d="M570.1 286.1L572.6 285.3L573.8 288.0L571.3 288.8z" fill="#568900" stroke="#568900"/><path d="M598.0 305.1L600.3 308.5L601.3 310.4L599.0 307.0z" fill="#17c400" stroke="#17c400"/><path d="M502.5 306.4L504.7 304.9L506.4 303.1L504.3 304.6z" fill="#30ed01" stroke="#30ed01"/><path d="M421.5 364.3L423.9 368.6L426.1 367.8L423.7 363.5z" fill="#004765" stroke="#004765"/><path d="M481.0 345.1L483.0 344.6L484.7 339.9L482.6 340.4z" fill="#54f8cb" stroke="#54f8cb"/><path d="M486.1 331.3L488.1 330.8L489.9 326.5L487.8 327.1z" fill="#4ef991" stroke="#4ef991"/><path d="M482.6 340.4L484.7 339.9L486.4 335.2L484.4 335.8z" fill="#53f8b8" stroke="#53f8b8"/><path d="M484.4 335.8L486.4 335.2L488.1 330.8L486.1 331.3z" fill="#51f8a5" stroke="#51f8a5"/><path d="M512.2 299.1L514.4 296.9L516.1 296.5L513.9 298.7z" fill="#1c4b00" stroke="#1c4b00"/><path d="M450.0 394.7L452.0 395.6L454.0 393.9L452.0 393.0z" fill="#090acb" stroke="#090acb"/><path d="M576.4 287.6L578.9 287.6L580.1 290.1L577.6 290.0z" fill="#589600" stroke="#589600"/><path d="M454.0 393.9L456.0 394.4L457.9 392.3L456.0 391.8z" fill="#181fe1" stroke="#181fe1"/><path d="M465.5 383.9L467.4 383.6L469.2 380.1L467.3 380.4z" fill="#3e78f8" stroke="#3e78f8"/><path d="M439.6 392.0L441.7 394.0L443.9 393.1L441.8 391.1z" fill="#000785" stroke="#000785"/><path d="M419.1 359.9L421.5 364.3L423.7 363.5L421.4 359.2z" fill="#005264" stroke="#005264"/><path d="M445.9 394.8L448.0 396.1L450.0 394.7L448.0 393.5z" fill="#0102ae" stroke="#0102ae"/><path d="M495.1 315.3L497.2 314.3L499.0 311.2L496.9 312.3z" fill="#18f818" stroke="#18f818"/><path d="M555.9 284.8L558.5 282.5L559.8 285.4L557.3 287.6z" fill="#547a00" stroke="#547a00"/><path d="M457.9 392.3L459.9 392.4L461.8 389.9L459.8 389.8z" fill="#2236ee" stroke="#2236ee"/><path d="M585.0 291.6L587.5 293.0L588.6 295.2L586.2 293.8z" fill="#54ac00" stroke="#54ac00"/><path d="M516.1 296.5L518.4 294.1L520.1 294.1L517.8 296.6z" fill="#245100" stroke="#245100"/><path d="M463.6 387.1L465.6 386.8L467.4 383.6L465.5 383.9z" fill="#3261f7" stroke="#3261f7"/><path d="M506.4 303.1L508.6 301.3L510.4 300.0L508.2 301.8z" fill="#123e00" stroke="#123e00"/><path d="M500.8 308.6L502.9 307.1L504.7 304.9L502.5 306.4z" fill="#2cf303" stroke="#2cf303"/><path d="M566.2 284.6L568.8 283.3L570.1 286.1L567.5 287.4z" fill="#5b8400" stroke="#5b8400"/><path d="M441.7 394.0L443.8 395.7L445.9 394.8L443.9 393.1z" fill="#000492" stroke="#000492"/><path d="M493.3 318.7L495.5 317.7L497.2 314.3L495.1 315.3z" fill="#22fa31" stroke="#22fa31"/><path d="M552.0 284.6L554.5 282.0L555.9 284.8L553.4 287.3z" fill="#557700" stroke="#557700"/><path d="M520.1 294.1L522.4 291.5L524.1 292.0L521.8 294.6z" fill="#2c5700" stroke="#2c5700"/><path d="M474.5 367.9L476.5 367.2L478.2 362.7L476.2 363.5z" fill="#3dc9fa" stroke="#3dc9fa"/><path d="M472.7 372.2L474.7 371.5L476.5 367.2L474.5 367.9z" fill="#3ab4fa" stroke="#3ab4fa"/><path d="M476.2 363.5L478.2 362.7L479.9 358.0L477.9 358.8z" fill="#3fdffa" stroke="#3fdffa"/><path d="M608.1 322.7L610.2 327.2L611.1 329.2L609.0 324.7z" fill="#00cd3d" stroke="#00cd3d"/><path d="M477.9 358.8L479.9 358.0L481.6 353.3L479.6 354.1z" fill="#40f4f9" stroke="#40f4f9"/><path d="M587.5 293.0L589.9 294.8L591.0 297.1L588.6 295.2z" fill="#52b300" stroke="#52b300"/><path d="M452.0 395.6L454.0 396.2L456.0 394.4L454.0 393.9z" fill="#070bd5" stroke="#070bd5"/><path d="M471.0 376.3L473.0 375.6L474.7 371.5L472.7 372.2z" fill="#36a0fa" stroke="#36a0fa"/><path d="M461.8 389.9L463.7 389.7L465.6 386.8L463.6 387.1z" fill="#234af5" stroke="#234af5"/><path d="M578.9 287.6L581.4 288.1L582.6 290.6L580.1 290.1z" fill="#609e00" stroke="#609e00"/><path d="M491.6 322.5L493.7 321.4L495.5 317.7L493.3 318.7z" fill="#2cfa4a" stroke="#2cfa4a"/><path d="M448.0 396.1L450.0 397.0L452.0 395.6L450.0 394.7z" fill="#0202bc" stroke="#0202bc"/><path d="M479.6 354.1L481.6 353.3L483.3 348.5L481.3 349.4z" fill="#41f9e8" stroke="#41f9e8"/><path d="M572.6 285.3L575.2 284.9L576.4 287.6L573.8 288.0z" fill="#619000" stroke="#619000"/><path d="M524.1 292.0L526.4 289.1L528.1 290.0L525.8 292.9z" fill="#345c00" stroke="#345c00"/><path d="M548.0 284.7L550.5 281.9L552.0 284.6L549.5 287.3z" fill="#547400" stroke="#547400"/><path d="M481.3 349.4L483.3 348.5L485.0 343.7L483.0 344.6z" fill="#41f9d2" stroke="#41f9d2"/><path d="M456.0 394.4L457.9 394.5L459.9 392.4L457.9 392.3z" fill="#0f1ee6" stroke="#0f1ee6"/><path d="M469.2 380.1L471.2 379.4L473.0 375.6L471.0 376.3z" fill="#318bfa" stroke="#318bfa"/><path d="M510.4 300.0L512.6 297.8L514.4 296.9L512.2 299.1z" fill="#1a4400" stroke="#1a4400"/><path d="M489.9 326.5L492.0 325.5L493.7 321.4L491.6 322.5z" fill="#34fa63" stroke="#34fa63"/><path d="M605.9 318.4L608.1 322.7L609.0 324.7L606.9 320.4z" fill="#00cc25" stroke="#00cc25"/><path d="M483.0 344.6L485.0 343.7L486.8 338.9L484.7 339.9z" fill="#41f9bc" stroke="#41f9bc"/><path d="M499.0 311.2L501.1 309.8L502.9 307.1L500.8 308.6z" fill="#26f708" stroke="#26f708"/><path d="M488.1 330.8L490.2 329.8L492.0 325.5L489.9 326.5z" fill="#3afa7a" stroke="#3afa7a"/><path d="M484.7 339.9L486.8 338.9L488.5 334.3L486.4 335.2z" fill="#40faa7" stroke="#40faa7"/><path d="M486.4 335.2L488.5 334.3L490.2 329.8L488.1 330.8z" fill="#3dfa91" stroke="#3dfa91"/><path d="M528.1 290.0L530.4 287.0L532.1 288.3L529.7 291.3z" fill="#3c6100" stroke="#3c6100"/><path d="M589.9 294.8L592.3 297.1L593.4 299.4L591.0 297.1z" fill="#4eb900" stroke="#4eb900"/><path d="M544.1 285.1L546.6 282.2L548.0 284.7L545.6 287.6z" fill="#517100" stroke="#517100"/><path d="M443.8 395.7L445.8 397.0L448.0 396.1L445.9 394.8z" fill="#0002a0" stroke="#0002a0"/><path d="M562.4 283.4L564.9 281.7L566.2 284.6L563.7 286.2z" fill="#5f8000" stroke="#5f8000"/><path d="M467.4 383.6L469.4 382.9L471.2 379.4L469.2 380.1z" fill="#2976fa" stroke="#2976fa"/><path d="M504.7 304.9L506.8 303.1L508.6 301.3L506.4 303.1z" fill="#43ed01" stroke="#43ed01"/><path d="M532.1 288.3L534.5 285.3L536.1 286.9L533.7 290.0z" fill="#436600" stroke="#436600"/><path d="M603.7 314.2L605.9 318.4L606.9 320.4L604.7 316.2z" fill="#00cb0e" stroke="#00cb0e"/><path d="M540.1 285.9L542.5 282.8L544.1 285.1L541.6 288.1z" fill="#4d6d00" stroke="#4d6d00"/><path d="M536.1 286.9L538.5 283.9L540.1 285.9L537.7 288.9z" fill="#496a00" stroke="#496a00"/><path d="M459.9 392.4L461.8 392.2L463.7 389.7L461.8 389.9z" fill="#1433f1" stroke="#1433f1"/><path d="M592.3 297.1L594.6 299.9L595.7 302.1L593.4 299.4z" fill="#45be00" stroke="#45be00"/><path d="M601.5 310.2L603.7 314.2L604.7 316.2L602.5 312.3z" fill="#07ca00" stroke="#07ca00"/><path d="M514.4 296.9L516.6 294.5L518.4 294.1L516.1 296.5z" fill="#234b00" stroke="#234b00"/><path d="M497.2 314.3L499.3 312.8L501.1 309.8L499.0 311.2z" fill="#1ff90f" stroke="#1ff90f"/><path d="M581.4 288.1L583.9 289.1L585.0 291.6L582.6 290.6z" fill="#65a600" stroke="#65a600"/><path d="M594.6 299.9L596.9 303.0L598.0 305.1L595.7 302.1z" fill="#3ac200" stroke="#3ac200"/><path d="M599.2 306.4L601.5 310.2L602.5 312.3L600.3 308.5z" fill="#1ac800" stroke="#1ac800"/><path d="M465.6 386.8L467.5 386.2L469.4 382.9L467.4 383.6z" fill="#2060f9" stroke="#2060f9"/><path d="M596.9 303.0L599.2 306.4L600.3 308.5L598.0 305.1z" fill="#2bc500" stroke="#2bc500"/><path d="M450.0 397.0L451.9 397.5L454.0 396.2L452.0 395.6z" fill="#0105c7" stroke="#0105c7"/><path d="M568.8 283.3L571.4 282.5L572.6 285.3L570.1 286.1z" fill="#678a00" stroke="#678a00"/><path d="M558.5 282.5L561.0 280.5L562.4 283.4L559.8 285.4z" fill="#627d00" stroke="#627d00"/><path d="M454.0 396.2L455.9 396.3L457.9 394.5L456.0 394.4z" fill="#050fdc" stroke="#050fdc"/><path d="M575.2 284.9L577.7 284.9L578.9 287.6L576.4 287.6z" fill="#6b9800" stroke="#6b9800"/><path d="M495.5 317.7L497.6 316.2L499.3 312.8L497.2 314.3z" fill="#17fb16" stroke="#17fb16"/><path d="M445.8 397.0L447.8 398.0L450.0 397.0L448.0 396.1z" fill="#0003ad" stroke="#0003ad"/><path d="M508.6 301.3L510.8 299.1L512.6 297.8L510.4 300.0z" fill="#183e00" stroke="#183e00"/><path d="M502.9 307.1L505.1 305.3L506.8 303.1L504.7 304.9z" fill="#3ef302" stroke="#3ef302"/><path d="M518.4 294.1L520.6 291.4L522.4 291.5L520.1 294.1z" fill="#2c5100" stroke="#2c5100"/><path d="M476.5 367.2L478.5 366.1L480.2 361.6L478.2 362.7z" fill="#2dd4fb" stroke="#2dd4fb"/><path d="M463.7 389.7L465.7 389.0L467.5 386.2L465.6 386.8z" fill="#154bf6" stroke="#154bf6"/><path d="M474.7 371.5L476.7 370.4L478.5 366.1L476.5 367.2z" fill="#2abefb" stroke="#2abefb"/><path d="M478.2 362.7L480.2 361.6L481.9 356.9L479.9 358.0z" fill="#2febfb" stroke="#2febfb"/><path d="M457.9 394.5L459.9 394.3L461.8 392.2L459.9 392.4z" fill="#0922ea" stroke="#0922ea"/><path d="M479.9 358.0L481.9 356.9L483.6 352.1L481.6 353.3z" fill="#31fbf2" stroke="#31fbf2"/><path d="M473.0 375.6L474.9 374.5L476.7 370.4L474.7 371.5z" fill="#26a7fb" stroke="#26a7fb"/><path d="M493.7 321.4L495.8 320.0L497.6 316.2L495.5 317.7z" fill="#1efb2f" stroke="#1efb2f"/><path d="M583.9 289.1L586.3 290.5L587.5 293.0L585.0 291.6z" fill="#67ae00" stroke="#67ae00"/><path d="M481.6 353.3L483.6 352.1L485.4 347.3L483.3 348.5z" fill="#32fbda" stroke="#32fbda"/><path d="M554.5 282.0L557.1 279.7L558.5 282.5L555.9 284.8z" fill="#627900" stroke="#627900"/><path d="M483.3 348.5L485.4 347.3L487.1 342.4L485.0 343.7z" fill="#32fbc2" stroke="#32fbc2"/><path d="M471.2 379.4L473.2 378.4L474.9 374.5L473.0 375.6z" fill="#2192fb" stroke="#2192fb"/><path d="M492.0 325.5L494.1 324.1L495.8 320.0L493.7 321.4z" fill="#25fb49" stroke="#25fb49"/><path d="M522.4 291.5L524.7 288.6L526.4 289.1L524.1 292.0z" fill="#365700" stroke="#365700"/><path d="M485.0 343.7L487.1 342.4L488.8 337.6L486.8 338.9z" fill="#31fbaa" stroke="#31fbaa"/><path d="M490.2 329.8L492.3 328.4L494.1 324.1L492.0 325.5z" fill="#2afb61" stroke="#2afb61"/><path d="M486.8 338.9L488.8 337.6L490.6 332.9L488.5 334.3z" fill="#30fb92" stroke="#30fb92"/><path d="M488.5 334.3L490.6 332.9L492.3 328.4L490.2 329.8z" fill="#2dfb7a" stroke="#2dfb7a"/><path d="M501.1 309.8L503.3 307.9L505.1 305.3L502.9 307.1z" fill="#37f705" stroke="#37f705"/><path d="M564.9 281.7L567.5 280.4L568.8 283.3L566.2 284.6z" fill="#6b8500" stroke="#6b8500"/><path d="M469.4 382.9L471.3 381.9L473.2 378.4L471.2 379.4z" fill="#1b7cfb" stroke="#1b7cfb"/><path d="M512.6 297.8L514.8 295.3L516.6 294.5L514.4 296.9z" fill="#214400" stroke="#214400"/><path d="M550.5 281.9L553.1 279.3L554.5 282.0L552.0 284.6z" fill="#617600" stroke="#617600"/><path d="M461.8 392.2L463.8 391.6L465.7 389.0L463.7 389.7z" fill="#0b39f2" stroke="#0b39f2"/><path d="M607.1 320.5L609.3 325.0L610.2 327.2L608.1 322.7z" fill="#00ce27" stroke="#00ce27"/><path d="M586.3 290.5L588.8 292.4L589.9 294.8L587.5 293.0z" fill="#67b500" stroke="#67b500"/><path d="M526.4 289.1L528.7 286.1L530.4 287.0L528.1 290.0z" fill="#3f5c00" stroke="#3f5c00"/><path d="M451.9 397.5L453.9 397.7L455.9 396.3L454.0 396.2z" fill="#010bd0" stroke="#010bd0"/><path d="M506.8 303.1L509.0 300.9L510.8 299.1L508.6 301.3z" fill="#58ed00" stroke="#58ed00"/><path d="M577.7 284.9L580.2 285.4L581.4 288.1L578.9 287.6z" fill="#73a000" stroke="#73a000"/><path d="M447.8 398.0L449.8 398.5L451.9 397.5L450.0 397.0z" fill="#0006b9" stroke="#0006b9"/><path d="M571.4 282.5L573.9 282.0L575.2 284.9L572.6 285.3z" fill="#739100" stroke="#739100"/><path d="M546.6 282.2L549.1 279.4L550.5 281.9L548.0 284.7z" fill="#5f7200" stroke="#5f7200"/><path d="M455.9 396.3L457.9 396.1L459.9 394.3L457.9 394.5z" fill="#0317e1" stroke="#0317e1"/><path d="M467.5 386.2L469.5 385.2L471.3 381.9L469.4 382.9z" fill="#1468f9" stroke="#1468f9"/><path d="M530.4 287.0L532.8 283.9L534.5 285.3L532.1 288.3z" fill="#476100" stroke="#476100"/><path d="M604.9 316.1L607.1 320.5L608.1 322.7L605.9 318.4z" fill="#00cd0f" stroke="#00cd0f"/><path d="M499.3 312.8L501.5 311.0L503.3 307.9L501.1 309.8z" fill="#2dfa09" stroke="#2dfa09"/><path d="M542.5 282.8L545.0 279.8L546.6 282.2L544.1 285.1z" fill="#5b6e00" stroke="#5b6e00"/><path d="M588.8 292.4L591.2 294.7L592.3 297.1L589.9 294.8z" fill="#62bb00" stroke="#62bb00"/><path d="M534.5 285.3L536.9 282.1L538.5 283.9L536.1 286.9z" fill="#4f6600" stroke="#4f6600"/><path d="M538.5 283.9L541.0 280.8L542.5 282.8L540.1 285.9z" fill="#556a00" stroke="#556a00"/><path d="M516.6 294.5L518.9 291.8L520.6 291.4L518.4 294.1z" fill="#2b4a00" stroke="#2b4a00"/><path d="M602.7 311.9L604.9 316.1L605.9 318.4L603.7 314.2z" fill="#07cc00" stroke="#07cc00"/><path d="M561.0 280.5L563.6 278.8L564.9 281.7L562.4 283.4z" fill="#6f8000" stroke="#6f8000"/><path d="M459.9 394.3L461.8 393.7L463.8 391.6L461.8 392.2z" fill="#052bec" stroke="#052bec"/><path d="M591.2 294.7L593.6 297.4L594.6 299.9L592.3 297.1z" fill="#5ac000" stroke="#5ac000"/><path d="M497.6 316.2L499.7 314.5L501.5 311.0L499.3 312.8z" fill="#22fb0f" stroke="#22fb0f"/><path d="M600.5 307.8L602.7 311.9L603.7 314.2L601.5 310.2z" fill="#1dcb00" stroke="#1dcb00"/><path d="M465.7 389.0L467.6 388.1L469.5 385.2L467.5 386.2z" fill="#0d55f7" stroke="#0d55f7"/><path d="M505.1 305.3L507.3 303.1L509.0 300.9L506.8 303.1z" fill="#53f301" stroke="#53f301"/><path d="M478.5 366.1L480.5 364.7L482.2 360.1L480.2 361.6z" fill="#22e4fc" stroke="#22e4fc"/><path d="M593.6 297.4L595.9 300.5L596.9 303.0L594.6 299.9z" fill="#4fc400" stroke="#4fc400"/><path d="M598.2 304.0L600.5 307.8L601.5 310.2L599.2 306.4z" fill="#30c900" stroke="#30c900"/><path d="M476.7 370.4L478.7 369.0L480.5 364.7L478.5 366.1z" fill="#1fcdfc" stroke="#1fcdfc"/><path d="M480.2 361.6L482.2 360.1L484.0 355.4L481.9 356.9z" fill="#24fcfb" stroke="#24fcfb"/><path d="M580.2 285.4L582.7 286.3L583.9 289.1L581.4 288.1z" fill="#79a800" stroke="#79a800"/><path d="M595.9 300.5L598.2 304.0L599.2 306.4L596.9 303.0z" fill="#41c700" stroke="#41c700"/><path d="M510.8 299.1L513.1 296.6L514.8 295.3L512.6 297.8z" fill="#1e3e00" stroke="#1e3e00"/><path d="M481.9 356.9L484.0 355.4L485.7 350.6L483.6 352.1z" fill="#25fbe2" stroke="#25fbe2"/><path d="M474.9 374.5L476.9 373.2L478.7 369.0L476.7 370.4z" fill="#1bb6fc" stroke="#1bb6fc"/><path d="M495.8 320.0L497.9 318.3L499.7 314.5L497.6 316.2z" fill="#15fc15" stroke="#15fc15"/><path d="M483.6 352.1L485.7 350.6L487.4 345.7L485.4 347.3z" fill="#26fbc8" stroke="#26fbc8"/><path d="M520.6 291.4L522.9 288.5L524.7 288.6L522.4 291.5z" fill="#355000" stroke="#355000"/><path d="M485.4 347.3L487.4 345.7L489.2 340.8L487.1 342.4z" fill="#26fbaf" stroke="#26fbaf"/><path d="M473.2 378.4L475.1 377.0L476.9 373.2L474.9 374.5z" fill="#179ffc" stroke="#179ffc"/><path d="M567.5 280.4L570.1 279.6L571.4 282.5L568.8 283.3z" fill="#788b00" stroke="#788b00"/><path d="M557.1 279.7L559.7 277.6L561.0 280.5L558.5 282.5z" fill="#707c00" stroke="#707c00"/><path d="M494.1 324.1L496.2 322.4L497.9 318.3L495.8 320.0z" fill="#1afc2e" stroke="#1afc2e"/><path d="M449.8 398.5L451.8 398.6L453.9 397.7L451.9 397.5z" fill="#000cc2" stroke="#000cc2"/><path d="M487.1 342.4L489.2 340.8L490.9 336.0L488.8 337.6z" fill="#25fb95" stroke="#25fb95"/><path d="M453.9 397.7L455.8 397.4L457.9 396.1L455.9 396.3z" fill="#0014d5" stroke="#0014d5"/><path d="M492.3 328.4L494.4 326.7L496.2 322.4L494.1 324.1z" fill="#1efc48" stroke="#1efc48"/><path d="M573.9 282.0L576.5 282.0L577.7 284.9L575.2 284.9z" fill="#7e9900" stroke="#7e9900"/><path d="M488.8 337.6L490.9 336.0L492.7 331.3L490.6 332.9z" fill="#24fc7b" stroke="#24fc7b"/><path d="M490.6 332.9L492.7 331.3L494.4 326.7L492.3 328.4z" fill="#22fc61" stroke="#22fc61"/><path d="M463.8 391.6L465.7 390.6L467.6 388.1L465.7 389.0z" fill="#0645f3" stroke="#0645f3"/><path d="M471.3 381.9L473.3 380.6L475.1 377.0L473.2 378.4z" fill="#128afb" stroke="#128afb"/><path d="M503.3 307.9L505.5 305.8L507.3 303.1L505.1 305.3z" fill="#4bf703" stroke="#4bf703"/><path d="M524.7 288.6L527.0 285.5L528.7 286.1L526.4 289.1z" fill="#3f5600" stroke="#3f5600"/><path d="M457.9 396.1L459.8 395.5L461.8 393.7L459.9 394.3z" fill="#0123e4" stroke="#0123e4"/><path d="M582.7 286.3L585.2 287.8L586.3 290.5L583.9 289.1z" fill="#7caf00" stroke="#7caf00"/><path d="M553.1 279.3L555.7 276.9L557.1 279.7L554.5 282.0z" fill="#6f7800" stroke="#6f7800"/><path d="M514.8 295.3L517.1 292.6L518.9 291.8L516.6 294.5z" fill="#284400" stroke="#284400"/><path d="M469.5 385.2L471.4 383.9L473.3 380.6L471.3 381.9z" fill="#0d76fa" stroke="#0d76fa"/><path d="M509.0 300.9L511.3 298.4L513.1 296.6L510.8 299.1z" fill="#1b3900" stroke="#1b3900"/><path d="M528.7 286.1L531.1 282.9L532.8 283.9L530.4 287.0z" fill="#495c00" stroke="#495c00"/><path d="M501.5 311.0L503.7 308.9L505.5 305.8L503.3 307.9z" fill="#41f906" stroke="#41f906"/><path d="M563.6 278.8L566.2 277.5L567.5 280.4L564.9 281.7z" fill="#7b8400" stroke="#7b8400"/><path d="M549.1 279.4L551.6 276.7L553.1 279.3L550.5 281.9z" fill="#6d7400" stroke="#6d7400"/><path d="M606.2 318.1L608.4 322.7L609.3 325.0L607.1 320.5z" fill="#00cf10" stroke="#00cf10"/><path d="M585.2 287.8L587.7 289.7L588.8 292.4L586.3 290.5z" fill="#7cb600" stroke="#7cb600"/><path d="M461.8 393.7L463.7 392.8L465.7 390.6L463.8 391.6z" fill="#033aed" stroke="#033aed"/><path d="M532.8 283.9L535.3 280.7L536.9 282.1L534.5 285.3z" fill="#536100" stroke="#536100"/><path d="M576.5 282.0L579.0 282.5L580.2 285.4L577.7 284.9z" fill="#87a100" stroke="#87a100"/><path d="M545.0 279.8L547.6 277.0L549.1 279.4L546.6 282.2z" fill="#686f00" stroke="#686f00"/><path d="M467.6 388.1L469.6 386.8L471.4 383.9L469.5 385.2z" fill="#0865f7" stroke="#0865f7"/><path d="M536.9 282.1L539.4 279.0L541.0 280.8L538.5 283.9z" fill="#5b6600" stroke="#5b6600"/><path d="M541.0 280.8L543.5 277.7L545.0 279.8L542.5 282.8z" fill="#636b00" stroke="#636b00"/><path d="M499.7 314.5L501.9 312.4L503.7 308.9L501.5 311.0z" fill="#34fb0a" stroke="#34fb0a"/><path d="M570.1 279.6L572.7 279.1L573.9 282.0L571.4 282.5z" fill="#859200" stroke="#859200"/><path d="M604.0 313.6L606.2 318.1L607.1 320.5L604.9 316.1z" fill="#08ce00" stroke="#08ce00"/><path d="M518.9 291.8L521.2 288.8L522.9 288.5L520.6 291.4z" fill="#334a00" stroke="#334a00"/><path d="M451.8 398.6L453.7 398.4L455.8 397.4L453.9 397.7z" fill="#0015c9" stroke="#0015c9"/><path d="M480.5 364.7L482.5 362.9L484.2 358.3L482.2 360.1z" fill="#1af8fc" stroke="#1af8fc"/><path d="M587.7 289.7L590.1 292.0L591.2 294.7L588.8 292.4z" fill="#78bc00" stroke="#78bc00"/><path d="M478.7 369.0L480.7 367.3L482.5 362.9L480.5 364.7z" fill="#17e0fc" stroke="#17e0fc"/><path d="M482.2 360.1L484.2 358.3L486.0 353.6L484.0 355.4z" fill="#1bfce7" stroke="#1bfce7"/><path d="M507.3 303.1L509.5 300.7L511.3 298.4L509.0 300.9z" fill="#6bf201" stroke="#6bf201"/><path d="M455.8 397.4L457.7 396.8L459.8 395.5L457.9 396.1z" fill="#0021d9" stroke="#0021d9"/><path d="M484.0 355.4L486.0 353.6L487.7 348.7L485.7 350.6z" fill="#1dfccd" stroke="#1dfccd"/><path d="M476.9 373.2L478.9 371.5L480.7 367.3L478.7 369.0z" fill="#14c8fc" stroke="#14c8fc"/><path d="M601.7 309.3L604.0 313.6L604.9 316.1L602.7 311.9z" fill="#1fcd00" stroke="#1fcd00"/><path d="M497.9 318.3L500.1 316.2L501.9 312.4L499.7 314.5z" fill="#25fc0f" stroke="#25fc0f"/><path d="M485.7 350.6L487.7 348.7L489.5 343.8L487.4 345.7z" fill="#1dfcb2" stroke="#1dfcb2"/><path d="M513.1 296.6L515.3 293.9L517.1 292.6L514.8 295.3z" fill="#253e00" stroke="#253e00"/><path d="M559.7 277.6L562.3 275.9L563.6 278.8L561.0 280.5z" fill="#7d8000" stroke="#7d8000"/><path d="M487.4 345.7L489.5 343.8L491.3 338.9L489.2 340.8z" fill="#1efc98" stroke="#1efc98"/><path d="M590.1 292.0L592.5 294.8L593.6 297.4L591.2 294.7z" fill="#71c100" stroke="#71c100"/><path d="M475.1 377.0L477.1 375.4L478.9 371.5L476.9 373.2z" fill="#10b2fc" stroke="#10b2fc"/><path d="M496.2 322.4L498.3 320.3L500.1 316.2L497.9 318.3z" fill="#13fc13" stroke="#13fc13"/><path d="M599.5 305.3L601.7 309.3L602.7 311.9L600.5 307.8z" fill="#34cc00" stroke="#34cc00"/><path d="M489.2 340.8L491.3 338.9L493.0 334.1L490.9 336.0z" fill="#1dfc7d" stroke="#1dfc7d"/><path d="M465.7 390.6L467.6 389.3L469.6 386.8L467.6 388.1z" fill="#0457f3" stroke="#0457f3"/><path d="M494.4 326.7L496.5 324.7L498.3 320.3L496.2 322.4z" fill="#17fc2d" stroke="#17fc2d"/><path d="M490.9 336.0L493.0 334.1L494.8 329.3L492.7 331.3z" fill="#1cfc62" stroke="#1cfc62"/><path d="M592.5 294.8L594.8 297.9L595.9 300.5L593.6 297.4z" fill="#66c500" stroke="#66c500"/><path d="M492.7 331.3L494.8 329.3L496.5 324.7L494.4 326.7z" fill="#1afc47" stroke="#1afc47"/><path d="M597.2 301.4L599.5 305.3L600.5 307.8L598.2 304.0z" fill="#47ca00" stroke="#47ca00"/><path d="M522.9 288.5L525.3 285.4L527.0 285.5L524.7 288.6z" fill="#3e5000" stroke="#3e5000"/><path d="M594.8 297.9L597.2 301.4L598.2 304.0L595.9 300.5z" fill="#58c800" stroke="#58c800"/><path d="M459.8 395.5L461.7 394.5L463.7 392.8L461.8 393.7z" fill="#0133e5" stroke="#0133e5"/><path d="M579.0 282.5L581.5 283.5L582.7 286.3L580.2 285.4z" fill="#8da900" stroke="#8da900"/><path d="M473.3 380.6L475.3 379.0L477.1 375.4L475.1 377.0z" fill="#0c9dfb" stroke="#0c9dfb"/><path d="M505.5 305.8L507.7 303.3L509.5 300.7L507.3 303.1z" fill="#63f602" stroke="#63f602"/><path d="M555.7 276.9L558.3 274.8L559.7 277.6L557.1 279.7z" fill="#7b7900" stroke="#7b7900"/><path d="M566.2 277.5L568.8 276.6L570.1 279.6L567.5 280.4z" fill="#898b00" stroke="#898b00"/><path d="M572.7 279.1L575.3 279.1L576.5 282.0L573.9 282.0z" fill="#909a00" stroke="#909a00"/><path d="M471.4 383.9L473.4 382.3L475.3 379.0L473.3 380.6z" fill="#088afa" stroke="#088afa"/><path d="M527.0 285.5L529.4 282.3L531.1 282.9L528.7 286.1z" fill="#495600" stroke="#495600"/><path d="M517.1 292.6L519.4 289.7L521.2 288.8L518.9 291.8z" fill="#304400" stroke="#304400"/><path d="M511.3 298.4L513.5 295.7L515.3 293.9L513.1 296.6z" fill="#213900" stroke="#213900"/><path d="M463.7 392.8L465.7 391.5L467.6 389.3L465.7 390.6z" fill="#014cee" stroke="#014cee"/><path d="M503.7 308.9L505.9 306.5L507.7 303.3L505.5 305.8z" fill="#57f904" stroke="#57f904"/><path d="M581.5 283.5L584.1 284.9L585.2 287.8L582.7 286.3z" fill="#91b000" stroke="#91b000"/><path d="M453.7 398.4L455.6 397.8L457.7 396.8L455.8 397.4z" fill="#0021cd" stroke="#0021cd"/><path d="M551.6 276.7L554.2 274.3L555.7 276.9L553.1 279.3z" fill="#767200" stroke="#767200"/><path d="M531.1 282.9L533.6 279.7L535.3 280.7L532.8 283.9z" fill="#545c00" stroke="#545c00"/><path d="M469.6 386.8L471.5 385.2L473.4 382.3L471.4 383.9z" fill="#0579f7" stroke="#0579f7"/><path d="M457.7 396.8L459.7 395.9L461.7 394.5L459.8 395.5z" fill="#0030dc" stroke="#0030dc"/><path d="M547.6 277.0L550.1 274.3L551.6 276.7L549.1 279.4z" fill="#716c00" stroke="#716c00"/><path d="M501.9 312.4L504.1 310.0L505.9 306.5L503.7 308.9z" fill="#49fb07" stroke="#49fb07"/><path d="M535.3 280.7L537.7 277.6L539.4 279.0L536.9 282.1z" fill="#5f6100" stroke="#5f6100"/><path d="M562.3 275.9L564.9 274.6L566.2 277.5L563.6 278.8z" fill="#847d00" stroke="#847d00"/><path d="M543.5 277.7L546.0 274.8L547.6 277.0L545.0 279.8z" fill="#6c6800" stroke="#6c6800"/><path d="M605.2 315.5L607.5 320.1L608.4 322.7L606.2 318.1z" fill="#08cf00" stroke="#08cf00"/><path d="M482.5 362.9L484.5 360.9L486.3 356.3L484.2 358.3z" fill="#14fcea" stroke="#14fcea"/><path d="M539.4 279.0L541.9 275.9L543.5 277.7L541.0 280.8z" fill="#676600" stroke="#676600"/><path d="M584.1 284.9L586.5 286.8L587.7 289.7L585.2 287.8z" fill="#92b700" stroke="#92b700"/><path d="M480.7 367.3L482.7 365.4L484.5 360.9L482.5 362.9z" fill="#12f7fc" stroke="#12f7fc"/><path d="M484.2 358.3L486.3 356.3L488.1 351.5L486.0 353.6z" fill="#16fcd0" stroke="#16fcd0"/><path d="M521.2 288.8L523.5 285.7L525.3 285.4L522.9 288.5z" fill="#3b4a00" stroke="#3b4a00"/><path d="M486.0 353.6L488.1 351.5L489.8 346.6L487.7 348.7z" fill="#17fcb5" stroke="#17fcb5"/><path d="M478.9 371.5L480.9 369.6L482.7 365.4L480.7 367.3z" fill="#0fdffc" stroke="#0fdffc"/><path d="M509.5 300.7L511.7 297.9L513.5 295.7L511.3 298.4z" fill="#84f201" stroke="#84f201"/><path d="M500.1 316.2L502.3 313.8L504.1 310.0L501.9 312.4z" fill="#39fc0b" stroke="#39fc0b"/><path d="M575.3 279.1L577.8 279.6L579.0 282.5L576.5 282.0z" fill="#9aa200" stroke="#9aa200"/><path d="M487.7 348.7L489.8 346.6L491.6 341.7L489.5 343.8z" fill="#18fc9a" stroke="#18fc9a"/><path d="M489.5 343.8L491.6 341.7L493.4 336.7L491.3 338.9z" fill="#18fc7f" stroke="#18fc7f"/><path d="M603.0 311.0L605.2 315.5L606.2 318.1L604.0 313.6z" fill="#20cf00" stroke="#20cf00"/><path d="M477.1 375.4L479.1 373.5L480.9 369.6L478.9 371.5z" fill="#0cc8fc" stroke="#0cc8fc"/><path d="M568.8 276.6L571.4 276.1L572.7 279.1L570.1 279.6z" fill="#928e00" stroke="#928e00"/><path d="M498.3 320.3L500.5 318.0L502.3 313.8L500.1 316.2z" fill="#26fc0e" stroke="#26fc0e"/><path d="M461.7 394.5L463.6 393.3L465.7 391.5L463.7 392.8z" fill="#0045e6" stroke="#0045e6"/><path d="M467.6 389.3L469.6 387.8L471.5 385.2L469.6 386.8z" fill="#026bf3" stroke="#026bf3"/><path d="M515.3 293.9L517.6 291.0L519.4 289.7L517.1 292.6z" fill="#2c3e00" stroke="#2c3e00"/><path d="M491.3 338.9L493.4 336.7L495.1 331.8L493.0 334.1z" fill="#17fc63" stroke="#17fc63"/><path d="M586.5 286.8L589.0 289.2L590.1 292.0L587.7 289.7z" fill="#8fbc00" stroke="#8fbc00"/><path d="M496.5 324.7L498.7 322.4L500.5 318.0L498.3 320.3z" fill="#12fc11" stroke="#12fc11"/><path d="M493.0 334.1L495.1 331.8L496.9 327.0L494.8 329.3z" fill="#16fc47" stroke="#16fc47"/><path d="M494.8 329.3L496.9 327.0L498.7 322.4L496.5 324.7z" fill="#14fc2c" stroke="#14fc2c"/><path d="M600.7 306.7L603.0 311.0L604.0 313.6L601.7 309.3z" fill="#37ce00" stroke="#37ce00"/><path d="M475.3 379.0L477.3 377.1L479.1 373.5L477.1 375.4z" fill="#09b4fb" stroke="#09b4fb"/><path d="M558.3 274.8L560.9 273.1L562.3 275.9L559.7 277.6z" fill="#7e7200" stroke="#7e7200"/><path d="M525.3 285.4L527.7 282.2L529.4 282.3L527.0 285.5z" fill="#485000" stroke="#485000"/><path d="M589.0 289.2L591.4 292.0L592.5 294.8L590.1 292.0z" fill="#88c100" stroke="#88c100"/><path d="M598.5 302.6L600.7 306.7L601.7 309.3L599.5 305.3z" fill="#4ccc00" stroke="#4ccc00"/><path d="M507.7 303.3L509.9 300.7L511.7 297.9L509.5 300.7z" fill="#7cf602" stroke="#7cf602"/><path d="M591.4 292.0L593.8 295.2L594.8 297.9L592.5 294.8z" fill="#7dc500" stroke="#7dc500"/><path d="M596.1 298.7L598.5 302.6L599.5 305.3L597.2 301.4z" fill="#5fcb00" stroke="#5fcb00"/><path d="M593.8 295.2L596.1 298.7L597.2 301.4L594.8 297.9z" fill="#70c800" stroke="#70c800"/><path d="M455.6 397.8L457.5 396.9L459.7 395.9L457.7 396.8z" fill="#00124e" stroke="#00124e"/><path d="M473.4 382.3L475.4 380.4L477.3 377.1L475.3 379.0z" fill="#06a1f9" stroke="#06a1f9"/><path d="M577.8 279.6L580.4 280.5L581.5 283.5L579.0 282.5z" fill="#a2a900" stroke="#a2a900"/><path d="M465.7 391.5L467.6 390.0L469.6 387.8L467.6 389.3z" fill="#0161ee" stroke="#0161ee"/><path d="M554.2 274.3L556.8 272.2L558.3 274.8L555.7 276.9z" fill="#796900" stroke="#796900"/><path d="M529.4 282.3L531.9 279.1L533.6 279.7L531.1 282.9z" fill="#545600" stroke="#545600"/><path d="M519.4 289.7L521.8 286.6L523.5 285.7L521.2 288.8z" fill="#374400" stroke="#374400"/><path d="M513.5 295.7L515.8 292.8L517.6 291.0L515.3 293.9z" fill="#273900" stroke="#273900"/><path d="M564.9 274.6L567.5 273.6L568.8 276.6L566.2 277.5z" fill="#8a7b00" stroke="#8a7b00"/><path d="M505.9 306.5L508.1 303.8L509.9 300.7L507.7 303.3z" fill="#71f903" stroke="#71f903"/><path d="M459.7 395.9L461.6 394.7L463.6 393.3L461.7 394.5z" fill="#0042dd" stroke="#0042dd"/><path d="M571.4 276.1L574.0 276.1L575.3 279.1L572.7 279.1z" fill="#9a9000" stroke="#9a9000"/><path d="M471.5 385.2L473.5 383.4L475.4 380.4L473.4 382.3z" fill="#0390f7" stroke="#0390f7"/><path d="M533.6 279.7L536.1 276.5L537.7 277.6L535.3 280.7z" fill="#5c5800" stroke="#5c5800"/><path d="M550.1 274.3L552.7 271.8L554.2 274.3L551.6 276.7z" fill="#736300" stroke="#736300"/><path d="M580.4 280.5L582.9 282.0L584.1 284.9L581.5 283.5z" fill="#a7b100" stroke="#a7b100"/><path d="M504.1 310.0L506.3 307.3L508.1 303.8L505.9 306.5z" fill="#62fb06" stroke="#62fb06"/><path d="M537.7 277.6L540.2 274.5L541.9 275.9L539.4 279.0z" fill="#625900" stroke="#625900"/><path d="M546.0 274.8L548.6 272.1L550.1 274.3L547.6 277.0z" fill="#6e5e00" stroke="#6e5e00"/><path d="M484.5 360.9L486.6 358.7L488.4 354.0L486.3 356.3z" fill="#10fdd0" stroke="#10fdd0"/><path d="M482.7 365.4L484.8 363.2L486.6 358.7L484.5 360.9z" fill="#0efde9" stroke="#0efde9"/><path d="M486.3 356.3L488.4 354.0L490.2 349.2L488.1 351.5z" fill="#12fdb6" stroke="#12fdb6"/><path d="M541.9 275.9L544.4 273.0L546.0 274.8L543.5 277.7z" fill="#685b00" stroke="#685b00"/><path d="M488.1 351.5L490.2 349.2L491.9 344.3L489.8 346.6z" fill="#13fd9b" stroke="#13fd9b"/><path d="M480.9 369.6L483.0 367.4L484.8 363.2L482.7 365.4z" fill="#0cf8fc" stroke="#0cf8fc"/><path d="M502.3 313.8L504.5 311.2L506.3 307.3L504.1 310.0z" fill="#51fc08" stroke="#51fc08"/><path d="M523.5 285.7L525.9 282.5L527.7 282.2L525.3 285.4z" fill="#444a00" stroke="#444a00"/><path d="M463.6 393.3L465.6 391.7L467.6 390.0L465.7 391.5z" fill="#005ae7" stroke="#005ae7"/><path d="M489.8 346.6L491.9 344.3L493.7 339.3L491.6 341.7z" fill="#14fc80" stroke="#14fc80"/><path d="M511.7 297.9L514.0 295.0L515.8 292.8L513.5 295.7z" fill="#233600" stroke="#233600"/><path d="M560.9 273.1L563.5 271.7L564.9 274.6L562.3 275.9z" fill="#826d00" stroke="#826d00"/><path d="M469.6 387.8L471.5 386.0L473.5 383.4L471.5 385.2z" fill="#0283f3" stroke="#0283f3"/><path d="M491.6 341.7L493.7 339.3L495.5 334.3L493.4 336.7z" fill="#14fc64" stroke="#14fc64"/><path d="M479.1 373.5L481.1 371.4L483.0 367.4L480.9 369.6z" fill="#0ae1fc" stroke="#0ae1fc"/><path d="M500.5 318.0L502.7 315.4L504.5 311.2L502.3 313.8z" fill="#3dfc0b" stroke="#3dfc0b"/><path d="M604.3 312.9L606.5 317.5L607.5 320.1L605.2 315.5z" fill="#21cf00" stroke="#21cf00"/><path d="M493.4 336.7L495.5 334.3L497.3 329.4L495.1 331.8z" fill="#13fd48" stroke="#13fd48"/><path d="M582.9 282.0L585.4 283.9L586.5 286.8L584.1 284.9z" fill="#a8b700" stroke="#a8b700"/><path d="M498.7 322.4L500.9 319.8L502.7 315.4L500.5 318.0z" fill="#28fc0e" stroke="#28fc0e"/><path d="M495.1 331.8L497.3 329.4L499.1 324.5L496.9 327.0z" fill="#12fd2c" stroke="#12fd2c"/><path d="M517.6 291.0L520.0 287.9L521.8 286.6L519.4 289.7z" fill="#333e00" stroke="#333e00"/><path d="M496.9 327.0L499.1 324.5L500.9 319.8L498.7 322.4z" fill="#11fd10" stroke="#11fd10"/><path d="M574.0 276.1L576.6 276.6L577.8 279.6L575.3 279.1z" fill="#a19500" stroke="#a19500"/><path d="M477.3 377.1L479.3 375.0L481.1 371.4L479.1 373.5z" fill="#07cdfb" stroke="#07cdfb"/><path d="M602.0 308.3L604.3 312.9L605.2 315.5L603.0 311.0z" fill="#39cf00" stroke="#39cf00"/><path d="M567.5 273.6L570.1 273.1L571.4 276.1L568.8 276.6z" fill="#917b00" stroke="#917b00"/><path d="M457.5 396.9L459.4 395.6L461.6 394.7L459.7 395.9z" fill="#00184c" stroke="#00184c"/><path d="M585.4 283.9L587.9 286.3L589.0 289.2L586.5 286.8z" fill="#a5bd00" stroke="#a5bd00"/><path d="M527.7 282.2L530.1 279.0L531.9 279.1L529.4 282.3z" fill="#504e00" stroke="#504e00"/><path d="M509.9 300.7L512.2 297.7L514.0 295.0L511.7 297.9z" fill="#97f601" stroke="#97f601"/><path d="M599.7 303.9L602.0 308.3L603.0 311.0L600.7 306.7z" fill="#4fce00" stroke="#4fce00"/><path d="M556.8 272.2L559.4 270.4L560.9 273.1L558.3 274.8z" fill="#7c6300" stroke="#7c6300"/><path d="M475.4 380.4L477.4 378.4L479.3 375.0L477.3 377.1z" fill="#04baf9" stroke="#04baf9"/><path d="M467.6 390.0L469.5 388.2L471.5 386.0L469.6 387.8z" fill="#0178ed" stroke="#0178ed"/><path d="M587.9 286.3L590.3 289.1L591.4 292.0L589.0 289.2z" fill="#9fc100" stroke="#9fc100"/><path d="M597.4 299.8L599.7 303.9L600.7 306.7L598.5 302.6z" fill="#64cd00" stroke="#64cd00"/><path d="M461.6 394.7L463.5 393.1L465.6 391.7L463.6 393.3z" fill="#001a44" stroke="#001a44"/><path d="M590.3 289.1L592.7 292.3L593.8 295.2L591.4 292.0z" fill="#95c500" stroke="#95c500"/><path d="M595.1 295.9L597.4 299.8L598.5 302.6L596.1 298.7z" fill="#77cb00" stroke="#77cb00"/><path d="M592.7 292.3L595.1 295.9L596.1 298.7L593.8 295.2z" fill="#88c800" stroke="#88c800"/><path d="M531.9 279.1L534.4 275.9L536.1 276.5L533.6 279.7z" fill="#564e00" stroke="#564e00"/><path d="M508.1 303.8L510.4 300.9L512.2 297.7L509.9 300.7z" fill="#8cf903" stroke="#8cf903"/><path d="M515.8 292.8L518.2 289.7L520.0 287.9L517.6 291.0z" fill="#2e3a00" stroke="#2e3a00"/><path d="M521.8 286.6L524.2 283.3L525.9 282.5L523.5 285.7z" fill="#3f4400" stroke="#3f4400"/><path d="M576.6 276.6L579.1 277.5L580.4 280.5L577.8 279.6z" fill="#a99c00" stroke="#a99c00"/><path d="M552.7 271.8L555.3 269.7L556.8 272.2L554.2 274.3z" fill="#765b00" stroke="#765b00"/><path d="M473.5 383.4L475.5 381.3L477.4 378.4L475.4 380.4z" fill="#02aaf6" stroke="#02aaf6"/><path d="M563.5 271.7L566.1 270.7L567.5 273.6L564.9 274.6z" fill="#886a00" stroke="#886a00"/><path d="M536.1 276.5L538.6 273.4L540.2 274.5L537.7 277.6z" fill="#5c4e00" stroke="#5c4e00"/><path d="M548.6 272.1L551.2 269.6L552.7 271.8L550.1 274.3z" fill="#705500" stroke="#705500"/><path d="M506.3 307.3L508.6 304.4L510.4 300.9L508.1 303.8z" fill="#7dfa05" stroke="#7dfa05"/><path d="M570.1 273.1L572.7 273.1L574.0 276.1L571.4 276.1z" fill="#997e00" stroke="#997e00"/><path d="M540.2 274.5L542.8 271.5L544.4 273.0L541.9 275.9z" fill="#634f00" stroke="#634f00"/><path d="M486.6 358.7L488.7 356.3L490.5 351.6L488.4 354.0z" fill="#0efdb5" stroke="#0efdb5"/><path d="M544.4 273.0L547.0 270.2L548.6 272.1L546.0 274.8z" fill="#695100" stroke="#695100"/><path d="M484.8 363.2L486.8 360.8L488.7 356.3L486.6 358.7z" fill="#0cfcce" stroke="#0cfcce"/><path d="M488.4 354.0L490.5 351.6L492.3 346.7L490.2 349.2z" fill="#10fd9b" stroke="#10fd9b"/><path d="M465.6 391.7L467.5 389.9L469.5 388.2L467.6 390.0z" fill="#001e3e" stroke="#001e3e"/><path d="M490.2 349.2L492.3 346.7L494.1 341.7L491.9 344.3z" fill="#11fd80" stroke="#11fd80"/><path d="M483.0 367.4L485.0 365.1L486.8 360.8L484.8 363.2z" fill="#0afce5" stroke="#0afce5"/><path d="M504.5 311.2L506.7 308.4L508.6 304.4L506.3 307.3z" fill="#6bfb07" stroke="#6bfb07"/><path d="M579.1 277.5L581.7 279.0L582.9 282.0L580.4 280.5z" fill="#b1a500" stroke="#b1a500"/><path d="M491.9 344.3L494.1 341.7L495.9 336.7L493.7 339.3z" fill="#11fd64" stroke="#11fd64"/><path d="M471.5 386.0L473.5 383.9L475.5 381.3L473.5 383.4z" fill="#019cf2" stroke="#019cf2"/><path d="M514.0 295.0L516.3 291.9L518.2 289.7L515.8 292.8z" fill="#2a3600" stroke="#2a3600"/><path d="M525.9 282.5L528.4 279.3L530.1 279.0L527.7 282.2z" fill="#4a4600" stroke="#4a4600"/><path d="M493.7 339.3L495.9 336.7L497.7 331.7L495.5 334.3z" fill="#11fd48" stroke="#11fd48"/><path d="M481.1 371.4L483.2 369.1L485.0 365.1L483.0 367.4z" fill="#08fcfb" stroke="#08fcfb"/><path d="M502.7 315.4L504.9 312.6L506.7 308.4L504.5 311.2z" fill="#57fc09" stroke="#57fc09"/><path d="M495.5 334.3L497.7 331.7L499.5 326.7L497.3 329.4z" fill="#11fd2b" stroke="#11fd2b"/><path d="M500.9 319.8L503.1 317.1L504.9 312.6L502.7 315.4z" fill="#41fc0c" stroke="#41fc0c"/><path d="M497.3 329.4L499.5 326.7L501.3 321.8L499.1 324.5z" fill="#10fd10" stroke="#10fd10"/><path d="M499.1 324.5L501.3 321.8L503.1 317.1L500.9 319.8z" fill="#29fd0e" stroke="#29fd0e"/><path d="M459.4 395.6L461.4 394.1L463.5 393.1L461.6 394.7z" fill="#001e4b" stroke="#001e4b"/><path d="M559.4 270.4L562.1 268.9L563.5 271.7L560.9 273.1z" fill="#805d00" stroke="#805d00"/><path d="M520.0 287.9L522.4 284.6L524.2 283.3L521.8 286.6z" fill="#3a3e00" stroke="#3a3e00"/><path d="M479.3 375.0L481.3 372.8L483.2 369.1L481.1 371.4z" fill="#06e8fa" stroke="#06e8fa"/><path d="M603.3 310.2L605.6 314.9L606.5 317.5L604.3 312.9z" fill="#3acf00" stroke="#3acf00"/><path d="M581.7 279.0L584.2 280.9L585.4 283.9L582.9 282.0z" fill="#b7b000" stroke="#b7b000"/><path d="M572.7 273.1L575.3 273.5L576.6 276.6L574.0 276.1z" fill="#a18200" stroke="#a18200"/><path d="M512.2 297.7L514.5 294.7L516.3 291.9L514.0 295.0z" fill="#b4f501" stroke="#b4f501"/><path d="M530.1 279.0L532.6 275.7L534.4 275.9L531.9 279.1z" fill="#504500" stroke="#504500"/><path d="M566.1 270.7L568.8 270.2L570.1 273.1L567.5 273.6z" fill="#8f6900" stroke="#8f6900"/><path d="M477.4 378.4L479.4 376.1L481.3 372.8L479.3 375.0z" fill="#04d5f9" stroke="#04d5f9"/><path d="M469.5 388.2L471.5 386.1L473.5 383.9L471.5 386.0z" fill="#0091ed" stroke="#0091ed"/><path d="M601.0 305.6L603.3 310.2L604.3 312.9L602.0 308.3z" fill="#51cf00" stroke="#51cf00"/><path d="M463.5 393.1L465.4 391.3L467.5 389.9L465.6 391.7z" fill="#002144" stroke="#002144"/><path d="M555.3 269.7L558.0 267.8L559.4 270.4L556.8 272.2z" fill="#7a5400" stroke="#7a5400"/><path d="M584.2 280.9L586.7 283.3L587.9 286.3L585.4 283.9z" fill="#bcbd00" stroke="#bcbd00"/><path d="M598.7 301.1L601.0 305.6L602.0 308.3L599.7 303.9z" fill="#68ce00" stroke="#68ce00"/><path d="M534.4 275.9L536.9 272.7L538.6 273.4L536.1 276.5z" fill="#574400" stroke="#574400"/><path d="M510.4 300.9L512.7 297.8L514.5 294.7L512.2 297.7z" fill="#a8f802" stroke="#a8f802"/><path d="M586.7 283.3L589.2 286.1L590.3 289.1L587.9 286.3z" fill="#b6c100" stroke="#b6c100"/><path d="M518.2 289.7L520.5 286.5L522.4 284.6L520.0 287.9z" fill="#353a00" stroke="#353a00"/><path d="M524.2 283.3L526.6 280.1L528.4 279.3L525.9 282.5z" fill="#444000" stroke="#444000"/><path d="M596.4 296.9L598.7 301.1L599.7 303.9L597.4 299.8z" fill="#7dcc00" stroke="#7dcc00"/><path d="M475.5 381.3L477.5 379.1L479.4 376.1L477.4 378.4z" fill="#02c5f6" stroke="#02c5f6"/><path d="M551.2 269.6L553.8 267.4L555.3 269.7L552.7 271.8z" fill="#734d00" stroke="#734d00"/><path d="M589.2 286.1L591.6 289.4L592.7 292.3L590.3 289.1z" fill="#adc500" stroke="#adc500"/><path d="M594.0 293.0L596.4 296.9L597.4 299.8L595.1 295.9z" fill="#90cb00" stroke="#90cb00"/><path d="M591.6 289.4L594.0 293.0L595.1 295.9L592.7 292.3z" fill="#a0c800" stroke="#a0c800"/><path d="M575.3 273.5L577.9 274.5L579.1 277.5L576.6 276.6z" fill="#a98800" stroke="#a98800"/><path d="M538.6 273.4L541.1 270.4L542.8 271.5L540.2 274.5z" fill="#5d4400" stroke="#5d4400"/><path d="M547.0 270.2L549.6 267.7L551.2 269.6L548.6 272.1z" fill="#6b4800" stroke="#6b4800"/><path d="M508.6 304.4L510.8 301.4L512.7 297.8L510.4 300.9z" fill="#99fa04" stroke="#99fa04"/><path d="M542.8 271.5L545.4 268.7L547.0 270.2L544.4 273.0z" fill="#644500" stroke="#644500"/><path d="M562.1 268.9L564.7 267.9L566.1 270.7L563.5 271.7z" fill="#855900" stroke="#855900"/><path d="M467.5 389.9L469.5 387.9L471.5 386.1L469.5 388.2z" fill="#00253e" stroke="#00253e"/><path d="M488.7 356.3L490.8 353.7L492.6 349.0L490.5 351.6z" fill="#0dfd99" stroke="#0dfd99"/><path d="M486.8 360.8L488.9 358.3L490.8 353.7L488.7 356.3z" fill="#0bfcb2" stroke="#0bfcb2"/><path d="M490.5 351.6L492.6 349.0L494.4 344.1L492.3 346.7z" fill="#0efd7e" stroke="#0efd7e"/><path d="M492.3 346.7L494.4 344.1L496.2 339.0L494.1 341.7z" fill="#0ffd63" stroke="#0ffd63"/><path d="M485.0 365.1L487.1 362.6L488.9 358.3L486.8 360.8z" fill="#09fcc9" stroke="#09fcc9"/><path d="M568.8 270.2L571.4 270.2L572.7 273.1L570.1 273.1z" fill="#976b00" stroke="#976b00"/><path d="M506.7 308.4L509.0 305.4L510.8 301.4L508.6 304.4z" fill="#87fb06" stroke="#87fb06"/><path d="M473.5 383.9L475.5 381.7L477.5 379.1L475.5 381.3z" fill="#01b7f2" stroke="#01b7f2"/><path d="M494.1 341.7L496.2 339.0L498.1 334.0L495.9 336.7z" fill="#10fd47" stroke="#10fd47"/><path d="M516.3 291.9L518.7 288.7L520.5 286.5L518.2 289.7z" fill="#303600" stroke="#303600"/><path d="M528.4 279.3L530.9 276.0L532.6 275.7L530.1 279.0z" fill="#4a3e00" stroke="#4a3e00"/><path d="M495.9 336.7L498.1 334.0L499.9 328.9L497.7 331.7z" fill="#10fd2b" stroke="#10fd2b"/><path d="M483.2 369.1L485.2 366.6L487.1 362.6L485.0 365.1z" fill="#07fbde" stroke="#07fbde"/><path d="M504.9 312.6L507.2 309.6L509.0 305.4L506.7 308.4z" fill="#73fc08" stroke="#73fc08"/><path d="M461.4 394.1L463.3 392.3L465.4 391.3L463.5 393.1z" fill="#00254a" stroke="#00254a"/><path d="M497.7 331.7L499.9 328.9L501.7 323.8L499.5 326.7z" fill="#10fd0f" stroke="#10fd0f"/><path d="M577.9 274.5L580.5 276.0L581.7 279.0L579.1 277.5z" fill="#b09000" stroke="#b09000"/><path d="M503.1 317.1L505.3 314.2L507.2 309.6L504.9 312.6z" fill="#5cfc0b" stroke="#5cfc0b"/><path d="M499.5 326.7L501.7 323.8L503.5 318.9L501.3 321.8z" fill="#2bfd0e" stroke="#2bfd0e"/><path d="M501.3 321.8L503.5 318.9L505.3 314.2L503.1 317.1z" fill="#44fd0d" stroke="#44fd0d"/><path d="M522.4 284.6L524.8 281.4L526.6 280.1L524.2 283.3z" fill="#3e3b00" stroke="#3e3b00"/><path d="M481.3 372.8L483.4 370.3L485.2 366.6L483.2 369.1z" fill="#05faf0" stroke="#05faf0"/><path d="M558.0 267.8L560.6 266.4L562.1 268.9L559.4 270.4z" fill="#7e4e00" stroke="#7e4e00"/><path d="M532.6 275.7L535.1 272.5L536.9 272.7L534.4 275.9z" fill="#503c00" stroke="#503c00"/><path d="M514.5 294.7L516.9 291.5L518.7 288.7L516.3 291.9z" fill="#d1f501" stroke="#d1f501"/><path d="M471.5 386.1L473.5 383.9L475.5 381.7L473.5 383.9z" fill="#002939" stroke="#002939"/><path d="M602.3 307.5L604.6 312.2L605.6 314.9L603.3 310.2z" fill="#52cf00" stroke="#52cf00"/><path d="M580.5 276.0L583.0 277.9L584.2 280.9L581.7 279.0z" fill="#b79a00" stroke="#b79a00"/><path d="M479.4 376.1L481.4 373.7L483.4 370.3L481.3 372.8z" fill="#03f1f8" stroke="#03f1f8"/><path d="M465.4 391.3L467.4 389.3L469.5 387.9L467.5 389.9z" fill="#002843" stroke="#002843"/><path d="M571.4 270.2L574.0 270.6L575.3 273.5L572.7 273.1z" fill="#9f6e00" stroke="#9f6e00"/><path d="M564.7 267.9L567.4 267.4L568.8 270.2L566.1 270.7z" fill="#8d5800" stroke="#8d5800"/><path d="M553.8 267.4L556.5 265.5L558.0 267.8L555.3 269.7z" fill="#764600" stroke="#764600"/><path d="M600.0 302.8L602.3 307.5L603.3 310.2L601.0 305.6z" fill="#6ace00" stroke="#6ace00"/><path d="M536.9 272.7L539.4 269.7L541.1 270.4L538.6 273.4z" fill="#573b00" stroke="#573b00"/><path d="M583.0 277.9L585.5 280.3L586.7 283.3L584.2 280.9z" fill="#bca700" stroke="#bca700"/><path d="M512.7 297.8L515.0 294.7L516.9 291.5L514.5 294.7z" fill="#c5f802" stroke="#c5f802"/><path d="M520.5 286.5L523.0 283.2L524.8 281.4L522.4 284.6z" fill="#3a3700" stroke="#3a3700"/><path d="M526.6 280.1L529.1 276.8L530.9 276.0L528.4 279.3z" fill="#443800" stroke="#443800"/><path d="M477.5 379.1L479.5 376.7L481.4 373.7L479.4 376.1z" fill="#02e1f6" stroke="#02e1f6"/><path d="M549.6 267.7L552.3 265.5L553.8 267.4L551.2 269.6z" fill="#6e4000" stroke="#6e4000"/><path d="M597.6 298.3L600.0 302.8L601.0 305.6L598.7 301.1z" fill="#80ce00" stroke="#80ce00"/><path d="M541.1 270.4L543.7 267.5L545.4 268.7L542.8 271.5z" fill="#5f3b00" stroke="#5f3b00"/><path d="M545.4 268.7L548.0 266.1L549.6 267.7L547.0 270.2z" fill="#663d00" stroke="#663d00"/><path d="M585.5 280.3L588.0 283.2L589.2 286.1L586.7 283.3z" fill="#c1b500" stroke="#c1b500"/><path d="M595.3 294.1L597.6 298.3L598.7 301.1L596.4 296.9z" fill="#95cc00" stroke="#95cc00"/><path d="M510.8 301.4L513.2 298.3L515.0 294.7L512.7 297.8z" fill="#b6fa04" stroke="#b6fa04"/><path d="M588.0 283.2L590.5 286.5L591.6 289.4L589.2 286.1z" fill="#c4c500" stroke="#c4c500"/><path d="M469.5 387.9L471.4 385.7L473.5 383.9L471.5 386.1z" fill="#002c3e" stroke="#002c3e"/><path d="M592.9 290.1L595.3 294.1L596.4 296.9L594.0 293.0z" fill="#a7ca00" stroke="#a7ca00"/><path d="M590.5 286.5L592.9 290.1L594.0 293.0L591.6 289.4z" fill="#b7c800" stroke="#b7c800"/><path d="M574.0 270.6L576.6 271.6L577.9 274.5L575.3 273.5z" fill="#a77300" stroke="#a77300"/><path d="M490.8 353.7L492.9 351.1L494.8 346.3L492.6 349.0z" fill="#0cfd7c" stroke="#0cfd7c"/><path d="M488.9 358.3L491.1 355.6L492.9 351.1L490.8 353.7z" fill="#0bfc95" stroke="#0bfc95"/><path d="M492.6 349.0L494.8 346.3L496.6 341.3L494.4 344.1z" fill="#0efd62" stroke="#0efd62"/><path d="M560.6 266.4L563.3 265.4L564.7 267.9L562.1 268.9z" fill="#834900" stroke="#834900"/><path d="M494.4 344.1L496.6 341.3L498.4 336.2L496.2 339.0z" fill="#0efd47" stroke="#0efd47"/><path d="M487.1 362.6L489.2 360.0L491.1 355.6L488.9 358.3z" fill="#09fcac" stroke="#09fcac"/><path d="M509.0 305.4L511.3 302.3L513.2 298.3L510.8 301.4z" fill="#a4fb06" stroke="#a4fb06"/><path d="M475.5 381.7L477.5 379.3L479.5 376.7L477.5 379.1z" fill="#01d3f2" stroke="#01d3f2"/><path d="M496.2 339.0L498.4 336.2L500.3 331.1L498.1 334.0z" fill="#0ffd2b" stroke="#0ffd2b"/><path d="M463.3 392.3L465.2 390.3L467.4 389.3L465.4 391.3z" fill="#002d4a" stroke="#002d4a"/><path d="M530.9 276.0L533.4 272.8L535.1 272.5L532.6 275.7z" fill="#4a3500" stroke="#4a3500"/><path d="M518.7 288.7L521.1 285.5L523.0 283.2L520.5 286.5z" fill="#363500" stroke="#363500"/><path d="M498.1 334.0L500.3 331.1L502.1 326.0L499.9 328.9z" fill="#10fd0f" stroke="#10fd0f"/><path d="M567.4 267.4L570.0 267.4L571.4 270.2L568.8 270.2z" fill="#955800" stroke="#955800"/><path d="M485.2 366.6L487.3 364.1L489.2 360.0L487.1 362.6z" fill="#07fbc1" stroke="#07fbc1"/><path d="M507.2 309.6L509.5 306.6L511.3 302.3L509.0 305.4z" fill="#90fc08" stroke="#90fc08"/><path d="M499.9 328.9L502.1 326.0L503.9 320.9L501.7 323.8z" fill="#2cfd0e" stroke="#2cfd0e"/><path d="M505.3 314.2L507.6 311.1L509.5 306.6L507.2 309.6z" fill="#79fc0a" stroke="#79fc0a"/><path d="M501.7 323.8L503.9 320.9L505.8 315.9L503.5 318.9z" fill="#47fd0d" stroke="#47fd0d"/><path d="M503.5 318.9L505.8 315.9L507.6 311.1L505.3 314.2z" fill="#60fd0c" stroke="#60fd0c"/><path d="M524.8 281.4L527.3 278.1L529.1 276.8L526.6 280.1z" fill="#3e3300" stroke="#3e3300"/><path d="M483.4 370.3L485.5 367.8L487.3 364.1L485.2 366.6z" fill="#05fad3" stroke="#05fad3"/><path d="M576.6 271.6L579.2 273.0L580.5 276.0L577.9 274.5z" fill="#af7b00" stroke="#af7b00"/><path d="M556.5 265.5L559.1 264.1L560.6 266.4L558.0 267.8z" fill="#7a4000" stroke="#7a4000"/><path d="M535.1 272.5L537.7 269.5L539.4 269.7L536.9 272.7z" fill="#513300" stroke="#513300"/><path d="M516.9 291.5L519.3 288.2L521.1 285.5L518.7 288.7z" fill="#eef501" stroke="#eef501"/><path d="M473.5 383.9L475.5 381.5L477.5 379.3L475.5 381.7z" fill="#003039" stroke="#003039"/><path d="M467.4 389.3L469.3 387.1L471.4 385.7L469.5 387.9z" fill="#002f43" stroke="#002f43"/><path d="M481.4 373.7L483.5 371.2L485.5 367.8L483.4 370.3z" fill="#03f8e2" stroke="#03f8e2"/><path d="M552.3 265.5L554.9 263.6L556.5 265.5L553.8 267.4z" fill="#713900" stroke="#713900"/><path d="M601.2 304.8L603.6 309.7L604.6 312.2L602.3 307.5z" fill="#6acf00" stroke="#6acf00"/><path d="M579.2 273.0L581.8 275.0L583.0 277.9L580.5 276.0z" fill="#b68400" stroke="#b68400"/><path d="M539.4 269.7L542.0 266.8L543.7 267.5L541.1 270.4z" fill="#583200" stroke="#583200"/><path d="M570.0 267.4L572.7 267.8L574.0 270.6L571.4 270.2z" fill="#9d5b00" stroke="#9d5b00"/><path d="M563.3 265.4L566.0 264.8L567.4 267.4L564.7 267.9z" fill="#894700" stroke="#894700"/><path d="M548.0 266.1L550.7 263.9L552.3 265.5L549.6 267.7z" fill="#693500" stroke="#693500"/><path d="M543.7 267.5L546.4 265.0L548.0 266.1L545.4 268.7z" fill="#603300" stroke="#603300"/><path d="M515.0 294.7L517.4 291.5L519.3 288.2L516.9 291.5z" fill="#e3f802" stroke="#e3f802"/><path d="M529.1 276.8L531.6 273.6L533.4 272.8L530.9 276.0z" fill="#443000" stroke="#443000"/><path d="M523.0 283.2L525.4 279.9L527.3 278.1L524.8 281.4z" fill="#3a3000" stroke="#3a3000"/><path d="M598.9 300.1L601.2 304.8L602.3 307.5L600.0 302.8z" fill="#81ce00" stroke="#81ce00"/><path d="M479.5 376.7L481.6 374.2L483.5 371.2L481.4 373.7z" fill="#02f6ee" stroke="#02f6ee"/><path d="M581.8 275.0L584.3 277.4L585.5 280.3L583.0 277.9z" fill="#bc9000" stroke="#bc9000"/><path d="M596.6 295.6L598.9 300.1L600.0 302.8L597.6 298.3z" fill="#98cd00" stroke="#98cd00"/><path d="M471.4 385.7L473.5 383.4L475.5 381.5L473.5 383.9z" fill="#00333e" stroke="#00333e"/><path d="M513.2 298.3L515.6 295.1L517.4 291.5L515.0 294.7z" fill="#d4fa04" stroke="#d4fa04"/><path d="M584.3 277.4L586.8 280.3L588.0 283.2L585.5 280.3z" fill="#c09f00" stroke="#c09f00"/><path d="M594.2 291.3L596.6 295.6L597.6 298.3L595.3 294.1z" fill="#accc00" stroke="#accc00"/><path d="M492.9 351.1L495.1 348.3L497.0 343.5L494.8 346.3z" fill="#0cfd5f" stroke="#0cfd5f"/><path d="M491.1 355.6L493.3 353.0L495.1 348.3L492.9 351.1z" fill="#0bfc78" stroke="#0bfc78"/><path d="M494.8 346.3L497.0 343.5L498.8 338.5L496.6 341.3z" fill="#0efd45" stroke="#0efd45"/><path d="M559.1 264.1L561.8 263.0L563.3 265.4L560.6 266.4z" fill="#7f3b00" stroke="#7f3b00"/><path d="M586.8 280.3L589.3 283.6L590.5 286.5L588.0 283.2z" fill="#c4af00" stroke="#c4af00"/><path d="M496.6 341.3L498.8 338.5L500.7 333.4L498.4 336.2z" fill="#0ffd2a" stroke="#0ffd2a"/><path d="M591.8 287.3L594.2 291.3L595.3 294.1L592.9 290.1z" fill="#beca00" stroke="#beca00"/><path d="M572.7 267.8L575.3 268.8L576.6 271.6L574.0 270.6z" fill="#a66000" stroke="#a66000"/><path d="M489.2 360.0L491.4 357.4L493.3 353.0L491.1 355.6z" fill="#09fc8f" stroke="#09fc8f"/><path d="M465.2 390.3L467.2 388.1L469.3 387.1L467.4 389.3z" fill="#003549" stroke="#003549"/><path d="M511.3 302.3L513.7 299.1L515.6 295.1L513.2 298.3z" fill="#c2fb06" stroke="#c2fb06"/><path d="M589.3 283.6L591.8 287.3L592.9 290.1L590.5 286.5z" fill="#c7c100" stroke="#c7c100"/><path d="M477.5 379.3L479.6 376.9L481.6 374.2L479.5 376.7z" fill="#01eff2" stroke="#01eff2"/><path d="M533.4 272.8L535.9 269.7L537.7 269.5L535.1 272.5z" fill="#4a2d00" stroke="#4a2d00"/><path d="M498.4 336.2L500.7 333.4L502.5 328.2L500.3 331.1z" fill="#10fd0f" stroke="#10fd0f"/><path d="M521.1 285.5L523.6 282.2L525.4 279.9L523.0 283.2z" fill="#362f00" stroke="#362f00"/><path d="M500.3 331.1L502.5 328.2L504.4 323.0L502.1 326.0z" fill="#2cfd0f" stroke="#2cfd0f"/><path d="M487.3 364.1L489.5 361.5L491.4 357.4L489.2 360.0z" fill="#07fba3" stroke="#07fba3"/><path d="M509.5 306.6L511.8 303.4L513.7 299.1L511.3 302.3z" fill="#adfc08" stroke="#adfc08"/><path d="M502.1 326.0L504.4 323.0L506.2 317.9L503.9 320.9z" fill="#48fd0f" stroke="#48fd0f"/><path d="M566.0 264.8L568.6 264.7L570.0 267.4L567.4 267.4z" fill="#924700" stroke="#924700"/><path d="M507.6 311.1L510.0 308.1L511.8 303.4L509.5 306.6z" fill="#96fc0a" stroke="#96fc0a"/><path d="M503.9 320.9L506.2 317.9L508.1 312.9L505.8 315.9z" fill="#63fd0e" stroke="#63fd0e"/><path d="M505.8 315.9L508.1 312.9L510.0 308.1L507.6 311.1z" fill="#7dfd0c" stroke="#7dfd0c"/><path d="M527.3 278.1L529.8 274.9L531.6 273.6L529.1 276.8z" fill="#3e2c00" stroke="#3e2c00"/><path d="M485.5 367.8L487.6 365.2L489.5 361.5L487.3 364.1z" fill="#05fab6" stroke="#05fab6"/><path d="M554.9 263.6L557.6 262.1L559.1 264.1L556.5 265.5z" fill="#763300" stroke="#763300"/><path d="M537.7 269.5L540.3 266.6L542.0 266.8L539.4 269.7z" fill="#512b00" stroke="#512b00"/><path d="M575.3 268.8L577.9 270.2L579.2 273.0L576.6 271.6z" fill="#ad6600" stroke="#ad6600"/><path d="M469.3 387.1L471.3 384.7L473.5 383.4L471.4 385.7z" fill="#003743" stroke="#003743"/><path d="M519.3 288.2L521.7 285.0L523.6 282.2L521.1 285.5z" fill="#f5e001" stroke="#f5e001"/><path d="M475.5 381.5L477.6 379.1L479.6 376.9L477.5 379.3z" fill="#003739" stroke="#003739"/><path d="M483.5 371.2L485.7 368.7L487.6 365.2L485.5 367.8z" fill="#03f8c5" stroke="#03f8c5"/><path d="M550.7 263.9L553.3 261.9L554.9 263.6L552.3 265.5z" fill="#6c2e00" stroke="#6c2e00"/><path d="M542.0 266.8L544.7 264.2L546.4 265.0L543.7 267.5z" fill="#5a2a00" stroke="#5a2a00"/><path d="M546.4 265.0L549.0 262.7L550.7 263.9L548.0 266.1z" fill="#632b00" stroke="#632b00"/><path d="M561.8 263.0L564.5 262.5L566.0 264.8L563.3 265.4z" fill="#853800" stroke="#853800"/><path d="M600.2 302.3L602.5 307.2L603.6 309.7L601.2 304.8z" fill="#80ce00" stroke="#80ce00"/><path d="M577.9 270.2L580.5 272.2L581.8 275.0L579.2 273.0z" fill="#b46f00" stroke="#b46f00"/><path d="M531.6 273.6L534.2 270.5L535.9 269.7L533.4 272.8z" fill="#442800" stroke="#442800"/><path d="M568.6 264.7L571.3 265.2L572.7 267.8L570.0 267.4z" fill="#9a4900" stroke="#9a4900"/><path d="M517.4 291.5L519.9 288.2L521.7 285.0L519.3 288.2z" fill="#f8f002" stroke="#f8f002"/><path d="M525.4 279.9L527.9 276.7L529.8 274.9L527.3 278.1z" fill="#392900" stroke="#392900"/><path d="M481.6 374.2L483.7 371.7L485.7 368.7L483.5 371.2z" fill="#02f6d0" stroke="#02f6d0"/><path d="M597.8 297.6L600.2 302.3L601.2 304.8L598.9 300.1z" fill="#98cd00" stroke="#98cd00"/><path d="M580.5 272.2L583.1 274.6L584.3 277.4L581.8 275.0z" fill="#ba7b00" stroke="#ba7b00"/><path d="M473.5 383.4L475.5 380.9L477.6 379.1L475.5 381.5z" fill="#003a3e" stroke="#003a3e"/><path d="M515.6 295.1L518.0 291.9L519.9 288.2L517.4 291.5z" fill="#f1fa04" stroke="#f1fa04"/><path d="M595.4 293.0L597.8 297.6L598.9 300.1L596.6 295.6z" fill="#aecc00" stroke="#aecc00"/><path d="M495.1 348.3L497.4 345.6L499.2 340.7L497.0 343.5z" fill="#0dfd43" stroke="#0dfd43"/><path d="M493.3 353.0L495.5 350.3L497.4 345.6L495.1 348.3z" fill="#0bfc5b" stroke="#0bfc5b"/><path d="M497.0 343.5L499.2 340.7L501.1 335.7L498.8 338.5z" fill="#0ffd29" stroke="#0ffd29"/><path d="M557.6 262.1L560.3 261.0L561.8 263.0L559.1 264.1z" fill="#7b2e00" stroke="#7b2e00"/><path d="M535.9 269.7L538.5 266.8L540.3 266.6L537.7 269.5z" fill="#4b2500" stroke="#4b2500"/><path d="M498.8 338.5L501.1 335.7L503.0 330.5L500.7 333.4z" fill="#10fd10" stroke="#10fd10"/><path d="M583.1 274.6L585.6 277.6L586.8 280.3L584.3 277.4z" fill="#bf8800" stroke="#bf8800"/><path d="M467.2 388.1L469.2 385.7L471.3 384.7L469.3 387.1z" fill="#003d49" stroke="#003d49"/><path d="M491.4 357.4L493.6 354.7L495.5 350.3L493.3 353.0z" fill="#09fc72" stroke="#09fc72"/><path d="M593.0 288.7L595.4 293.0L596.6 295.6L594.2 291.3z" fill="#c2cb00" stroke="#c2cb00"/><path d="M513.7 299.1L516.1 295.9L518.0 291.9L515.6 295.1z" fill="#dffb06" stroke="#dffb06"/><path d="M479.6 376.9L481.7 374.4L483.7 371.7L481.6 374.2z" fill="#01f2d7" stroke="#01f2d7"/><path d="M500.7 333.4L503.0 330.5L504.8 325.3L502.5 328.2z" fill="#2dfd10" stroke="#2dfd10"/><path d="M571.3 265.2L574.0 266.1L575.3 268.8L572.7 267.8z" fill="#a34d00" stroke="#a34d00"/><path d="M523.6 282.2L526.1 279.0L527.9 276.7L525.4 279.9z" fill="#362800" stroke="#362800"/><path d="M585.6 277.6L588.1 280.9L589.3 283.6L586.8 280.3z" fill="#c39800" stroke="#c39800"/><path d="M590.6 284.6L593.0 288.7L594.2 291.3L591.8 287.3z" fill="#c9be00" stroke="#c9be00"/><path d="M502.5 328.2L504.8 325.3L506.7 320.1L504.4 323.0z" fill="#49fd10" stroke="#49fd10"/><path d="M489.5 361.5L491.7 358.9L493.6 354.7L491.4 357.4z" fill="#07fb87" stroke="#07fb87"/><path d="M588.1 280.9L590.6 284.6L591.8 287.3L589.3 283.6z" fill="#c6aa00" stroke="#c6aa00"/><path d="M511.8 303.4L514.2 300.3L516.1 295.9L513.7 299.1z" fill="#cafc09" stroke="#cafc09"/><path d="M504.4 323.0L506.7 320.1L508.6 314.9L506.2 317.9z" fill="#65fd10" stroke="#65fd10"/><path d="M510.0 308.1L512.3 305.0L514.2 300.3L511.8 303.4z" fill="#b3fc0b" stroke="#b3fc0b"/><path d="M506.2 317.9L508.6 314.9L510.5 309.9L508.1 312.9z" fill="#80fd0e" stroke="#80fd0e"/><path d="M564.5 262.5L567.2 262.4L568.6 264.7L566.0 264.8z" fill="#8d3700" stroke="#8d3700"/><path d="M529.8 274.9L532.3 271.8L534.2 270.5L531.6 273.6z" fill="#3e2500" stroke="#3e2500"/><path d="M508.1 312.9L510.5 309.9L512.3 305.0L510.0 308.1z" fill="#9afd0d" stroke="#9afd0d"/><path d="M553.3 261.9L556.0 260.4L557.6 262.1L554.9 263.6z" fill="#702800" stroke="#702800"/><path d="M540.3 266.6L542.9 264.0L544.7 264.2L542.0 266.8z" fill="#532300" stroke="#532300"/><path d="M487.6 365.2L489.8 362.7L491.7 358.9L489.5 361.5z" fill="#05fa99" stroke="#05fa99"/><path d="M549.0 262.7L551.7 260.7L553.3 261.9L550.7 263.9z" fill="#662400" stroke="#662400"/><path d="M544.7 264.2L547.3 261.9L549.0 262.7L546.4 265.0z" fill="#5c2300" stroke="#5c2300"/><path d="M521.7 285.0L524.2 281.8L526.1 279.0L523.6 282.2z" fill="#f6c301" stroke="#f6c301"/><path d="M471.3 384.7L473.4 382.3L475.5 380.9L473.5 383.4z" fill="#003f43" stroke="#003f43"/><path d="M574.0 266.1L576.6 267.6L577.9 270.2L575.3 268.8z" fill="#ab5300" stroke="#ab5300"/><path d="M477.6 379.1L479.7 376.6L481.7 374.4L479.6 376.9z" fill="#003935" stroke="#003935"/><path d="M485.7 368.7L487.8 366.1L489.8 362.7L487.6 365.2z" fill="#03f8a8" stroke="#03f8a8"/><path d="M534.2 270.5L536.8 267.6L538.5 266.8L535.9 269.7z" fill="#442100" stroke="#442100"/><path d="M560.3 261.0L563.0 260.4L564.5 262.5L561.8 263.0z" fill="#802b00" stroke="#802b00"/><path d="M527.9 276.7L530.5 273.6L532.3 271.8L529.8 274.9z" fill="#392300" stroke="#392300"/><path d="M519.9 288.2L522.3 285.1L524.2 281.8L521.7 285.0z" fill="#f9d403" stroke="#f9d403"/><path d="M567.2 262.4L569.9 262.8L571.3 265.2L568.6 264.7z" fill="#963800" stroke="#963800"/><path d="M599.0 300.0L601.4 304.9L602.5 307.2L600.2 302.3z" fill="#3b5100" stroke="#3b5100"/><path d="M576.6 267.6L579.2 269.6L580.5 272.2L577.9 270.2z" fill="#b25b00" stroke="#b25b00"/><path d="M483.7 371.7L485.8 369.2L487.8 366.1L485.7 368.7z" fill="#02f6b3" stroke="#02f6b3"/><path d="M596.7 295.2L599.0 300.0L600.2 302.3L597.8 297.6z" fill="#accc00" stroke="#accc00"/><path d="M518.0 291.9L520.4 288.8L522.3 285.1L519.9 288.2z" fill="#fae605" stroke="#fae605"/><path d="M538.5 266.8L541.2 264.2L542.9 264.0L540.3 266.6z" fill="#4b1e00" stroke="#4b1e00"/><path d="M475.5 380.9L477.6 378.4L479.7 376.6L477.6 379.1z" fill="#003e3a" stroke="#003e3a"/><path d="M556.0 260.4L558.7 259.3L560.3 261.0L557.6 262.1z" fill="#752300" stroke="#752300"/><path d="M579.2 269.6L581.8 272.1L583.1 274.6L580.5 272.2z" fill="#b96600" stroke="#b96600"/><path d="M497.4 345.6L499.6 343.0L501.5 338.1L499.2 340.7z" fill="#0ffd29" stroke="#0ffd29"/><path d="M495.5 350.3L497.7 347.7L499.6 343.0L497.4 345.6z" fill="#0dfc41" stroke="#0dfc41"/><path d="M499.2 340.7L501.5 338.1L503.4 333.0L501.1 335.7z" fill="#11fd10" stroke="#11fd10"/><path d="M594.3 290.6L596.7 295.2L597.8 297.6L595.4 293.0z" fill="#c2cb00" stroke="#c2cb00"/><path d="M501.1 335.7L503.4 333.0L505.3 327.8L503.0 330.5z" fill="#2efd11" stroke="#2efd11"/><path d="M493.6 354.7L495.8 352.2L497.7 347.7L495.5 350.3z" fill="#0bfc57" stroke="#0bfc57"/><path d="M469.2 385.7L471.2 383.3L473.4 382.3L471.3 384.7z" fill="#004649" stroke="#004649"/><path d="M516.1 295.9L518.6 292.9L520.4 288.8L518.0 291.9z" fill="#fbfb07" stroke="#fbfb07"/><path d="M481.7 374.4L483.8 371.9L485.8 369.2L483.7 371.7z" fill="#01f2bb" stroke="#01f2bb"/><path d="M503.0 330.5L505.3 327.8L507.2 322.5L504.8 325.3z" fill="#4afd12" stroke="#4afd12"/><path d="M526.1 279.0L528.6 276.0L530.5 273.6L527.9 276.7z" fill="#f29b01" stroke="#f29b01"/><path d="M581.8 272.1L584.3 275.0L585.6 277.6L583.1 274.6z" fill="#be7300" stroke="#be7300"/><path d="M542.9 264.0L545.6 261.6L547.3 261.9L544.7 264.2z" fill="#541d00" stroke="#541d00"/><path d="M551.7 260.7L554.4 259.2L556.0 260.4L553.3 261.9z" fill="#691e00" stroke="#691e00"/><path d="M591.8 286.2L594.3 290.6L595.4 293.0L593.0 288.7z" fill="#c9bd00" stroke="#c9bd00"/><path d="M504.8 325.3L507.2 322.5L509.1 317.2L506.7 320.1z" fill="#66fd12" stroke="#66fd12"/><path d="M569.9 262.8L572.6 263.8L574.0 266.1L571.3 265.2z" fill="#9f3c00" stroke="#9f3c00"/><path d="M491.7 358.9L493.9 356.3L495.8 352.2L493.6 354.7z" fill="#08fc6b" stroke="#08fc6b"/><path d="M514.2 300.3L516.7 297.3L518.6 292.9L516.1 295.9z" fill="#e7fc0a" stroke="#e7fc0a"/><path d="M532.3 271.8L534.9 268.9L536.8 267.6L534.2 270.5z" fill="#3e1e00" stroke="#3e1e00"/><path d="M547.3 261.9L550.0 259.9L551.7 260.7L549.0 262.7z" fill="#5e1c00" stroke="#5e1c00"/><path d="M506.7 320.1L509.1 317.2L511.0 312.0L508.6 314.9z" fill="#82fd11" stroke="#82fd11"/><path d="M584.3 275.0L586.9 278.4L588.1 280.9L585.6 277.6z" fill="#c28300" stroke="#c28300"/><path d="M589.4 282.1L591.8 286.2L593.0 288.7L590.6 284.6z" fill="#c8a800" stroke="#c8a800"/><path d="M563.0 260.4L565.7 260.3L567.2 262.4L564.5 262.5z" fill="#882900" stroke="#882900"/><path d="M512.3 305.0L514.8 302.0L516.7 297.3L514.2 300.3z" fill="#cffc0c" stroke="#cffc0c"/><path d="M508.6 314.9L511.0 312.0L512.9 306.9L510.5 309.9z" fill="#9dfd10" stroke="#9dfd10"/><path d="M586.9 278.4L589.4 282.1L590.6 284.6L588.1 280.9z" fill="#c59400" stroke="#c59400"/><path d="M510.5 309.9L512.9 306.9L514.8 302.0L512.3 305.0z" fill="#b7fd0f" stroke="#b7fd0f"/><path d="M489.8 362.7L492.0 360.2L493.9 356.3L491.7 358.9z" fill="#06fa7d" stroke="#06fa7d"/><path d="M524.2 281.8L526.7 278.8L528.6 276.0L526.1 279.0z" fill="#f6a801" stroke="#f6a801"/><path d="M473.4 382.3L475.4 379.8L477.6 378.4L475.5 380.9z" fill="#00433f" stroke="#00433f"/><path d="M479.7 376.6L481.8 374.1L483.8 371.9L481.7 374.4z" fill="#00392e" stroke="#00392e"/><path d="M487.8 366.1L490.0 363.6L492.0 360.2L489.8 362.7z" fill="#04f98c" stroke="#04f98c"/><path d="M572.6 263.8L575.2 265.2L576.6 267.6L574.0 266.1z" fill="#a84100" stroke="#a84100"/><path d="M536.8 267.6L539.4 265.0L541.2 264.2L538.5 266.8z" fill="#441b00" stroke="#441b00"/><path d="M558.7 259.3L561.5 258.7L563.0 260.4L560.3 261.0z" fill="#7b1f00" stroke="#7b1f00"/><path d="M530.5 273.6L533.1 270.7L534.9 268.9L532.3 271.8z" fill="#391d00" stroke="#391d00"/><path d="M522.3 285.1L524.9 282.1L526.7 278.8L524.2 281.8z" fill="#f9b903" stroke="#f9b903"/><path d="M565.7 260.3L568.4 260.7L569.9 262.8L567.2 262.4z" fill="#912a00" stroke="#912a00"/><path d="M485.8 369.2L488.0 366.7L490.0 363.6L487.8 366.1z" fill="#02f697" stroke="#02f697"/><path d="M597.9 298.0L600.2 302.9L601.4 304.9L599.0 300.0z" fill="#445200" stroke="#445200"/><path d="M575.2 265.2L577.8 267.2L579.2 269.6L576.6 267.6z" fill="#b04900" stroke="#b04900"/><path d="M541.2 264.2L543.9 261.8L545.6 261.6L542.9 264.0z" fill="#4c1800" stroke="#4c1800"/><path d="M554.4 259.2L557.1 258.1L558.7 259.3L556.0 260.4z" fill="#6e1900" stroke="#6e1900"/><path d="M520.4 288.8L523.0 285.8L524.9 282.1L522.3 285.1z" fill="#fbcb06" stroke="#fbcb06"/><path d="M595.5 293.1L597.9 298.0L599.0 300.0L596.7 295.2z" fill="#4e5200" stroke="#4e5200"/><path d="M545.6 261.6L548.3 259.6L550.0 259.9L547.3 261.9z" fill="#561600" stroke="#561600"/><path d="M550.0 259.9L552.7 258.4L554.4 259.2L551.7 260.7z" fill="#621700" stroke="#621700"/><path d="M477.6 378.4L479.7 375.9L481.8 374.1L479.7 376.6z" fill="#003e33" stroke="#003e33"/><path d="M499.6 343.0L502.0 340.5L503.9 335.5L501.5 338.1z" fill="#12fd12" stroke="#12fd12"/><path d="M497.7 347.7L500.1 345.2L502.0 340.5L499.6 343.0z" fill="#0ffd28" stroke="#0ffd28"/><path d="M501.5 338.1L503.9 335.5L505.8 330.3L503.4 333.0z" fill="#2efd13" stroke="#2efd13"/><path d="M577.8 267.2L580.4 269.7L581.8 272.1L579.2 269.6z" fill="#b65300" stroke="#b65300"/><path d="M503.4 333.0L505.8 330.3L507.7 325.1L505.3 327.8z" fill="#4afd14" stroke="#4afd14"/><path d="M495.8 352.2L498.1 349.7L500.1 345.2L497.7 347.7z" fill="#0dfc3d" stroke="#0dfc3d"/><path d="M528.6 276.0L531.2 273.1L533.1 270.7L530.5 273.6z" fill="#f28101" stroke="#f28101"/><path d="M518.6 292.9L521.1 289.9L523.0 285.8L520.4 288.8z" fill="#fce009" stroke="#fce009"/><path d="M505.3 327.8L507.7 325.1L509.6 319.8L507.2 322.5z" fill="#66fd15" stroke="#66fd15"/><path d="M593.0 288.5L595.5 293.1L596.7 295.2L594.3 290.6z" fill="#534f00" stroke="#534f00"/><path d="M471.2 383.3L473.3 380.8L475.4 379.8L473.4 382.3z" fill="#004944" stroke="#004944"/><path d="M483.8 371.9L486.0 369.4L488.0 366.7L485.8 369.2z" fill="#01f29f" stroke="#01f29f"/><path d="M534.9 268.9L537.6 266.2L539.4 265.0L536.8 267.6z" fill="#3e1800" stroke="#3e1800"/><path d="M507.2 322.5L509.6 319.8L511.5 314.5L509.1 317.2z" fill="#82fd15" stroke="#82fd15"/><path d="M493.9 356.3L496.2 353.9L498.1 349.7L495.8 352.2z" fill="#0afc51" stroke="#0afc51"/><path d="M568.4 260.7L571.1 261.7L572.6 263.8L569.9 262.8z" fill="#9b2c00" stroke="#9b2c00"/><path d="M516.7 297.3L519.1 294.3L521.1 289.9L518.6 292.9z" fill="#fcf70c" stroke="#fcf70c"/><path d="M580.4 269.7L583.0 272.7L584.3 275.0L581.8 272.1z" fill="#bc6000" stroke="#bc6000"/><path d="M561.5 258.7L564.2 258.6L565.7 260.3L563.0 260.4z" fill="#821d00" stroke="#821d00"/><path d="M509.1 317.2L511.5 314.5L513.4 309.2L511.0 312.0z" fill="#9dfd14" stroke="#9dfd14"/><path d="M590.6 284.0L593.0 288.5L594.3 290.6L591.8 286.2z" fill="#544700" stroke="#544700"/><path d="M514.8 302.0L517.2 299.1L519.1 294.3L516.7 297.3z" fill="#ebfc0f" stroke="#ebfc0f"/><path d="M511.0 312.0L513.4 309.2L515.3 304.0L512.9 306.9z" fill="#b8fd13" stroke="#b8fd13"/><path d="M512.9 306.9L515.3 304.0L517.2 299.1L514.8 302.0z" fill="#d2fd11" stroke="#d2fd11"/><path d="M583.0 272.7L585.6 276.1L586.9 278.4L584.3 275.0z" fill="#c06e00" stroke="#c06e00"/><path d="M588.1 279.9L590.6 284.0L591.8 286.2L589.4 282.1z" fill="#c69300" stroke="#c69300"/><path d="M585.6 276.1L588.1 279.9L589.4 282.1L586.9 278.4z" fill="#c38000" stroke="#c38000"/><path d="M492.0 360.2L494.2 357.8L496.2 353.9L493.9 356.3z" fill="#07fb62" stroke="#07fb62"/><path d="M526.7 278.8L529.3 275.9L531.2 273.1L528.6 276.0z" fill="#f68f02" stroke="#f68f02"/><path d="M539.4 265.0L542.1 262.6L543.9 261.8L541.2 264.2z" fill="#451500" stroke="#451500"/><path d="M557.1 258.1L559.9 257.5L561.5 258.7L558.7 259.3z" fill="#741600" stroke="#741600"/><path d="M490.0 363.6L492.3 361.3L494.2 357.8L492.0 360.2z" fill="#04f971" stroke="#04f971"/><path d="M481.8 374.1L484.0 371.7L486.0 369.4L483.8 371.9z" fill="#003927" stroke="#003927"/><path d="M475.4 379.8L477.6 377.3L479.7 375.9L477.6 378.4z" fill="#004337" stroke="#004337"/><path d="M571.1 261.7L573.8 263.2L575.2 265.2L572.6 263.8z" fill="#a43100" stroke="#a43100"/><path d="M533.1 270.7L535.7 268.1L537.6 266.2L534.9 268.9z" fill="#391700" stroke="#391700"/><path d="M543.9 261.8L546.6 259.9L548.3 259.6L545.6 261.6z" fill="#4e1200" stroke="#4e1200"/><path d="M524.9 282.1L527.4 279.2L529.3 275.9L526.7 278.8z" fill="#f99f04" stroke="#f99f04"/><path d="M552.7 258.4L555.5 257.3L557.1 258.1L554.4 259.2z" fill="#661200" stroke="#661200"/><path d="M564.2 258.6L566.9 259.1L568.4 260.7L565.7 260.3z" fill="#8b1d00" stroke="#8b1d00"/><path d="M548.3 259.6L551.0 258.1L552.7 258.4L550.0 259.9z" fill="#591100" stroke="#591100"/><path d="M488.0 366.7L490.3 364.4L492.3 361.3L490.0 363.6z" fill="#02f67c" stroke="#02f67c"/><path d="M596.6 296.2L599.0 301.2L600.2 302.9L597.9 298.0z" fill="#4d5400" stroke="#4d5400"/><path d="M573.8 263.2L576.4 265.2L577.8 267.2L575.2 265.2z" fill="#ac3800" stroke="#ac3800"/><path d="M523.0 285.8L525.5 282.9L527.4 279.2L524.9 282.1z" fill="#fbb207" stroke="#fbb207"/><path d="M502.0 340.5L504.3 338.1L506.3 333.1L503.9 335.5z" fill="#2ffd16" stroke="#2ffd16"/><path d="M594.2 291.3L596.6 296.2L597.9 298.0L595.5 293.1z" fill="#545100" stroke="#545100"/><path d="M500.1 345.2L502.4 342.9L504.3 338.1L502.0 340.5z" fill="#14fc13" stroke="#14fc13"/><path d="M503.9 335.5L506.3 333.1L508.2 327.9L505.8 330.3z" fill="#4bfc18" stroke="#4bfc18"/><path d="M479.7 375.9L481.9 373.5L484.0 371.7L481.8 374.1z" fill="#003e2b" stroke="#003e2b"/><path d="M537.6 266.2L540.2 263.9L542.1 262.6L539.4 265.0z" fill="#3e1300" stroke="#3e1300"/><path d="M531.2 273.1L533.8 270.4L535.7 268.1L533.1 270.7z" fill="#f36a01" stroke="#f36a01"/><path d="M505.8 330.3L508.2 327.9L510.1 322.6L507.7 325.1z" fill="#66fc19" stroke="#66fc19"/><path d="M498.1 349.7L500.5 347.4L502.4 342.9L500.1 345.2z" fill="#10fc27" stroke="#10fc27"/><path d="M576.4 265.2L579.1 267.7L580.4 269.7L577.8 267.2z" fill="#b34200" stroke="#b34200"/><path d="M521.1 289.9L523.6 287.1L525.5 282.9L523.0 285.8z" fill="#fcc70b" stroke="#fcc70b"/><path d="M507.7 325.1L510.1 322.6L512.0 317.2L509.6 319.8z" fill="#82fc1a" stroke="#82fc1a"/><path d="M559.9 257.5L562.6 257.3L564.2 258.6L561.5 258.7z" fill="#7b1300" stroke="#7b1300"/><path d="M591.7 286.6L594.2 291.3L595.5 293.1L593.0 288.5z" fill="#554900" stroke="#554900"/><path d="M486.0 369.4L488.2 367.1L490.3 364.4L488.0 366.7z" fill="#01f284" stroke="#01f284"/><path d="M509.6 319.8L512.0 317.2L514.0 311.9L511.5 314.5z" fill="#9dfc1a" stroke="#9dfc1a"/><path d="M566.9 259.1L569.6 260.0L571.1 261.7L568.4 260.7z" fill="#951f00" stroke="#951f00"/><path d="M496.2 353.9L498.5 351.7L500.5 347.4L498.1 349.7z" fill="#0dfc39" stroke="#0dfc39"/><path d="M519.1 294.3L521.7 291.6L523.6 287.1L521.1 289.9z" fill="#fcdd0f" stroke="#fcdd0f"/><path d="M473.3 380.8L475.4 378.3L477.6 377.3L475.4 379.8z" fill="#00493b" stroke="#00493b"/><path d="M511.5 314.5L514.0 311.9L515.9 306.6L513.4 309.2z" fill="#b7fc19" stroke="#b7fc19"/><path d="M579.1 267.7L581.7 270.7L583.0 272.7L580.4 269.7z" fill="#b94e00" stroke="#b94e00"/><path d="M517.2 299.1L519.7 296.3L521.7 291.6L519.1 294.3z" fill="#fcf513" stroke="#fcf513"/><path d="M513.4 309.2L515.9 306.6L517.8 301.4L515.3 304.0z" fill="#d2fc18" stroke="#d2fc18"/><path d="M589.3 282.1L591.7 286.6L593.0 288.5L590.6 284.0z" fill="#564000" stroke="#564000"/><path d="M515.3 304.0L517.8 301.4L519.7 296.3L517.2 299.1z" fill="#ebfd15" stroke="#ebfd15"/><path d="M581.7 270.7L584.2 274.1L585.6 276.1L583.0 272.7z" fill="#bd5c00" stroke="#bd5c00"/><path d="M494.2 357.8L496.6 355.6L498.5 351.7L496.2 353.9z" fill="#09fb4a" stroke="#09fb4a"/><path d="M586.8 278.0L589.3 282.1L590.6 284.0L588.1 279.9z" fill="#573900" stroke="#573900"/><path d="M542.1 262.6L544.8 260.6L546.6 259.9L543.9 261.8z" fill="#460f00" stroke="#460f00"/><path d="M584.2 274.1L586.8 278.0L588.1 279.9L585.6 276.1z" fill="#593200" stroke="#593200"/><path d="M555.5 257.3L558.2 256.6L559.9 257.5L557.1 258.1z" fill="#6c0e00" stroke="#6c0e00"/><path d="M529.3 275.9L531.9 273.3L533.8 270.4L531.2 273.1z" fill="#f77703" stroke="#f77703"/><path d="M546.6 259.9L549.3 258.3L551.0 258.1L548.3 259.6z" fill="#500d00" stroke="#500d00"/><path d="M551.0 258.1L553.8 257.0L555.5 257.3L552.7 258.4z" fill="#5d0d00" stroke="#5d0d00"/><path d="M492.3 361.3L494.6 359.1L496.6 355.6L494.2 357.8z" fill="#06f958" stroke="#06f958"/><path d="M569.6 260.0L572.3 261.5L573.8 263.2L571.1 261.7z" fill="#9f2300" stroke="#9f2300"/><path d="M535.7 268.1L538.4 265.7L540.2 263.9L537.6 266.2z" fill="#ed4b00" stroke="#ed4b00"/><path d="M484.0 371.7L486.2 369.4L488.2 367.1L486.0 369.4z" fill="#00ed88" stroke="#00ed88"/><path d="M477.6 377.3L479.7 374.9L481.9 373.5L479.7 375.9z" fill="#00432f" stroke="#00432f"/><path d="M562.6 257.3L565.3 257.8L566.9 259.1L564.2 258.6z" fill="#831200" stroke="#831200"/><path d="M527.4 279.2L530.0 276.6L531.9 273.3L529.3 275.9z" fill="#f98806" stroke="#f98806"/><path d="M490.3 364.4L492.6 362.2L494.6 359.1L492.3 361.3z" fill="#03f763" stroke="#03f763"/><path d="M595.3 294.8L597.8 299.8L599.0 301.2L596.6 296.2z" fill="#555600" stroke="#555600"/><path d="M572.3 261.5L575.0 263.5L576.4 265.2L573.8 263.2z" fill="#a72900" stroke="#a72900"/><path d="M525.5 282.9L528.1 280.4L530.0 276.6L527.4 279.2z" fill="#fb9b0a" stroke="#fb9b0a"/><path d="M540.2 263.9L542.9 261.9L544.8 260.6L542.1 262.6z" fill="#3f0e00" stroke="#3f0e00"/><path d="M533.8 270.4L536.5 268.1L538.4 265.7L535.7 268.1z" fill="#f35502" stroke="#f35502"/><path d="M504.3 338.1L506.8 336.0L508.7 330.9L506.3 333.1z" fill="#4bfc1c" stroke="#4bfc1c"/><path d="M502.4 342.9L504.8 340.8L506.8 336.0L504.3 338.1z" fill="#30fc19" stroke="#30fc19"/><path d="M506.3 333.1L508.7 330.9L510.6 325.7L508.2 327.9z" fill="#66fc1e" stroke="#66fc1e"/><path d="M558.2 256.6L561.0 256.5L562.6 257.3L559.9 257.5z" fill="#730c00" stroke="#730c00"/><path d="M592.9 289.9L595.3 294.8L596.6 296.2L594.2 291.3z" fill="#564d00" stroke="#564d00"/><path d="M508.2 327.9L510.6 325.7L512.6 320.4L510.1 322.6z" fill="#80fc20" stroke="#80fc20"/><path d="M500.5 347.4L502.9 345.4L504.8 340.8L502.4 342.9z" fill="#16fc16" stroke="#16fc16"/><path d="M523.6 287.1L526.2 284.5L528.1 280.4L525.5 282.9z" fill="#fcb00f" stroke="#fcb00f"/><path d="M575.0 263.5L577.6 266.1L579.1 267.7L576.4 265.2z" fill="#af3200" stroke="#af3200"/><path d="M481.9 373.5L484.1 371.2L486.2 369.4L484.0 371.7z" fill="#003e24" stroke="#003e24"/><path d="M510.1 322.6L512.6 320.4L514.5 314.9L512.0 317.2z" fill="#9bfc21" stroke="#9bfc21"/><path d="M565.3 257.8L568.0 258.7L569.6 260.0L566.9 259.1z" fill="#8d1400" stroke="#8d1400"/><path d="M512.0 317.2L514.5 314.9L516.5 309.5L514.0 311.9z" fill="#b5fc21" stroke="#b5fc21"/><path d="M498.5 351.7L500.9 349.7L502.9 345.4L500.5 347.4z" fill="#11fc26" stroke="#11fc26"/><path d="M590.4 285.1L592.9 289.9L594.2 291.3L591.7 286.6z" fill="#574400" stroke="#574400"/><path d="M544.8 260.6L547.5 259.0L549.3 258.3L546.6 259.9z" fill="#480b00" stroke="#480b00"/><path d="M521.7 291.6L524.2 289.1L526.2 284.5L523.6 287.1z" fill="#fcc714" stroke="#fcc714"/><path d="M488.2 367.1L490.5 364.9L492.6 362.2L490.3 364.4z" fill="#01f36b" stroke="#01f36b"/><path d="M514.0 311.9L516.5 309.5L518.4 304.2L515.9 306.6z" fill="#cffc20" stroke="#cffc20"/><path d="M553.8 257.0L556.5 256.3L558.2 256.6L555.5 257.3z" fill="#630900" stroke="#630900"/><path d="M519.7 296.3L522.3 293.9L524.2 289.1L521.7 291.6z" fill="#fcdf18" stroke="#fcdf18"/><path d="M515.9 306.6L518.4 304.2L520.3 298.9L517.8 301.4z" fill="#e9fc1e" stroke="#e9fc1e"/><path d="M577.6 266.1L580.2 269.1L581.7 270.7L579.1 267.7z" fill="#622100" stroke="#622100"/><path d="M517.8 301.4L520.3 298.9L522.3 293.9L519.7 296.3z" fill="#fcf71c" stroke="#fcf71c"/><path d="M549.3 258.3L552.0 257.2L553.8 257.0L551.0 258.1z" fill="#540900" stroke="#540900"/><path d="M475.4 378.3L477.5 375.8L479.7 374.9L477.6 377.3z" fill="#004933" stroke="#004933"/><path d="M587.9 280.6L590.4 285.1L591.7 286.6L589.3 282.1z" fill="#583b00" stroke="#583b00"/><path d="M496.6 355.6L498.9 353.6L500.9 349.7L498.5 351.7z" fill="#0dfb35" stroke="#0dfb35"/><path d="M531.9 273.3L534.6 270.9L536.5 268.1L533.8 270.4z" fill="#f76204" stroke="#f76204"/><path d="M580.2 269.1L582.8 272.5L584.2 274.1L581.7 270.7z" fill="#5e2700" stroke="#5e2700"/><path d="M585.4 276.4L587.9 280.6L589.3 282.1L586.8 278.0z" fill="#5a3400" stroke="#5a3400"/><path d="M582.8 272.5L585.4 276.4L586.8 278.0L584.2 274.1z" fill="#5c2d00" stroke="#5c2d00"/><path d="M538.4 265.7L541.1 263.7L542.9 261.9L540.2 263.9z" fill="#ed3801" stroke="#ed3801"/><path d="M568.0 258.7L570.8 260.2L572.3 261.5L569.6 260.0z" fill="#981700" stroke="#981700"/><path d="M494.6 359.1L496.9 357.1L498.9 353.6L496.6 355.6z" fill="#08fa42" stroke="#08fa42"/><path d="M561.0 256.5L563.7 256.9L565.3 257.8L562.6 257.3z" fill="#7b0b00" stroke="#7b0b00"/><path d="M486.2 369.4L488.4 367.2L490.5 364.9L488.2 367.1z" fill="#01ed6f" stroke="#01ed6f"/><path d="M530.0 276.6L532.7 274.3L534.6 270.9L531.9 273.3z" fill="#fa7309" stroke="#fa7309"/><path d="M479.7 374.9L481.9 372.6L484.1 371.2L481.9 373.5z" fill="#004328" stroke="#004328"/><path d="M542.9 261.9L545.7 260.3L547.5 259.0L544.8 260.6z" fill="#e32200" stroke="#e32200"/><path d="M594.0 293.8L596.4 298.9L597.8 299.8L595.3 294.8z" fill="#585300" stroke="#585300"/><path d="M570.8 260.2L573.4 262.3L575.0 263.5L572.3 261.5z" fill="#a11d00" stroke="#a11d00"/><path d="M492.6 362.2L494.9 360.3L496.9 357.1L494.6 359.1z" fill="#05f74c" stroke="#05f74c"/><path d="M556.5 256.3L559.3 256.2L561.0 256.5L558.2 256.6z" fill="#6a0600" stroke="#6a0600"/><path d="M528.1 280.4L530.7 278.1L532.7 274.3L530.0 276.6z" fill="#fb870f" stroke="#fb870f"/><path d="M536.5 268.1L539.2 266.1L541.1 263.7L538.4 265.7z" fill="#f34203" stroke="#f34203"/><path d="M547.5 259.0L550.2 257.9L552.0 257.2L549.3 258.3z" fill="#d51400" stroke="#d51400"/><path d="M506.8 336.0L509.2 334.2L511.2 329.1L508.7 330.9z" fill="#66fc26" stroke="#66fc26"/><path d="M504.8 340.8L507.3 339.0L509.2 334.2L506.8 336.0z" fill="#4cfc22" stroke="#4cfc22"/><path d="M508.7 330.9L511.2 329.1L513.1 323.8L510.6 325.7z" fill="#7ffc28" stroke="#7ffc28"/><path d="M552.0 257.2L554.8 256.5L556.5 256.3L553.8 257.0z" fill="#590600" stroke="#590600"/><path d="M591.5 288.8L594.0 293.8L595.3 294.8L592.9 289.9z" fill="#594900" stroke="#594900"/><path d="M510.6 325.7L513.1 323.8L515.1 318.4L512.6 320.4z" fill="#99fc2a" stroke="#99fc2a"/><path d="M502.9 345.4L505.3 343.6L507.3 339.0L504.8 340.8z" fill="#32fc1e" stroke="#32fc1e"/><path d="M563.7 256.9L566.4 257.9L568.0 258.7L565.3 257.8z" fill="#840b00" stroke="#840b00"/><path d="M526.2 284.5L528.8 282.3L530.7 278.1L528.1 280.4z" fill="#fc9d15" stroke="#fc9d15"/><path d="M512.6 320.4L515.1 318.4L517.0 312.9L514.5 314.9z" fill="#b2fb2b" stroke="#b2fb2b"/><path d="M573.4 262.3L576.1 264.8L577.6 266.1L575.0 263.5z" fill="#6a1700" stroke="#6a1700"/><path d="M514.5 314.9L517.0 312.9L519.0 307.5L516.5 309.5z" fill="#cbfc2b" stroke="#cbfc2b"/><path d="M500.9 349.7L503.3 347.9L505.3 343.6L502.9 345.4z" fill="#19fc19" stroke="#19fc19"/><path d="M589.0 284.0L591.5 288.8L592.9 289.9L590.4 285.1z" fill="#5a4000" stroke="#5a4000"/><path d="M524.2 289.1L526.8 286.8L528.8 282.3L526.2 284.5z" fill="#fcb41b" stroke="#fcb41b"/><path d="M484.1 371.2L486.3 369.1L488.4 367.2L486.2 369.4z" fill="#003e1e" stroke="#003e1e"/><path d="M516.5 309.5L519.0 307.5L521.0 302.1L518.4 304.2z" fill="#e4fc2a" stroke="#e4fc2a"/><path d="M490.5 364.9L492.9 363.0L494.9 360.3L492.6 362.2z" fill="#02f354" stroke="#02f354"/><path d="M522.3 293.9L524.9 291.7L526.8 286.8L524.2 289.1z" fill="#fccc21" stroke="#fccc21"/><path d="M518.4 304.2L521.0 302.1L522.9 296.8L520.3 298.9z" fill="#fcfb28" stroke="#fcfb28"/><path d="M520.3 298.9L522.9 296.8L524.9 291.7L522.3 293.9z" fill="#fce325" stroke="#fce325"/><path d="M576.1 264.8L578.7 267.9L580.2 269.1L577.6 266.1z" fill="#651c00" stroke="#651c00"/><path d="M534.6 270.9L537.3 269.0L539.2 266.1L536.5 268.1z" fill="#f75007" stroke="#f75007"/><path d="M586.5 279.5L589.0 284.0L590.4 285.1L587.9 280.6z" fill="#5b3700" stroke="#5b3700"/><path d="M498.9 353.6L501.3 351.9L503.3 347.9L500.9 349.7z" fill="#13fb25" stroke="#13fb25"/><path d="M541.1 263.7L543.8 262.2L545.7 260.3L542.9 261.9z" fill="#ec2801" stroke="#ec2801"/><path d="M578.7 267.9L581.4 271.3L582.8 272.5L580.2 269.1z" fill="#622100" stroke="#622100"/><path d="M583.9 275.2L586.5 279.5L587.9 280.6L585.4 276.4z" fill="#5c2f00" stroke="#5c2f00"/><path d="M581.4 271.3L583.9 275.2L585.4 276.4L582.8 272.5z" fill="#5f2800" stroke="#5f2800"/><path d="M477.5 375.8L479.7 373.5L481.9 372.6L479.7 374.9z" fill="#004a2b" stroke="#004a2b"/><path d="M559.3 256.2L562.0 256.6L563.7 256.9L561.0 256.5z" fill="#720500" stroke="#720500"/><path d="M566.4 257.9L569.2 259.4L570.8 260.2L568.0 258.7z" fill="#7d0c00" stroke="#7d0c00"/><path d="M496.9 357.1L499.3 355.5L501.3 351.9L498.9 353.6z" fill="#0dfa30" stroke="#0dfa30"/><path d="M545.7 260.3L548.4 259.2L550.2 257.9L547.5 259.0z" fill="#e01500" stroke="#e01500"/><path d="M532.7 274.3L535.4 272.4L537.3 269.0L534.6 270.9z" fill="#f9630e" stroke="#f9630e"/><path d="M554.8 256.5L557.5 256.4L559.3 256.2L556.5 256.3z" fill="#b80600" stroke="#b80600"/><path d="M488.4 367.2L490.8 365.3L492.9 363.0L490.5 364.9z" fill="#01ee58" stroke="#01ee58"/><path d="M550.2 257.9L553.0 257.3L554.8 256.5L552.0 257.2z" fill="#cf0a00" stroke="#cf0a00"/><path d="M592.6 293.2L595.0 298.4L596.4 298.9L594.0 293.8z" fill="#5c5100" stroke="#5c5100"/><path d="M539.2 266.1L541.9 264.5L543.8 262.2L541.1 263.7z" fill="#f23304" stroke="#f23304"/><path d="M569.2 259.4L571.9 261.5L573.4 262.3L570.8 260.2z" fill="#750f00" stroke="#750f00"/><path d="M481.9 372.6L484.2 370.5L486.3 369.1L484.1 371.2z" fill="#004421" stroke="#004421"/><path d="M530.7 278.1L533.4 276.2L535.4 272.4L532.7 274.3z" fill="#fb7916" stroke="#fb7916"/><path d="M494.9 360.3L497.3 358.6L499.3 355.5L496.9 357.1z" fill="#07f738" stroke="#07f738"/><path d="M509.2 334.2L511.7 332.7L513.7 327.5L511.2 329.1z" fill="#7ffb33" stroke="#7ffb33"/><path d="M562.0 256.6L564.8 257.6L566.4 257.9L563.7 256.9z" fill="#910600" stroke="#910600"/><path d="M507.3 339.0L509.8 337.6L511.7 332.7L509.2 334.2z" fill="#67fb2f" stroke="#67fb2f"/><path d="M511.2 329.1L513.7 327.5L515.7 322.2L513.1 323.8z" fill="#96fb36" stroke="#96fb36"/><path d="M590.1 288.2L592.6 293.2L594.0 293.8L591.5 288.8z" fill="#5c4700" stroke="#5c4700"/><path d="M513.1 323.8L515.7 322.2L517.6 316.8L515.1 318.4z" fill="#aefb37" stroke="#aefb37"/><path d="M505.3 343.6L507.8 342.2L509.8 337.6L507.3 339.0z" fill="#4efb2a" stroke="#4efb2a"/><path d="M528.8 282.3L531.4 280.4L533.4 276.2L530.7 278.1z" fill="#fb8f1f" stroke="#fb8f1f"/><path d="M515.1 318.4L517.6 316.8L519.6 311.3L517.0 312.9z" fill="#c6fb38" stroke="#c6fb38"/><path d="M571.9 261.5L574.5 264.0L576.1 264.8L573.4 262.3z" fill="#6f1200" stroke="#6f1200"/><path d="M517.0 312.9L519.6 311.3L521.6 305.8L519.0 307.5z" fill="#ddfb38" stroke="#ddfb38"/><path d="M503.3 347.9L505.8 346.5L507.8 342.2L505.3 343.6z" fill="#35fb24" stroke="#35fb24"/><path d="M587.5 283.4L590.1 288.2L591.5 288.8L589.0 284.0z" fill="#5d3d00" stroke="#5d3d00"/><path d="M526.8 286.8L529.5 285.0L531.4 280.4L528.8 282.3z" fill="#fba627" stroke="#fba627"/><path d="M543.8 262.2L546.6 261.0L548.4 259.2L545.7 260.3z" fill="#e91b02" stroke="#e91b02"/><path d="M519.0 307.5L521.6 305.8L523.6 300.3L521.0 302.1z" fill="#f4fb37" stroke="#f4fb37"/><path d="M537.3 269.0L540.0 267.4L541.9 264.5L539.2 266.1z" fill="#f6430b" stroke="#f6430b"/><path d="M524.9 291.7L527.5 289.9L529.5 285.0L526.8 286.8z" fill="#fbbd2d" stroke="#fbbd2d"/><path d="M521.0 302.1L523.6 300.3L525.5 295.0L522.9 296.8z" fill="#fbeb35" stroke="#fbeb35"/><path d="M522.9 296.8L525.5 295.0L527.5 289.9L524.9 291.7z" fill="#fbd432" stroke="#fbd432"/><path d="M574.5 264.0L577.2 267.1L578.7 267.9L576.1 264.8z" fill="#6a1700" stroke="#6a1700"/><path d="M557.5 256.4L560.3 256.8L562.0 256.6L559.3 256.2z" fill="#ac0300" stroke="#ac0300"/><path d="M486.3 369.1L488.6 367.2L490.8 365.3L488.4 367.2z" fill="#00e759" stroke="#00e759"/><path d="M492.9 363.0L495.2 361.4L497.3 358.6L494.9 360.3z" fill="#03f33f" stroke="#03f33f"/><path d="M585.0 278.8L587.5 283.4L589.0 284.0L586.5 279.5z" fill="#5e3400" stroke="#5e3400"/><path d="M501.3 351.9L503.8 350.5L505.8 346.5L503.3 347.9z" fill="#1cfb1c" stroke="#1cfb1c"/><path d="M577.2 267.1L579.8 270.6L581.4 271.3L578.7 267.9z" fill="#661d00" stroke="#661d00"/><path d="M582.4 274.5L585.0 278.8L586.5 279.5L583.9 275.2z" fill="#602c00" stroke="#602c00"/><path d="M548.4 259.2L551.2 258.6L553.0 257.3L550.2 257.9z" fill="#db0b00" stroke="#db0b00"/><path d="M564.8 257.6L567.5 259.1L569.2 259.4L566.4 257.9z" fill="#850800" stroke="#850800"/><path d="M579.8 270.6L582.4 274.5L583.9 275.2L581.4 271.3z" fill="#632400" stroke="#632400"/><path d="M553.0 257.3L555.8 257.2L557.5 256.4L554.8 256.5z" fill="#c60400" stroke="#c60400"/><path d="M535.4 272.4L538.1 270.8L540.0 267.4L537.3 269.0z" fill="#f85815" stroke="#f85815"/><path d="M479.7 373.5L482.0 371.4L484.2 370.5L481.9 372.6z" fill="#004a23" stroke="#004a23"/><path d="M499.3 355.5L501.8 354.1L503.8 350.5L501.3 351.9z" fill="#14f923" stroke="#14f923"/><path d="M541.9 264.5L544.7 263.4L546.6 261.0L543.8 262.2z" fill="#f02807" stroke="#f02807"/><path d="M591.1 293.1L593.6 298.3L595.0 298.4L592.6 293.2z" fill="#605000" stroke="#605000"/><path d="M567.5 259.1L570.2 261.2L571.9 261.5L569.2 259.4z" fill="#7c0a00" stroke="#7c0a00"/><path d="M490.8 365.3L493.1 363.7L495.2 361.4L492.9 363.0z" fill="#01ee43" stroke="#01ee43"/><path d="M560.3 256.8L563.1 257.8L564.8 257.6L562.0 256.6z" fill="#9f0300" stroke="#9f0300"/><path d="M533.4 276.2L536.1 274.7L538.1 270.8L535.4 272.4z" fill="#fa7021" stroke="#fa7021"/><path d="M511.7 332.7L514.3 331.5L516.3 326.4L513.7 327.5z" fill="#96fa44" stroke="#96fa44"/><path d="M497.3 358.6L499.7 357.3L501.8 354.1L499.3 355.5z" fill="#0cf729" stroke="#0cf729"/><path d="M509.8 337.6L512.3 336.5L514.3 331.5L511.7 332.7z" fill="#80fa40" stroke="#80fa40"/><path d="M513.7 327.5L516.3 326.4L518.2 321.0L515.7 322.2z" fill="#abfa47" stroke="#abfa47"/><path d="M588.6 288.1L591.1 293.1L592.6 293.2L590.1 288.2z" fill="#604600" stroke="#604600"/><path d="M484.2 370.5L486.5 368.6L488.6 367.2L486.3 369.1z" fill="#00441a" stroke="#00441a"/><path d="M515.7 322.2L518.2 321.0L520.2 315.6L517.6 316.8z" fill="#c0fa49" stroke="#c0fa49"/><path d="M546.6 261.0L549.3 260.4L551.2 258.6L548.4 259.2z" fill="#e51203" stroke="#e51203"/><path d="M507.8 342.2L510.3 341.2L512.3 336.5L509.8 337.6z" fill="#69fa3b" stroke="#69fa3b"/><path d="M531.4 280.4L534.1 278.9L536.1 274.7L533.4 276.2z" fill="#fa872d" stroke="#fa872d"/><path d="M570.2 261.2L572.9 263.8L574.5 264.0L571.9 261.5z" fill="#750f00" stroke="#750f00"/><path d="M517.6 316.8L520.2 315.6L522.2 310.0L519.6 311.3z" fill="#d6fa4a" stroke="#d6fa4a"/><path d="M555.8 257.2L558.5 257.6L560.3 256.8L557.5 256.4z" fill="#bb0100" stroke="#bb0100"/><path d="M519.6 311.3L522.2 310.0L524.2 304.5L521.6 305.8z" fill="#ebfa4a" stroke="#ebfa4a"/><path d="M540.0 267.4L542.7 266.3L544.7 263.4L541.9 264.5z" fill="#f43b12" stroke="#f43b12"/><path d="M505.8 346.5L508.3 345.5L510.3 341.2L507.8 342.2z" fill="#52fa34" stroke="#52fa34"/><path d="M551.2 258.6L553.9 258.5L555.8 257.2L553.0 257.3z" fill="#d30501" stroke="#d30501"/><path d="M586.0 283.2L588.6 288.1L590.1 288.2L587.5 283.4z" fill="#613c00" stroke="#613c00"/><path d="M529.5 285.0L532.2 283.5L534.1 278.9L531.4 280.4z" fill="#fa9f36" stroke="#fa9f36"/><path d="M521.6 305.8L524.2 304.5L526.2 299.0L523.6 300.3z" fill="#faf449" stroke="#faf449"/><path d="M527.5 289.9L530.2 288.5L532.2 283.5L529.5 285.0z" fill="#fab53e" stroke="#fab53e"/><path d="M523.6 300.3L526.2 299.0L528.2 293.6L525.5 295.0z" fill="#fadf47" stroke="#fadf47"/><path d="M572.9 263.8L575.6 266.8L577.2 267.1L574.5 264.0z" fill="#6f1400" stroke="#6f1400"/><path d="M525.5 295.0L528.2 293.6L530.2 288.5L527.5 289.9z" fill="#faca43" stroke="#faca43"/><path d="M583.5 278.6L586.0 283.2L587.5 283.4L585.0 278.8z" fill="#633200" stroke="#633200"/><path d="M563.1 257.8L565.8 259.3L567.5 259.1L564.8 257.6z" fill="#910400" stroke="#910400"/><path d="M503.8 350.5L506.3 349.5L508.3 345.5L505.8 346.5z" fill="#39fa2a" stroke="#39fa2a"/><path d="M575.6 266.8L578.3 270.4L579.8 270.6L577.2 267.1z" fill="#6b1a00" stroke="#6b1a00"/><path d="M495.2 361.4L497.7 360.1L499.7 357.3L497.3 358.6z" fill="#06f32e" stroke="#06f32e"/><path d="M580.9 274.3L583.5 278.6L585.0 278.8L582.4 274.5z" fill="#652a00" stroke="#652a00"/><path d="M578.3 270.4L580.9 274.3L582.4 274.5L579.8 270.6z" fill="#672200" stroke="#672200"/><path d="M488.6 367.2L491.0 365.5L493.1 363.7L490.8 365.3z" fill="#00e644" stroke="#00e644"/><path d="M538.1 270.8L540.8 269.8L542.7 266.3L540.0 267.4z" fill="#f75421" stroke="#f75421"/><path d="M544.7 263.4L547.4 262.8L549.3 260.4L546.6 261.0z" fill="#ec210c" stroke="#ec210c"/><path d="M501.8 354.1L504.3 353.2L506.3 349.5L503.8 350.5z" fill="#20f91f" stroke="#20f91f"/><path d="M558.5 257.6L561.3 258.6L563.1 257.8L560.3 256.8z" fill="#ad0000" stroke="#ad0000"/><path d="M589.5 293.6L592.0 298.8L593.6 298.3L591.1 293.1z" fill="#645200" stroke="#645200"/><path d="M565.8 259.3L568.5 261.4L570.2 261.2L567.5 259.1z" fill="#850700" stroke="#850700"/><path d="M536.1 274.7L538.8 273.6L540.8 269.8L538.1 270.8z" fill="#f86e31" stroke="#f86e31"/><path d="M549.3 260.4L552.1 260.3L553.9 258.5L551.2 258.6z" fill="#de0c04" stroke="#de0c04"/><path d="M482.0 371.4L484.3 369.5L486.5 368.6L484.2 370.5z" fill="#004b1c" stroke="#004b1c"/><path d="M553.9 258.5L556.7 258.9L558.5 257.6L555.8 257.2z" fill="#c80201" stroke="#c80201"/><path d="M514.3 331.5L516.9 330.9L518.9 325.7L516.3 326.4z" fill="#aaf95a" stroke="#aaf95a"/><path d="M587.0 288.5L589.5 293.6L591.1 293.1L588.6 288.1z" fill="#654700" stroke="#654700"/><path d="M512.3 336.5L514.9 335.8L516.9 330.9L514.3 331.5z" fill="#97f956" stroke="#97f956"/><path d="M516.3 326.4L518.9 325.7L520.9 320.3L518.2 321.0z" fill="#bcf95c" stroke="#bcf95c"/><path d="M493.1 363.7L495.6 362.4L497.7 360.1L495.2 361.4z" fill="#02ed31" stroke="#02ed31"/><path d="M518.2 321.0L520.9 320.3L522.9 314.8L520.2 315.6z" fill="#cff85d" stroke="#cff85d"/><path d="M510.3 341.2L512.9 340.5L514.9 335.8L512.3 336.5z" fill="#83f951" stroke="#83f951"/><path d="M499.7 357.3L502.2 356.4L504.3 353.2L501.8 354.1z" fill="#14f620" stroke="#14f620"/><path d="M534.1 278.9L536.9 277.9L538.8 273.6L536.1 274.7z" fill="#f9873f" stroke="#f9873f"/><path d="M568.5 261.4L571.3 264.0L572.9 263.8L570.2 261.2z" fill="#7d0c00" stroke="#7d0c00"/><path d="M542.7 266.3L545.5 265.8L547.4 262.8L544.7 263.4z" fill="#f1391c" stroke="#f1391c"/><path d="M520.2 315.6L522.9 314.8L524.9 309.2L522.2 310.0z" fill="#e2f85e" stroke="#e2f85e"/><path d="M584.4 283.6L587.0 288.5L588.6 288.1L586.0 283.2z" fill="#663c00" stroke="#663c00"/><path d="M522.2 310.0L524.9 309.2L526.9 303.6L524.2 304.5z" fill="#f4f85e" stroke="#f4f85e"/><path d="M508.3 345.5L510.9 344.9L512.9 340.5L510.3 341.2z" fill="#6ef94a" stroke="#6ef94a"/><path d="M532.2 283.5L534.9 282.6L536.9 277.9L534.1 278.9z" fill="#f99d4b" stroke="#f99d4b"/><path d="M561.3 258.6L564.1 260.1L565.8 259.3L563.1 257.8z" fill="#9f0200" stroke="#9f0200"/><path d="M524.2 304.5L526.9 303.6L528.9 298.1L526.2 299.0z" fill="#f8ea5e" stroke="#f8ea5e"/><path d="M486.5 368.6L488.8 366.9L491.0 365.5L488.6 367.2z" fill="#004514" stroke="#004514"/><path d="M571.3 264.0L573.9 267.1L575.6 266.8L572.9 263.8z" fill="#761200" stroke="#761200"/><path d="M530.2 288.5L532.9 287.5L534.9 282.6L532.2 283.5z" fill="#f9b253" stroke="#f9b253"/><path d="M526.2 299.0L528.9 298.1L530.9 292.7L528.2 293.6z" fill="#f9d85c" stroke="#f9d85c"/><path d="M528.2 293.6L530.9 292.7L532.9 287.5L530.2 288.5z" fill="#f9c558" stroke="#f9c558"/><path d="M581.9 279.0L584.4 283.6L586.0 283.2L583.5 278.6z" fill="#683200" stroke="#683200"/><path d="M506.3 349.5L508.8 349.0L510.9 344.9L508.3 345.5z" fill="#56f83f" stroke="#56f83f"/><path d="M573.9 267.1L576.6 270.7L578.3 270.4L575.6 266.8z" fill="#711900" stroke="#711900"/><path d="M579.2 274.6L581.9 279.0L583.5 278.6L580.9 274.3z" fill="#6a2900" stroke="#6a2900"/><path d="M547.4 262.8L550.2 262.7L552.1 260.3L549.3 260.4z" fill="#e61e10" stroke="#e61e10"/><path d="M576.6 270.7L579.2 274.6L580.9 274.3L578.3 270.4z" fill="#6d2000" stroke="#6d2000"/><path d="M540.8 269.8L543.6 269.2L545.5 265.8L542.7 266.3z" fill="#f45630" stroke="#f45630"/><path d="M556.7 258.9L559.5 259.9L561.3 258.6L558.5 257.6z" fill="#bb0101" stroke="#bb0101"/><path d="M497.7 360.1L500.1 359.1L502.2 356.4L499.7 357.3z" fill="#0af221" stroke="#0af221"/><path d="M552.1 260.3L554.9 260.8L556.7 258.9L553.9 258.5z" fill="#d40905" stroke="#d40905"/><path d="M587.9 294.5L590.4 299.8L592.0 298.8L589.5 293.6z" fill="#695400" stroke="#695400"/><path d="M564.1 260.1L566.8 262.2L568.5 261.4L565.8 259.3z" fill="#910600" stroke="#910600"/><path d="M491.0 365.5L493.4 364.3L495.6 362.4L493.1 363.7z" fill="#01e531" stroke="#01e531"/><path d="M504.3 353.2L506.8 352.6L508.8 349.0L506.3 349.5z" fill="#3cf731" stroke="#3cf731"/><path d="M538.8 273.6L541.6 273.1L543.6 269.2L540.8 269.8z" fill="#f67244" stroke="#f67244"/><path d="M585.3 289.4L587.9 294.5L589.5 293.6L587.0 288.5z" fill="#6a4900" stroke="#6a4900"/><path d="M516.9 330.9L519.5 330.6L521.5 325.4L518.9 325.7z" fill="#baf76f" stroke="#baf76f"/><path d="M514.9 335.8L517.5 335.6L519.5 330.6L516.9 330.9z" fill="#aaf76d" stroke="#aaf76d"/><path d="M518.9 325.7L521.5 325.4L523.5 320.0L520.9 320.3z" fill="#c9f771" stroke="#c9f771"/><path d="M545.5 265.8L548.3 265.7L550.2 262.7L547.4 262.8z" fill="#ec3a25" stroke="#ec3a25"/><path d="M520.9 320.3L523.5 320.0L525.5 314.5L522.9 314.8z" fill="#d9f772" stroke="#d9f772"/><path d="M566.8 262.2L569.5 264.8L571.3 264.0L568.5 261.4z" fill="#850b00" stroke="#850b00"/><path d="M512.9 340.5L515.5 340.4L517.5 335.6L514.9 335.8z" fill="#9af769" stroke="#9af769"/><path d="M536.9 277.9L539.6 277.4L541.6 273.1L538.8 273.6z" fill="#f68c54" stroke="#f68c54"/><path d="M522.9 314.8L525.5 314.5L527.5 308.8L524.9 309.2z" fill="#e9f772" stroke="#e9f772"/><path d="M559.5 259.9L562.3 261.5L564.1 260.1L561.3 258.6z" fill="#ac0300" stroke="#ac0300"/><path d="M582.8 284.5L585.3 289.4L587.0 288.5L584.4 283.6z" fill="#6c3e00" stroke="#6c3e00"/><path d="M502.2 356.4L504.8 355.8L506.8 352.6L504.3 353.2z" fill="#21f520" stroke="#21f520"/><path d="M524.9 309.2L527.5 308.8L529.5 303.2L526.9 303.6z" fill="#f7f572" stroke="#f7f572"/><path d="M495.6 362.4L498.0 361.5L500.1 359.1L497.7 360.1z" fill="#04ec22" stroke="#04ec22"/><path d="M510.9 344.9L513.4 344.8L515.5 340.4L512.9 340.5z" fill="#88f762" stroke="#88f762"/><path d="M534.9 282.6L537.6 282.1L539.6 277.4L536.9 277.9z" fill="#f7a261" stroke="#f7a261"/><path d="M484.3 369.5L486.6 367.9L488.8 366.9L486.5 368.6z" fill="#004c16" stroke="#004c16"/><path d="M550.2 262.7L553.0 263.2L554.9 260.8L552.1 260.3z" fill="#dd1c12" stroke="#dd1c12"/><path d="M526.9 303.6L529.5 303.2L531.6 297.7L528.9 298.1z" fill="#f7e572" stroke="#f7e572"/><path d="M569.5 264.8L572.2 267.9L573.9 267.1L571.3 264.0z" fill="#7e1100" stroke="#7e1100"/><path d="M554.9 260.8L557.6 261.8L559.5 259.9L556.7 258.9z" fill="#c60804" stroke="#c60804"/><path d="M532.9 287.5L535.6 287.0L537.6 282.1L534.9 282.6z" fill="#f7b469" stroke="#f7b469"/><path d="M580.2 279.9L582.8 284.5L584.4 283.6L581.9 279.0z" fill="#6d3300" stroke="#6d3300"/><path d="M528.9 298.1L531.6 297.7L533.6 292.3L530.9 292.7z" fill="#f7d571" stroke="#f7d571"/><path d="M530.9 292.7L533.6 292.3L535.6 287.0L532.9 287.5z" fill="#f7c56e" stroke="#f7c56e"/><path d="M572.2 267.9L574.9 271.5L576.6 270.7L573.9 267.1z" fill="#781900" stroke="#781900"/><path d="M543.6 269.2L546.3 269.1L548.3 265.7L545.5 265.8z" fill="#f05b3d" stroke="#f05b3d"/><path d="M577.6 275.5L580.2 279.9L581.9 279.0L579.2 274.6z" fill="#702a00" stroke="#702a00"/><path d="M508.8 349.0L511.4 348.8L513.4 344.8L510.9 344.9z" fill="#72f757" stroke="#72f757"/><path d="M574.9 271.5L577.6 275.5L579.2 274.6L576.6 270.7z" fill="#732100" stroke="#732100"/><path d="M586.2 296.1L588.7 301.3L590.4 299.8L587.9 294.5z" fill="#6f5900" stroke="#6f5900"/><path d="M562.3 261.5L565.0 263.6L566.8 262.2L564.1 260.1z" fill="#9d0700" stroke="#9d0700"/><path d="M488.8 366.9L491.3 365.7L493.4 364.3L491.0 365.5z" fill="#00dc2f" stroke="#00dc2f"/><path d="M500.1 359.1L502.7 358.6L504.8 355.8L502.2 356.4z" fill="#11f11b" stroke="#11f11b"/><path d="M541.6 273.1L544.3 273.0L546.3 269.1L543.6 269.2z" fill="#f27954" stroke="#f27954"/><path d="M506.8 352.6L509.4 352.5L511.4 348.8L508.8 349.0z" fill="#59f547" stroke="#59f547"/><path d="M548.3 265.7L551.1 266.2L553.0 263.2L550.2 262.7z" fill="#e43a28" stroke="#e43a28"/><path d="M583.6 290.9L586.2 296.1L587.9 294.5L585.3 289.4z" fill="#704d00" stroke="#704d00"/><path d="M519.5 330.6L522.1 330.9L524.2 325.6L521.5 325.4z" fill="#c4f580" stroke="#c4f580"/><path d="M557.6 261.8L560.4 263.3L562.3 261.5L559.5 259.9z" fill="#b80802" stroke="#b80802"/><path d="M517.5 335.6L520.1 335.9L522.1 330.9L519.5 330.6z" fill="#b7f57f" stroke="#b7f57f"/><path d="M521.5 325.4L524.2 325.6L526.2 320.2L523.5 320.0z" fill="#d1f580" stroke="#d1f580"/><path d="M565.0 263.6L567.8 266.2L569.5 264.8L566.8 262.2z" fill="#900c00" stroke="#900c00"/><path d="M553.0 263.2L555.8 264.2L557.6 261.8L554.9 260.8z" fill="#d1190f" stroke="#d1190f"/><path d="M523.5 320.0L526.2 320.2L528.2 314.6L525.5 314.5z" fill="#dff580" stroke="#dff580"/><path d="M493.4 364.3L495.9 363.4L498.0 361.5L495.6 362.4z" fill="#01e422" stroke="#01e422"/><path d="M515.5 340.4L518.1 340.7L520.1 335.9L517.5 335.6z" fill="#a9f57d" stroke="#a9f57d"/><path d="M539.6 277.4L542.4 277.4L544.3 273.0L541.6 273.1z" fill="#f49266" stroke="#f49266"/><path d="M525.5 314.5L528.2 314.6L530.2 309.0L527.5 308.8z" fill="#ecf581" stroke="#ecf581"/><path d="M581.1 286.0L583.6 290.9L585.3 289.4L582.8 284.5z" fill="#714100" stroke="#714100"/><path d="M527.5 308.8L530.2 309.0L532.3 303.4L529.5 303.2z" fill="#f5f081" stroke="#f5f081"/><path d="M513.4 344.8L516.1 345.1L518.1 340.7L515.5 340.4z" fill="#9bf577" stroke="#9bf577"/><path d="M537.6 282.1L540.3 282.1L542.4 277.4L539.6 277.4z" fill="#f5a772" stroke="#f5a772"/><path d="M567.8 266.2L570.5 269.3L572.2 267.9L569.5 264.8z" fill="#861300" stroke="#861300"/><path d="M529.5 303.2L532.3 303.4L534.3 297.8L531.6 297.7z" fill="#f5e281" stroke="#f5e281"/><path d="M504.8 355.8L507.3 355.8L509.4 352.5L506.8 352.6z" fill="#3bf232" stroke="#3bf232"/><path d="M578.5 281.3L581.1 286.0L582.8 284.5L580.2 279.9z" fill="#743600" stroke="#743600"/><path d="M546.3 269.1L549.1 269.6L551.1 266.2L548.3 265.7z" fill="#ea5b43" stroke="#ea5b43"/><path d="M535.6 287.0L538.3 287.1L540.3 282.1L537.6 282.1z" fill="#f5b87a" stroke="#f5b87a"/><path d="M531.6 297.7L534.3 297.8L536.3 292.3L533.6 292.3z" fill="#f5d480" stroke="#f5d480"/><path d="M533.6 292.3L536.3 292.3L538.3 287.1L535.6 287.0z" fill="#f5c67e" stroke="#f5c67e"/><path d="M570.5 269.3L573.2 272.9L574.9 271.5L572.2 267.9z" fill="#7f1a00" stroke="#7f1a00"/><path d="M575.8 276.9L578.5 281.3L580.2 279.9L577.6 275.5z" fill="#762c00" stroke="#762c00"/><path d="M584.5 298.1L587.0 303.4L588.7 301.3L586.2 296.1z" fill="#745f00" stroke="#745f00"/><path d="M560.4 263.3L563.2 265.5L565.0 263.6L562.3 261.5z" fill="#a90b01" stroke="#a90b01"/><path d="M498.0 361.5L500.6 361.0L502.7 358.6L500.1 359.1z" fill="#07ea17" stroke="#07ea17"/><path d="M573.2 272.9L575.8 276.9L577.6 275.5L574.9 271.5z" fill="#7a2300" stroke="#7a2300"/><path d="M511.4 348.8L514.0 349.2L516.1 345.1L513.4 344.8z" fill="#88f46d" stroke="#88f46d"/><path d="M551.1 266.2L553.8 267.2L555.8 264.2L553.0 263.2z" fill="#da3423" stroke="#da3423"/><path d="M555.8 264.2L558.5 265.8L560.4 263.3L557.6 261.8z" fill="#c2150a" stroke="#c2150a"/><path d="M544.3 273.0L547.1 273.5L549.1 269.6L546.3 269.1z" fill="#ed7a5a" stroke="#ed7a5a"/><path d="M581.9 293.0L584.5 298.1L586.2 296.1L583.6 290.9z" fill="#765200" stroke="#765200"/><path d="M486.6 367.9L489.0 366.6L491.3 365.7L488.8 366.9z" fill="#004e10" stroke="#004e10"/><path d="M522.1 330.9L524.8 331.7L526.8 326.4L524.2 325.6z" fill="#c6f284" stroke="#c6f284"/><path d="M563.2 265.5L565.9 268.1L567.8 266.2L565.0 263.6z" fill="#9b1000" stroke="#9b1000"/><path d="M509.4 352.5L512.0 352.9L514.0 349.2L511.4 348.8z" fill="#70f25c" stroke="#70f25c"/><path d="M520.1 335.9L522.8 336.7L524.8 331.7L522.1 330.9z" fill="#baf284" stroke="#baf284"/><path d="M524.2 325.6L526.8 326.4L528.9 320.9L526.2 320.2z" fill="#d2f284" stroke="#d2f284"/><path d="M502.7 358.6L505.2 358.6L507.3 355.8L504.8 355.8z" fill="#1ced1c" stroke="#1ced1c"/><path d="M526.2 320.2L528.9 320.9L530.9 315.3L528.2 314.6z" fill="#dff284" stroke="#dff284"/><path d="M518.1 340.7L520.8 341.5L522.8 336.7L520.1 335.9z" fill="#aef283" stroke="#aef283"/><path d="M579.3 288.0L581.9 293.0L583.6 290.9L581.1 286.0z" fill="#774600" stroke="#774600"/><path d="M542.4 277.4L545.1 277.9L547.1 273.5L544.3 273.0z" fill="#f0936c" stroke="#f0936c"/><path d="M491.3 365.7L493.7 364.8L495.9 363.4L493.4 364.3z" fill="#00d920" stroke="#00d920"/><path d="M528.2 314.6L530.9 315.3L532.9 309.7L530.2 309.0z" fill="#ecf284" stroke="#ecf284"/><path d="M549.1 269.6L551.9 270.7L553.8 267.2L551.1 266.2z" fill="#e1533b" stroke="#e1533b"/><path d="M530.2 309.0L532.9 309.7L535.0 304.0L532.3 303.4z" fill="#f2ec84" stroke="#f2ec84"/><path d="M565.9 268.1L568.6 271.3L570.5 269.3L567.8 266.2z" fill="#901600" stroke="#901600"/><path d="M516.1 345.1L518.7 346.0L520.8 341.5L518.1 340.7z" fill="#a1f27f" stroke="#a1f27f"/><path d="M540.3 282.1L543.1 282.6L545.1 277.9L542.4 277.4z" fill="#f1a778" stroke="#f1a778"/><path d="M582.7 300.7L585.2 306.0L587.0 303.4L584.5 298.1z" fill="#7a6700" stroke="#7a6700"/><path d="M576.7 283.3L579.3 288.0L581.1 286.0L578.5 281.3z" fill="#7a3b00" stroke="#7a3b00"/><path d="M558.5 265.8L561.3 267.9L563.2 265.5L560.4 263.3z" fill="#b31505" stroke="#b31505"/><path d="M532.3 303.4L535.0 304.0L537.0 298.4L534.3 297.8z" fill="#f2de84" stroke="#f2de84"/><path d="M538.3 287.1L541.1 287.7L543.1 282.6L540.3 282.1z" fill="#f2b77f" stroke="#f2b77f"/><path d="M534.3 297.8L537.0 298.4L539.0 292.9L536.3 292.3z" fill="#f2d284" stroke="#f2d284"/><path d="M553.8 267.2L556.6 268.8L558.5 265.8L555.8 264.2z" fill="#cc2b18" stroke="#cc2b18"/><path d="M568.6 271.3L571.3 274.9L573.2 272.9L570.5 269.3z" fill="#871e00" stroke="#871e00"/><path d="M536.3 292.3L539.0 292.9L541.1 287.7L538.3 287.1z" fill="#f2c482" stroke="#f2c482"/><path d="M574.0 278.9L576.7 283.3L578.5 281.3L575.8 276.9z" fill="#7d3000" stroke="#7d3000"/><path d="M495.9 363.4L498.4 362.9L500.6 361.0L498.0 361.5z" fill="#02e115" stroke="#02e115"/><path d="M571.3 274.9L574.0 278.9L575.8 276.9L573.2 272.9z" fill="#812700" stroke="#812700"/><path d="M507.3 355.8L509.9 356.2L512.0 352.9L509.4 352.5z" fill="#50ef44" stroke="#50ef44"/><path d="M514.0 349.2L516.7 350.1L518.7 346.0L516.1 345.1z" fill="#90f075" stroke="#90f075"/><path d="M580.1 295.5L582.7 300.7L584.5 298.1L581.9 293.0z" fill="#7b5a00" stroke="#7b5a00"/><path d="M547.1 273.5L549.9 274.6L551.9 270.7L549.1 269.6z" fill="#e67151" stroke="#e67151"/><path d="M561.3 267.9L564.1 270.6L565.9 268.1L563.2 265.5z" fill="#a61702" stroke="#a61702"/><path d="M524.8 331.7L527.5 333.0L529.5 327.7L526.8 326.4z" fill="#beed7a" stroke="#beed7a"/><path d="M500.6 361.0L503.1 360.9L505.2 358.6L502.7 358.6z" fill="#0be612" stroke="#0be612"/><path d="M522.8 336.7L525.5 338.0L527.5 333.0L524.8 331.7z" fill="#b2ed79" stroke="#b2ed79"/><path d="M526.8 326.4L529.5 327.7L531.6 322.2L528.9 320.9z" fill="#cbed7a" stroke="#cbed7a"/><path d="M577.5 290.6L580.1 295.5L581.9 293.0L579.3 288.0z" fill="#7d4d00" stroke="#7d4d00"/><path d="M528.9 320.9L531.6 322.2L533.6 316.6L530.9 315.3z" fill="#d9ed7a" stroke="#d9ed7a"/><path d="M520.8 341.5L523.4 342.8L525.5 338.0L522.8 336.7z" fill="#a5ec77" stroke="#a5ec77"/><path d="M545.1 277.9L547.9 279.0L549.9 274.6L547.1 273.5z" fill="#e98a62" stroke="#e98a62"/><path d="M551.9 270.7L554.7 272.3L556.6 268.8L553.8 267.2z" fill="#d4462b" stroke="#d4462b"/><path d="M512.0 352.9L514.6 353.8L516.7 350.1L514.0 349.2z" fill="#79ee65" stroke="#79ee65"/><path d="M580.8 303.8L583.4 309.1L585.2 306.0L582.7 300.7z" fill="#7f7100" stroke="#7f7100"/><path d="M556.6 268.8L559.4 270.9L561.3 267.9L558.5 265.8z" fill="#bd250e" stroke="#bd250e"/><path d="M530.9 315.3L533.6 316.6L535.7 310.9L532.9 309.7z" fill="#e7ed7a" stroke="#e7ed7a"/><path d="M564.1 270.6L566.8 273.8L568.6 271.3L565.9 268.1z" fill="#9a1d01" stroke="#9a1d01"/><path d="M532.9 309.7L535.7 310.9L537.7 305.2L535.0 304.0z" fill="#ede67a" stroke="#ede67a"/><path d="M574.8 285.8L577.5 290.6L579.3 288.0L576.7 283.3z" fill="#804200" stroke="#804200"/><path d="M518.7 346.0L521.4 347.3L523.4 342.8L520.8 341.5z" fill="#97eb73" stroke="#97eb73"/><path d="M505.2 358.6L507.9 359.0L509.9 356.2L507.3 355.8z" fill="#2ee928" stroke="#2ee928"/><path d="M543.1 282.6L545.9 283.7L547.9 279.0L545.1 277.9z" fill="#eb9e6d" stroke="#eb9e6d"/><path d="M535.0 304.0L537.7 305.2L539.8 299.6L537.0 298.4z" fill="#edd87a" stroke="#edd87a"/><path d="M566.8 273.8L569.5 277.4L571.3 274.9L568.6 271.3z" fill="#902400" stroke="#902400"/><path d="M572.2 281.4L574.8 285.8L576.7 283.3L574.0 278.9z" fill="#833700" stroke="#833700"/><path d="M541.1 287.7L543.8 288.8L545.9 283.7L543.1 282.6z" fill="#ecae74" stroke="#ecae74"/><path d="M537.0 298.4L539.8 299.6L541.8 294.1L539.0 292.9z" fill="#edcb79" stroke="#edcb79"/><path d="M578.2 298.6L580.8 303.8L582.7 300.7L580.1 295.5z" fill="#806300" stroke="#806300"/><path d="M569.5 277.4L572.2 281.4L574.0 278.9L571.3 274.9z" fill="#892d00" stroke="#892d00"/><path d="M539.0 292.9L541.8 294.1L543.8 288.8L541.1 287.7z" fill="#edbd78" stroke="#edbd78"/><path d="M489.0 366.6L491.5 365.7L493.7 364.8L491.3 365.7z" fill="#00cd1c" stroke="#00cd1c"/><path d="M549.9 274.6L552.7 276.2L554.7 272.3L551.9 270.7z" fill="#da613d" stroke="#da613d"/><path d="M516.7 350.1L519.4 351.4L521.4 347.3L518.7 346.0z" fill="#86e96a" stroke="#86e96a"/><path d="M559.4 270.9L562.1 273.6L564.1 270.6L561.3 267.9z" fill="#af2407" stroke="#af2407"/><path d="M509.9 356.2L512.6 357.0L514.6 353.8L512.0 352.9z" fill="#5ae94c" stroke="#5ae94c"/><path d="M578.9 307.4L581.5 312.6L583.4 309.1L580.8 303.8z" fill="#847d00" stroke="#847d00"/><path d="M527.5 333.0L530.2 334.8L532.3 329.4L529.5 327.7z" fill="#afe563" stroke="#afe563"/><path d="M554.7 272.3L557.4 274.4L559.4 270.9L556.6 268.8z" fill="#c53a1a" stroke="#c53a1a"/><path d="M525.5 338.0L528.2 339.9L530.2 334.8L527.5 333.0z" fill="#a0e462" stroke="#a0e462"/><path d="M529.5 327.7L532.3 329.4L534.3 323.9L531.6 322.2z" fill="#bee564" stroke="#bee564"/><path d="M493.7 364.8L496.3 364.3L498.4 362.9L495.9 363.4z" fill="#00d514" stroke="#00d514"/><path d="M575.6 293.6L578.2 298.6L580.1 295.5L577.5 290.6z" fill="#825600" stroke="#825600"/><path d="M531.6 322.2L534.3 323.9L536.3 318.3L533.6 316.6z" fill="#cde565" stroke="#cde565"/><path d="M523.4 342.8L526.1 344.7L528.2 339.9L525.5 338.0z" fill="#90e35f" stroke="#90e35f"/><path d="M547.9 279.0L550.7 280.6L552.7 276.2L549.9 274.6z" fill="#de794c" stroke="#de794c"/><path d="M533.6 316.6L536.3 318.3L538.4 312.6L535.7 310.9z" fill="#dce565" stroke="#dce565"/><path d="M562.1 273.6L564.9 276.8L566.8 273.8L564.1 270.6z" fill="#a32703" stroke="#a32703"/><path d="M498.4 362.9L501.0 362.8L503.1 360.9L500.6 361.0z" fill="#03dc0d" stroke="#03dc0d"/><path d="M572.9 288.9L575.6 293.6L577.5 290.6L574.8 285.8z" fill="#854a00" stroke="#854a00"/><path d="M535.7 310.9L538.4 312.6L540.5 306.9L537.7 305.2z" fill="#e5df65" stroke="#e5df65"/><path d="M514.6 353.8L517.3 355.1L519.4 351.4L516.7 350.1z" fill="#6fe65a" stroke="#6fe65a"/><path d="M576.3 302.2L578.9 307.4L580.8 303.8L578.2 298.6z" fill="#856f00" stroke="#856f00"/><path d="M521.4 347.3L524.1 349.2L526.1 344.7L523.4 342.8z" fill="#80e15a" stroke="#80e15a"/><path d="M545.9 283.7L548.6 285.4L550.7 280.6L547.9 279.0z" fill="#e18e56" stroke="#e18e56"/><path d="M564.9 276.8L567.6 280.4L569.5 277.4L566.8 273.8z" fill="#992e01" stroke="#992e01"/><path d="M537.7 305.2L540.5 306.9L542.5 301.3L539.8 299.6z" fill="#e5d065" stroke="#e5d065"/><path d="M570.3 284.5L572.9 288.9L574.8 285.8L572.2 281.4z" fill="#8a4000" stroke="#8a4000"/><path d="M576.9 311.4L579.5 316.7L581.5 312.6L578.9 307.4z" fill="#878900" stroke="#878900"/><path d="M552.7 276.2L555.4 278.4L557.4 274.4L554.7 272.3z" fill="#cc5127" stroke="#cc5127"/><path d="M503.1 360.9L505.7 361.4L507.9 359.0L505.2 358.6z" fill="#11e011" stroke="#11e011"/><path d="M567.6 280.4L570.3 284.5L572.2 281.4L569.5 277.4z" fill="#913601" stroke="#913601"/><path d="M557.4 274.4L560.2 277.1L562.1 273.6L559.4 270.9z" fill="#b7350e" stroke="#b7350e"/><path d="M543.8 288.8L546.6 290.4L548.6 285.4L545.9 283.7z" fill="#e3a05d" stroke="#e3a05d"/><path d="M539.8 299.6L542.5 301.3L544.6 295.8L541.8 294.1z" fill="#e5c064" stroke="#e5c064"/><path d="M541.8 294.1L544.6 295.8L546.6 290.4L543.8 288.8z" fill="#e4b162" stroke="#e4b162"/><path d="M554.4 370.0L557.1 375.2L559.1 369.9L556.5 364.7z" fill="#029821" stroke="#029821"/><path d="M530.2 334.8L532.9 337.1L535.0 331.7L532.3 329.4z" fill="#99da49" stroke="#99da49"/><path d="M552.4 375.1L555.0 380.3L557.1 375.2L554.4 370.0z" fill="#029630" stroke="#029630"/><path d="M556.5 364.7L559.1 369.9L561.2 364.4L558.5 359.2z" fill="#029a10" stroke="#029a10"/><path d="M573.7 297.2L576.3 302.2L578.2 298.6L575.6 293.6z" fill="#886200" stroke="#886200"/><path d="M528.2 339.9L530.9 342.2L532.9 337.1L530.2 334.8z" fill="#88d846" stroke="#88d846"/><path d="M532.3 329.4L535.0 331.7L537.0 326.2L534.3 323.9z" fill="#abda4b" stroke="#abda4b"/><path d="M519.4 351.4L522.1 353.3L524.1 349.2L521.4 347.3z" fill="#6dde50" stroke="#6dde50"/><path d="M507.9 359.0L510.5 359.9L512.6 357.0L509.9 356.2z" fill="#36e12d" stroke="#36e12d"/><path d="M558.5 359.2L561.2 364.4L563.2 358.8L560.6 353.6z" fill="#069b03" stroke="#069b03"/><path d="M534.3 323.9L537.0 326.2L539.1 320.6L536.3 318.3z" fill="#bcdb4c" stroke="#bcdb4c"/><path d="M550.4 380.0L553.0 385.2L555.0 380.3L552.4 375.1z" fill="#01923d" stroke="#01923d"/><path d="M526.1 344.7L528.8 347.0L530.9 342.2L528.2 339.9z" fill="#76d643" stroke="#76d643"/><path d="M575.0 315.8L577.6 321.1L579.5 316.7L576.9 311.4z" fill="#818e01" stroke="#818e01"/><path d="M574.3 306.2L576.9 311.4L578.9 307.4L576.3 302.2z" fill="#8b7d00" stroke="#8b7d00"/><path d="M550.7 280.6L553.4 282.8L555.4 278.4L552.7 276.2z" fill="#d16833" stroke="#d16833"/><path d="M560.6 353.6L563.2 358.8L565.3 353.1L562.7 347.9z" fill="#199c03" stroke="#199c03"/><path d="M560.2 277.1L562.9 280.3L564.9 276.8L562.1 273.6z" fill="#ab3507" stroke="#ab3507"/><path d="M536.3 318.3L539.1 320.6L541.1 314.9L538.4 312.6z" fill="#cddb4d" stroke="#cddb4d"/><path d="M571.0 292.4L573.7 297.2L575.6 293.6L572.9 288.9z" fill="#8c5601" stroke="#8c5601"/><path d="M512.6 357.0L515.2 358.4L517.3 355.1L514.6 353.8z" fill="#51df43" stroke="#51df43"/><path d="M562.7 347.9L565.3 353.1L567.4 347.4L564.7 342.2z" fill="#2b9c03" stroke="#2b9c03"/><path d="M555.4 278.4L558.2 281.1L560.2 277.1L557.4 274.4z" fill="#be4816" stroke="#be4816"/><path d="M551.8 364.9L554.4 370.0L556.5 364.7L553.8 359.6z" fill="#039a10" stroke="#039a10"/><path d="M548.4 384.5L551.0 389.7L553.0 385.2L550.4 380.0z" fill="#018e48" stroke="#018e48"/><path d="M538.4 312.6L541.1 314.9L543.2 309.2L540.5 306.9z" fill="#dbd84d" stroke="#dbd84d"/><path d="M524.1 349.2L526.8 351.5L528.8 347.0L526.1 344.7z" fill="#64d43d" stroke="#64d43d"/><path d="M549.8 370.0L552.4 375.1L554.4 370.0L551.8 364.9z" fill="#02981f" stroke="#02981f"/><path d="M553.8 359.6L556.5 364.7L558.5 359.2L555.9 354.1z" fill="#079c03" stroke="#079c03"/><path d="M573.0 320.6L575.6 325.9L577.6 321.1L575.0 315.8z" fill="#779201" stroke="#779201"/><path d="M562.9 280.3L565.6 284.0L567.6 280.4L564.9 276.8z" fill="#a03a03" stroke="#a03a03"/><path d="M548.6 285.4L551.4 287.6L553.4 282.8L550.7 280.6z" fill="#d57d3c" stroke="#d57d3c"/><path d="M568.3 288.0L571.0 292.4L572.9 288.9L570.3 284.5z" fill="#914b01" stroke="#914b01"/><path d="M564.7 342.2L567.4 347.4L569.4 341.8L566.8 336.5z" fill="#3d9b03" stroke="#3d9b03"/><path d="M555.9 354.1L558.5 359.2L560.6 353.6L558.0 348.4z" fill="#199d03" stroke="#199d03"/><path d="M540.5 306.9L543.2 309.2L545.3 303.5L542.5 301.3z" fill="#dbc74c" stroke="#dbc74c"/><path d="M565.6 284.0L568.3 288.0L570.3 284.5L567.6 280.4z" fill="#984202" stroke="#984202"/><path d="M547.7 374.9L550.4 380.0L552.4 375.1L549.8 370.0z" fill="#02942d" stroke="#02942d"/><path d="M571.7 301.2L574.3 306.2L576.3 302.2L573.7 297.2z" fill="#8e7001" stroke="#8e7001"/><path d="M532.9 337.1L535.6 339.9L537.7 334.5L535.0 331.7z" fill="#81cd31" stroke="#81cd31"/><path d="M570.9 325.7L573.5 331.0L575.6 325.9L573.0 320.6z" fill="#6c9502" stroke="#6c9502"/><path d="M566.8 336.5L569.4 341.8L571.5 336.3L568.9 331.0z" fill="#4e9a02" stroke="#4e9a02"/><path d="M517.3 355.1L520.0 357.0L522.1 353.3L519.4 351.4z" fill="#57d942" stroke="#57d942"/><path d="M572.3 310.6L575.0 315.8L576.9 311.4L574.3 306.2z" fill="#908d01" stroke="#908d01"/><path d="M530.9 342.2L533.6 345.0L535.6 339.9L532.9 337.1z" fill="#6ecb2e" stroke="#6ecb2e"/><path d="M535.0 331.7L537.7 334.5L539.7 329.0L537.0 326.2z" fill="#94cf33" stroke="#94cf33"/><path d="M546.6 290.4L549.4 292.7L551.4 287.6L548.6 285.4z" fill="#d89143" stroke="#d89143"/><path d="M542.5 301.3L545.3 303.5L547.3 298.0L544.6 295.8z" fill="#dab54b" stroke="#dab54b"/><path d="M568.9 331.0L571.5 336.3L573.5 331.0L570.9 325.7z" fill="#5e9802" stroke="#5e9802"/><path d="M558.0 348.4L560.6 353.6L562.7 347.9L560.0 342.7z" fill="#2c9e04" stroke="#2c9e04"/><path d="M544.6 295.8L547.3 298.0L549.4 292.7L546.6 290.4z" fill="#d9a448" stroke="#d9a448"/><path d="M537.0 326.2L539.7 329.0L541.8 323.4L539.1 320.6z" fill="#a8cf35" stroke="#a8cf35"/><path d="M528.8 347.0L531.6 349.8L533.6 345.0L530.9 342.2z" fill="#5bc92a" stroke="#5bc92a"/><path d="M549.1 360.0L551.8 364.9L553.8 359.6L551.2 354.7z" fill="#079d04" stroke="#079d04"/><path d="M553.4 282.8L556.2 285.5L558.2 281.1L555.4 278.4z" fill="#c35d1f" stroke="#c35d1f"/><path d="M558.2 281.1L560.9 284.3L562.9 280.3L560.2 277.1z" fill="#b1460c" stroke="#b1460c"/><path d="M546.4 388.7L549.0 393.9L551.0 389.7L548.4 384.5z" fill="#008950" stroke="#008950"/><path d="M560.0 342.7L562.7 347.9L564.7 342.2L562.1 337.0z" fill="#3e9e04" stroke="#3e9e04"/><path d="M547.1 365.1L549.8 370.0L551.8 364.9L549.1 360.0z" fill="#039b10" stroke="#039b10"/><path d="M551.2 354.7L553.8 359.6L555.9 354.1L553.2 349.1z" fill="#199f04" stroke="#199f04"/><path d="M522.1 353.3L524.8 355.7L526.8 351.5L524.1 349.2z" fill="#50cf34" stroke="#50cf34"/><path d="M545.7 379.4L548.4 384.5L550.4 380.0L547.7 374.9z" fill="#019038" stroke="#019038"/><path d="M539.1 320.6L541.8 323.4L543.9 317.6L541.1 314.9z" fill="#bad036" stroke="#bad036"/><path d="M569.0 296.5L571.7 301.2L573.7 297.2L571.0 292.4z" fill="#926401" stroke="#926401"/><path d="M570.3 315.4L573.0 320.6L575.0 315.8L572.3 310.6z" fill="#8a9401" stroke="#8a9401"/><path d="M553.2 349.1L555.9 354.1L558.0 348.4L555.3 343.5z" fill="#2ca004" stroke="#2ca004"/><path d="M491.5 365.7L494.0 365.2L496.3 364.3L493.7 364.8z" fill="#00c910" stroke="#00c910"/><path d="M562.1 337.0L564.7 342.2L566.8 336.5L564.2 331.4z" fill="#509d03" stroke="#509d03"/><path d="M545.1 370.0L547.7 374.9L549.8 370.0L547.1 365.1z" fill="#02971d" stroke="#02971d"/><path d="M569.7 305.6L572.3 310.6L574.3 306.2L571.7 301.2z" fill="#938001" stroke="#938001"/><path d="M535.6 339.9L538.4 343.1L540.4 337.8L537.7 334.5z" fill="#6ac120" stroke="#6ac120"/><path d="M541.1 314.9L543.9 317.6L545.9 311.9L543.2 309.2z" fill="#cdd036" stroke="#cdd036"/><path d="M496.3 364.3L498.8 364.2L501.0 362.8L498.4 362.9z" fill="#00d00a" stroke="#00d00a"/><path d="M526.8 351.5L529.5 354.3L531.6 349.8L528.8 347.0z" fill="#48c525" stroke="#48c525"/><path d="M568.3 320.5L570.9 325.7L573.0 320.6L570.3 315.4z" fill="#7f9702" stroke="#7f9702"/><path d="M533.6 345.0L536.3 348.3L538.4 343.1L535.6 339.9z" fill="#56bf1d" stroke="#56bf1d"/><path d="M537.7 334.5L540.4 337.8L542.5 332.3L539.7 329.0z" fill="#7ec322" stroke="#7ec322"/><path d="M560.9 284.3L563.7 288.0L565.6 284.0L562.9 280.3z" fill="#a74906" stroke="#a74906"/><path d="M564.2 331.4L566.8 336.5L568.9 331.0L566.2 325.9z" fill="#619c03" stroke="#619c03"/><path d="M555.3 343.5L558.0 348.4L560.0 342.7L557.4 337.8z" fill="#3fa105" stroke="#3fa105"/><path d="M566.4 292.0L569.0 296.5L571.0 292.4L568.3 288.0z" fill="#975902" stroke="#975902"/><path d="M546.5 355.3L549.1 360.0L551.2 354.7L548.5 350.0z" fill="#19a205" stroke="#19a205"/><path d="M551.4 287.6L554.2 290.3L556.2 285.5L553.4 282.8z" fill="#c87227" stroke="#c87227"/><path d="M566.2 325.9L568.9 331.0L570.9 325.7L568.3 320.5z" fill="#719a03" stroke="#719a03"/><path d="M501.0 362.8L503.6 363.3L505.7 361.4L503.1 360.9z" fill="#04d407" stroke="#04d407"/><path d="M544.4 360.4L547.1 365.1L549.1 360.0L546.5 355.3z" fill="#089f04" stroke="#089f04"/><path d="M548.5 350.0L551.2 354.7L553.2 349.1L550.6 344.4z" fill="#2ca306" stroke="#2ca306"/><path d="M563.7 288.0L566.4 292.0L568.3 288.0L565.6 284.0z" fill="#9e5003" stroke="#9e5003"/><path d="M543.2 309.2L545.9 311.9L548.0 306.3L545.3 303.5z" fill="#cfc035" stroke="#cfc035"/><path d="M539.7 329.0L542.5 332.3L544.5 326.6L541.8 323.4z" fill="#92c423" stroke="#92c423"/><path d="M531.6 349.8L534.3 353.1L536.3 348.3L533.6 345.0z" fill="#43bc19" stroke="#43bc19"/><path d="M505.7 361.4L508.4 362.3L510.5 359.9L507.9 359.0z" fill="#16d713" stroke="#16d713"/><path d="M557.4 337.8L560.0 342.7L562.1 337.0L559.5 332.1z" fill="#51a105" stroke="#51a105"/><path d="M550.6 344.4L553.2 349.1L555.3 343.5L552.6 338.8z" fill="#3fa506" stroke="#3fa506"/><path d="M556.2 285.5L558.9 288.7L560.9 284.3L558.2 281.1z" fill="#b75912" stroke="#b75912"/><path d="M549.4 292.7L552.1 295.4L554.2 290.3L551.4 287.6z" fill="#cb862c" stroke="#cb862c"/><path d="M543.0 374.5L545.7 379.4L547.7 374.9L545.1 370.0z" fill="#029329" stroke="#029329"/><path d="M545.3 303.5L548.0 306.3L550.1 300.7L547.3 298.0z" fill="#cfad33" stroke="#cfad33"/><path d="M538.4 343.1L541.1 346.8L543.1 341.5L540.4 337.8z" fill="#54b714" stroke="#54b714"/><path d="M543.7 383.6L546.4 388.7L548.4 384.5L545.7 379.4z" fill="#018b41" stroke="#018b41"/><path d="M542.4 365.3L545.1 370.0L547.1 365.1L544.4 360.4z" fill="#039c0f" stroke="#039c0f"/><path d="M543.8 350.9L546.5 355.3L548.5 350.0L545.8 345.5z" fill="#2ca708" stroke="#2ca708"/><path d="M567.7 310.4L570.3 315.4L572.3 310.6L569.7 305.6z" fill="#979102" stroke="#979102"/><path d="M547.3 298.0L550.1 300.7L552.1 295.4L549.4 292.7z" fill="#cd9a31" stroke="#cd9a31"/><path d="M510.5 359.9L513.2 361.3L515.2 358.4L512.6 357.0z" fill="#30d628" stroke="#30d628"/><path d="M541.8 323.4L544.5 326.6L546.6 320.9L543.9 317.6z" fill="#a6c524" stroke="#a6c524"/><path d="M536.3 348.3L539.0 352.0L541.1 346.8L538.4 343.1z" fill="#40b512" stroke="#40b512"/><path d="M540.4 337.8L543.1 341.5L545.2 335.9L542.5 332.3z" fill="#68b915" stroke="#68b915"/><path d="M567.1 300.9L569.7 305.6L571.7 301.2L569.0 296.5z" fill="#977402" stroke="#977402"/><path d="M541.7 356.0L544.4 360.4L546.5 355.3L543.8 350.9z" fill="#19a507" stroke="#19a507"/><path d="M545.8 345.5L548.5 350.0L550.6 344.4L547.9 340.0z" fill="#3fa909" stroke="#3fa909"/><path d="M541.1 346.8L543.8 350.9L545.8 345.5L543.1 341.5z" fill="#3fae0c" stroke="#3fae0c"/><path d="M559.5 332.1L562.1 337.0L564.2 331.4L561.5 326.4z" fill="#64a005" stroke="#64a005"/><path d="M515.2 358.4L517.9 360.3L520.0 357.0L517.3 355.1z" fill="#3cd12f" stroke="#3cd12f"/><path d="M552.6 338.8L555.3 343.5L557.4 337.8L554.7 333.1z" fill="#52a507" stroke="#52a507"/><path d="M539.0 352.0L541.7 356.0L543.8 350.9L541.1 346.8z" fill="#2cac0b" stroke="#2cac0b"/><path d="M543.1 341.5L545.8 345.5L547.9 340.0L545.2 335.9z" fill="#53b00e" stroke="#53b00e"/><path d="M544.4 392.5L547.0 397.7L549.0 393.9L546.4 388.7z" fill="#008456" stroke="#008456"/><path d="M542.5 332.3L545.2 335.9L547.2 330.3L544.5 326.6z" fill="#7cba16" stroke="#7cba16"/><path d="M547.9 340.0L550.6 344.4L552.6 338.8L550.0 334.4z" fill="#53aa09" stroke="#53aa09"/><path d="M520.0 357.0L522.7 359.4L524.8 355.7L522.1 353.3z" fill="#3ac929" stroke="#3ac929"/><path d="M565.7 315.5L568.3 320.5L570.3 315.4L567.7 310.4z" fill="#929b03" stroke="#929b03"/><path d="M543.9 317.6L546.6 320.9L548.7 315.2L545.9 311.9z" fill="#b9c524" stroke="#b9c524"/><path d="M534.3 353.1L537.0 356.8L539.0 352.0L536.3 348.3z" fill="#2db10f" stroke="#2db10f"/><path d="M561.5 326.4L564.2 331.4L566.2 325.9L563.6 320.9z" fill="#759f04" stroke="#759f04"/><path d="M524.8 355.7L527.5 358.5L529.5 354.3L526.8 351.5z" fill="#34c01e" stroke="#34c01e"/><path d="M539.7 360.9L542.4 365.3L544.4 360.4L541.7 356.0z" fill="#08a105" stroke="#08a105"/><path d="M529.5 354.3L532.2 357.6L534.3 353.1L531.6 349.8z" fill="#30b815" stroke="#30b815"/><path d="M558.9 288.7L561.7 292.4L563.7 288.0L560.9 284.3z" fill="#ac5b0a" stroke="#ac5b0a"/><path d="M545.2 335.9L547.9 340.0L550.0 334.4L547.2 330.3z" fill="#67b10e" stroke="#67b10e"/><path d="M563.6 320.9L566.2 325.9L568.3 320.5L565.7 315.5z" fill="#849d04" stroke="#849d04"/><path d="M564.4 296.5L567.1 300.9L569.0 296.5L566.4 292.0z" fill="#9d6903" stroke="#9d6903"/><path d="M554.2 290.3L556.9 293.5L558.9 288.7L556.2 285.5z" fill="#bb6d17" stroke="#bb6d17"/><path d="M554.7 333.1L557.4 337.8L559.5 332.1L556.8 327.3z" fill="#65a507" stroke="#65a507"/><path d="M537.0 356.8L539.7 360.9L541.7 356.0L539.0 352.0z" fill="#1aa809" stroke="#1aa809"/><path d="M544.5 326.6L547.2 330.3L549.3 324.6L546.6 320.9z" fill="#90ba17" stroke="#90ba17"/><path d="M540.3 369.8L543.0 374.5L545.1 370.0L542.4 365.3z" fill="#02971b" stroke="#02971b"/><path d="M550.0 334.4L552.6 338.8L554.7 333.1L552.0 328.6z" fill="#66ab0a" stroke="#66ab0a"/><path d="M561.7 292.4L564.4 296.5L566.4 292.0L563.7 288.0z" fill="#a36006" stroke="#a36006"/><path d="M545.9 311.9L548.7 315.2L550.7 309.5L548.0 306.3z" fill="#c4bd23" stroke="#c4bd23"/><path d="M565.0 305.7L567.7 310.4L569.7 305.6L567.1 300.9z" fill="#9b8503" stroke="#9b8503"/><path d="M547.2 330.3L550.0 334.4L552.0 328.6L549.3 324.6z" fill="#7bb20f" stroke="#7bb20f"/><path d="M556.8 327.3L559.5 332.1L561.5 326.4L558.9 321.7z" fill="#78a506" stroke="#78a506"/><path d="M541.0 378.7L543.7 383.6L545.7 379.4L543.0 374.5z" fill="#018e33" stroke="#018e33"/><path d="M552.1 295.4L554.9 298.6L556.9 293.5L554.2 290.3z" fill="#bf811c" stroke="#bf811c"/><path d="M548.0 306.3L550.7 309.5L552.8 304.0L550.1 300.7z" fill="#c3a922" stroke="#c3a922"/><path d="M546.6 320.9L549.3 324.6L551.4 318.8L548.7 315.2z" fill="#a4bb17" stroke="#a4bb17"/><path d="M552.0 328.6L554.7 333.1L556.8 327.3L554.1 322.9z" fill="#7aab0a" stroke="#7aab0a"/><path d="M550.1 300.7L552.8 304.0L554.9 298.6L552.1 295.4z" fill="#c1951f" stroke="#c1951f"/><path d="M532.2 357.6L534.9 361.3L537.0 356.8L534.3 353.1z" fill="#1bad0c" stroke="#1bad0c"/><path d="M537.6 365.4L540.3 369.8L542.4 365.3L539.7 360.9z" fill="#049d0f" stroke="#049d0f"/><path d="M563.0 310.8L565.7 315.5L567.7 310.4L565.0 305.7z" fill="#9f9704" stroke="#9f9704"/><path d="M558.9 321.7L561.5 326.4L563.6 320.9L560.9 316.1z" fill="#89a306" stroke="#89a306"/><path d="M556.9 293.5L559.6 297.2L561.7 292.4L558.9 288.7z" fill="#b16d0e" stroke="#b16d0e"/><path d="M549.3 324.6L552.0 328.6L554.1 322.9L551.4 318.8z" fill="#8eb20f" stroke="#8eb20f"/><path d="M562.3 301.3L565.0 305.7L567.1 300.9L564.4 296.5z" fill="#a17a05" stroke="#a17a05"/><path d="M560.9 316.1L563.6 320.9L565.7 315.5L563.0 310.8z" fill="#99a105" stroke="#99a105"/><path d="M534.9 361.3L537.6 365.4L539.7 360.9L537.0 356.8z" fill="#09a407" stroke="#09a407"/><path d="M548.7 315.2L551.4 318.8L553.5 313.2L550.7 309.5z" fill="#b7ba17" stroke="#b7ba17"/><path d="M541.7 387.4L544.4 392.5L546.4 388.7L543.7 383.6z" fill="#008648" stroke="#008648"/><path d="M559.6 297.2L562.3 301.3L564.4 296.5L561.7 292.4z" fill="#a87208" stroke="#a87208"/><path d="M554.1 322.9L556.8 327.3L558.9 321.7L556.2 317.3z" fill="#8caa09" stroke="#8caa09"/><path d="M527.5 358.5L530.2 361.8L532.2 357.6L529.5 354.3z" fill="#1eb310" stroke="#1eb310"/><path d="M551.4 318.8L554.1 322.9L556.2 317.3L553.5 313.2z" fill="#a1b10e" stroke="#a1b10e"/><path d="M554.9 298.6L557.6 302.3L559.6 297.2L556.9 293.5z" fill="#b48111" stroke="#b48111"/><path d="M550.7 309.5L553.5 313.2L555.5 307.6L552.8 304.0z" fill="#b9a915" stroke="#b9a915"/><path d="M560.3 306.4L563.0 310.8L565.0 305.7L562.3 301.3z" fill="#a48d06" stroke="#a48d06"/><path d="M556.2 317.3L558.9 321.7L560.9 316.1L558.2 311.7z" fill="#9ea909" stroke="#9ea909"/><path d="M552.8 304.0L555.5 307.6L557.6 302.3L554.9 298.6z" fill="#b79513" stroke="#b79513"/><path d="M538.3 374.0L541.0 378.7L543.0 374.5L540.3 369.8z" fill="#019226" stroke="#019226"/><path d="M558.2 311.7L560.9 316.1L563.0 310.8L560.3 306.4z" fill="#a7a108" stroke="#a7a108"/><path d="M557.6 302.3L560.3 306.4L562.3 301.3L559.6 297.2z" fill="#ab850a" stroke="#ab850a"/><path d="M553.5 313.2L556.2 317.3L558.2 311.7L555.5 307.6z" fill="#b0ad0e" stroke="#b0ad0e"/><path d="M522.7 359.4L525.4 362.3L527.5 358.5L524.8 355.7z" fill="#21ba16" stroke="#21ba16"/><path d="M555.5 307.6L558.2 311.7L560.3 306.4L557.6 302.3z" fill="#ae990c" stroke="#ae990c"/><path d="M530.2 361.8L532.9 365.5L534.9 361.3L532.2 357.6z" fill="#0ba809" stroke="#0ba809"/><path d="M542.4 396.0L545.0 401.2L547.0 397.7L544.4 392.5z" fill="#007f5a" stroke="#007f5a"/><path d="M535.6 369.6L538.3 374.0L540.3 369.8L537.6 365.4z" fill="#039819" stroke="#039819"/><path d="M517.9 360.3L520.6 362.7L522.7 359.4L520.0 357.0z" fill="#24c11b" stroke="#24c11b"/><path d="M532.9 365.5L535.6 369.6L537.6 365.4L534.9 361.3z" fill="#059f0e" stroke="#059f0e"/><path d="M539.0 382.5L541.7 387.4L543.7 383.6L541.0 378.7z" fill="#01893a" stroke="#01893a"/><path d="M513.2 361.3L515.9 363.2L517.9 360.3L515.2 358.4z" fill="#21c71b" stroke="#21c71b"/><path d="M508.4 362.3L511.1 363.7L513.2 361.3L510.5 359.9z" fill="#14ca10" stroke="#14ca10"/><path d="M525.4 362.3L528.1 365.6L530.2 361.8L527.5 358.5z" fill="#0dac0b" stroke="#0dac0b"/><path d="M536.3 377.8L539.0 382.5L541.0 378.7L538.3 374.0z" fill="#018d2d" stroke="#018d2d"/><path d="M503.6 363.3L506.3 364.2L508.4 362.3L505.7 361.4z" fill="#05ca05" stroke="#05ca05"/><path d="M539.7 390.9L542.4 396.0L544.4 392.5L541.7 387.4z" fill="#00814c" stroke="#00814c"/><path d="M498.8 364.2L501.4 364.7L503.6 363.3L501.0 362.8z" fill="#01c704" stroke="#01c704"/><path d="M528.1 365.6L530.9 369.3L532.9 365.5L530.2 361.8z" fill="#06a10e" stroke="#06a10e"/><path d="M533.6 373.4L536.3 377.8L538.3 374.0L535.6 369.6z" fill="#019221" stroke="#019221"/><path d="M494.0 365.2L496.6 365.2L498.8 364.2L496.3 364.3z" fill="#00c207" stroke="#00c207"/><path d="M520.6 362.7L523.4 365.6L525.4 362.3L522.7 359.4z" fill="#0fb20e" stroke="#0fb20e"/><path d="M530.9 369.3L533.6 373.4L535.6 369.6L532.9 365.5z" fill="#039917" stroke="#039917"/><path d="M537.0 385.9L539.7 390.9L541.7 387.4L539.0 382.5z" fill="#00833f" stroke="#00833f"/><path d="M540.4 399.0L543.1 404.2L545.0 401.2L542.4 396.0z" fill="#007a5c" stroke="#007a5c"/><path d="M515.9 363.2L518.6 365.6L520.6 362.7L517.9 360.3z" fill="#10b70e" stroke="#10b70e"/><path d="M523.4 365.6L526.1 368.9L528.1 365.6L525.4 362.3z" fill="#06a40d" stroke="#06a40d"/><path d="M534.3 381.2L537.0 385.9L539.0 382.5L536.3 377.8z" fill="#008632" stroke="#008632"/><path d="M511.1 363.7L513.8 365.6L515.9 363.2L513.2 361.3z" fill="#0bba0a" stroke="#0bba0a"/><path d="M526.1 368.9L528.8 372.7L530.9 369.3L528.1 365.6z" fill="#039a14" stroke="#039a14"/><path d="M531.5 376.8L534.3 381.2L536.3 377.8L533.6 373.4z" fill="#018b27" stroke="#018b27"/><path d="M537.7 393.9L540.4 399.0L542.4 396.0L539.7 390.9z" fill="#007b4e" stroke="#007b4e"/><path d="M528.8 372.7L531.5 376.8L533.6 373.4L530.9 369.3z" fill="#01911d" stroke="#01911d"/><path d="M518.6 365.6L521.3 368.5L523.4 365.6L520.6 362.7z" fill="#07a80c" stroke="#07a80c"/><path d="M506.3 364.2L508.9 365.6L511.1 363.7L508.4 362.3z" fill="#04bc04" stroke="#04bc04"/><path d="M535.0 388.9L537.7 393.9L539.7 390.9L537.0 385.9z" fill="#007d42" stroke="#007d42"/><path d="M501.4 364.7L504.1 365.6L506.3 364.2L503.6 363.3z" fill="#01bc01" stroke="#01bc01"/><path d="M521.3 368.5L524.0 371.9L526.1 368.9L523.4 365.6z" fill="#039b10" stroke="#039b10"/><path d="M538.4 401.5L541.1 406.8L543.1 404.2L540.4 399.0z" fill="#00755b" stroke="#00755b"/><path d="M532.2 384.2L535.0 388.9L537.0 385.9L534.3 381.2z" fill="#008036" stroke="#008036"/><path d="M513.8 365.6L516.5 368.1L518.6 365.6L515.9 363.2z" fill="#05ab09" stroke="#05ab09"/><path d="M496.6 365.2L499.2 365.6L501.4 364.7L498.8 364.2z" fill="#00b901" stroke="#00b901"/><path d="M524.0 371.9L526.8 375.6L528.8 372.7L526.1 368.9z" fill="#019117" stroke="#019117"/><path d="M529.5 379.7L532.2 384.2L534.3 381.2L531.5 376.8z" fill="#00832a" stroke="#00832a"/><path d="M526.8 375.6L529.5 379.7L531.5 376.8L528.8 372.7z" fill="#018920" stroke="#018920"/><path d="M535.7 396.4L538.4 401.5L540.4 399.0L537.7 393.9z" fill="#00764e" stroke="#00764e"/><path d="M508.9 365.6L511.6 367.6L513.8 365.6L511.1 363.7z" fill="#02ad04" stroke="#02ad04"/><path d="M516.5 368.1L519.2 371.0L521.3 368.5L518.6 365.6z" fill="#029d0c" stroke="#029d0c"/><path d="M532.9 391.5L535.7 396.4L537.7 393.9L535.0 388.9z" fill="#007842" stroke="#007842"/><path d="M519.2 371.0L522.0 374.3L524.0 371.9L521.3 368.5z" fill="#019112" stroke="#019112"/><path d="M504.1 365.6L506.8 367.1L508.9 365.6L506.3 364.2z" fill="#01ae01" stroke="#01ae01"/><path d="M530.2 386.7L532.9 391.5L535.0 388.9L532.2 384.2z" fill="#007a37" stroke="#007a37"/><path d="M522.0 374.3L524.7 378.1L526.8 375.6L524.0 371.9z" fill="#008819" stroke="#008819"/><path d="M536.4 403.7L539.1 408.9L541.1 406.8L538.4 401.5z" fill="#006f59" stroke="#006f59"/><path d="M527.5 382.2L530.2 386.7L532.2 384.2L529.5 379.7z" fill="#007d2c" stroke="#007d2c"/><path d="M511.6 367.6L514.4 370.0L516.5 368.1L513.8 365.6z" fill="#019e07" stroke="#019e07"/><path d="M524.7 378.1L527.5 382.2L529.5 379.7L526.8 375.6z" fill="#008122" stroke="#008122"/><path d="M499.2 365.6L501.9 366.6L504.1 365.6L501.4 364.7z" fill="#02ad00" stroke="#02ad00"/><path d="M533.6 398.5L536.4 403.7L538.4 401.5L535.7 396.4z" fill="#00704c" stroke="#00704c"/><path d="M514.4 370.0L517.1 373.0L519.2 371.0L516.5 368.1z" fill="#00910c" stroke="#00910c"/><path d="M506.8 367.1L509.5 369.1L511.6 367.6L508.9 365.6z" fill="#009f02" stroke="#009f02"/><path d="M530.9 393.5L533.6 398.5L535.7 396.4L532.9 391.5z" fill="#007241" stroke="#007241"/><path d="M517.1 373.0L519.9 376.3L522.0 374.3L519.2 371.0z" fill="#008612" stroke="#008612"/><path d="M528.2 388.8L530.9 393.5L532.9 391.5L530.2 386.7z" fill="#007436" stroke="#007436"/><path d="M519.9 376.3L522.6 380.1L524.7 378.1L522.0 374.3z" fill="#00801a" stroke="#00801a"/><path d="M525.4 384.3L528.2 388.8L530.2 386.7L527.5 382.2z" fill="#00772c" stroke="#00772c"/><path d="M522.6 380.1L525.4 384.3L527.5 382.2L524.7 378.1z" fill="#007b22" stroke="#007b22"/><path d="M501.9 366.6L504.6 368.1L506.8 367.1L504.1 365.6z" fill="#02a000" stroke="#02a000"/><path d="M534.4 405.4L537.1 410.6L539.1 408.9L536.4 403.7z" fill="#006a54" stroke="#006a54"/><path d="M509.5 369.1L512.2 371.5L514.4 370.0L511.6 367.6z" fill="#009206" stroke="#009206"/><path d="M531.6 400.2L534.4 405.4L536.4 403.7L533.6 398.5z" fill="#006b49" stroke="#006b49"/><path d="M512.2 371.5L515.0 374.5L517.1 373.0L514.4 370.0z" fill="#00860b" stroke="#00860b"/><path d="M528.9 395.2L531.6 400.2L533.6 398.5L530.9 393.5z" fill="#006c3e" stroke="#006c3e"/><path d="M504.6 368.1L507.3 370.0L509.5 369.1L506.8 367.1z" fill="#009200" stroke="#009200"/><path d="M515.0 374.5L517.8 377.9L519.9 376.3L517.1 373.0z" fill="#007e11" stroke="#007e11"/><path d="M526.1 390.4L528.9 395.2L530.9 393.5L528.2 388.8z" fill="#006e33" stroke="#006e33"/><path d="M517.8 377.9L520.5 381.7L522.6 380.1L519.9 376.3z" fill="#007818" stroke="#007818"/><path d="M523.3 385.9L526.1 390.4L528.2 388.8L525.4 384.3z" fill="#007029" stroke="#007029"/><path d="M520.5 381.7L523.3 385.9L525.4 384.3L522.6 380.1z" fill="#007421" stroke="#007421"/><path d="M532.3 406.6L535.1 411.9L537.1 410.6L534.4 405.4z" fill="#00644f" stroke="#00644f"/><path d="M507.3 370.0L510.1 372.5L512.2 371.5L509.5 369.1z" fill="#008504" stroke="#008504"/><path d="M529.6 401.4L532.3 406.6L534.4 405.4L531.6 400.2z" fill="#006544" stroke="#006544"/><path d="M510.1 372.5L512.8 375.5L515.0 374.5L512.2 371.5z" fill="#007d09" stroke="#007d09"/><path d="M526.8 396.3L529.6 401.4L531.6 400.2L528.9 395.2z" fill="#006639" stroke="#006639"/><path d="M512.8 375.5L515.6 378.9L517.8 377.9L515.0 374.5z" fill="#00770f" stroke="#00770f"/><path d="M524.0 391.5L526.8 396.3L528.9 395.2L526.1 390.4z" fill="#00682f" stroke="#00682f"/><path d="M515.6 378.9L518.4 382.7L520.5 381.7L517.8 377.9z" fill="#007116" stroke="#007116"/><path d="M521.2 387.0L524.0 391.5L526.1 390.4L523.3 385.9z" fill="#006a26" stroke="#006a26"/><path d="M518.4 382.7L521.2 387.0L523.3 385.9L520.5 381.7z" fill="#006d1d" stroke="#006d1d"/></g><g fill="none"><path d="M404.2 256.8L537.6 303.6" stroke="#dcdcdc" stroke-width="1"/><path d="M537.6 303.6L626.6 245.5" stroke="#dcdcdc" stroke-width="1"/><path d="M535.1 412.8L537.6 303.6" stroke="#dcdcdc" stroke-width="1"/><path d="M534.3 448.0L535.1 412.8" stroke="#8e8e8e" stroke-width="1.3"/><path d="M404.2 256.8L400.0 251.2" stroke="#dcdcdc" stroke-width="1"/><path d="M434.4 245.2L430.2 239.6" stroke="#dcdcdc" stroke-width="1"/><path d="M461.2 234.9L457.0 229.3" stroke="#dcdcdc" stroke-width="1"/><path d="M485.1 225.7L480.9 220.1" stroke="#dcdcdc" stroke-width="1"/><path d="M506.6 217.5L502.4 211.9" stroke="#dcdcdc" stroke-width="1"/><path d="M506.6 217.5L509.1 212.3" stroke="#dcdcdc" stroke-width="1"/><path d="M532.9 223.6L535.4 218.4" stroke="#dcdcdc" stroke-width="1"/><path d="M561.5 230.3L564.0 225.1" stroke="#dcdcdc" stroke-width="1"/><path d="M592.6 237.6L595.1 232.4" stroke="#dcdcdc" stroke-width="1"/><path d="M626.6 245.5L629.1 240.3" stroke="#dcdcdc" stroke-width="1"/><path d="M422.7 384.5L419.4 389.8" stroke="#dcdcdc" stroke-width="1"/><path d="M446.9 398.3L443.6 403.6" stroke="#dcdcdc" stroke-width="1"/><path d="M473.4 413.4L470.1 418.7" stroke="#dcdcdc" stroke-width="1"/><path d="M502.4 429.8L499.1 435.1" stroke="#dcdcdc" stroke-width="1"/><path d="M534.3 448.0L531.0 453.3" stroke="#dcdcdc" stroke-width="1"/><path d="M534.3 448.0L538.4 453.6" stroke="#dcdcdc" stroke-width="1"/><path d="M556.8 424.5L560.9 430.1" stroke="#dcdcdc" stroke-width="1"/><path d="M576.8 403.8L580.9 409.4" stroke="#dcdcdc" stroke-width="1"/><path d="M594.6 385.3L598.7 390.9" stroke="#dcdcdc" stroke-width="1"/><path d="M610.5 368.8L614.6 374.4" stroke="#dcdcdc" stroke-width="1"/><path d="M422.7 384.5L415.9 385.0" stroke="#dcdcdc" stroke-width="1"/><path d="M418.6 356.6L411.8 357.1" stroke="#dcdcdc" stroke-width="1"/><path d="M414.2 326.2L407.4 326.7" stroke="#dcdcdc" stroke-width="1"/><path d="M409.4 293.0L402.6 293.5" stroke="#dcdcdc" stroke-width="1"/><path d="M404.2 256.8L397.4 257.3" stroke="#dcdcdc" stroke-width="1"/><path d="M610.5 368.8L616.2 367.9" stroke="#dcdcdc" stroke-width="1"/><path d="M614.0 341.6L619.7 340.7" stroke="#dcdcdc" stroke-width="1"/><path d="M617.9 312.2L623.6 311.3" stroke="#dcdcdc" stroke-width="1"/><path d="M622.1 280.3L627.8 279.4" stroke="#dcdcdc" stroke-width="1"/><path d="M626.6 245.5L632.3 244.6" stroke="#dcdcdc" stroke-width="1"/></g><g fill="none" stroke="#e6e6e6" stroke-width="0.871" stroke-linecap="round" stroke-linejoin="round"><path transform="translate(375.52 240.26) scale(1.043 0.930)" d="M.2 4.7H4.3"/><path transform="translate(381.37 240.26) scale(1.043 0.930)" d="M.9 1.9L2.6 0V8.6"/><path transform="translate(387.22 240.26) scale(1.043 0.930)" d="M1.6 7.8V8.6"/><path transform="translate(393.07 240.26) scale(1.043 0.930)" d="M.5 2.2Q.5 0 2.3 0Q4.1 0 4.1 2.2V6.4Q4.1 8.6 2.3 8.6Q.5 8.6 .5 6.4ZM.9 6.9L3.7 1.7"/></g><g fill="none" stroke="#e6e6e6" stroke-width="0.871" stroke-linecap="round" stroke-linejoin="round"><path transform="translate(405.79 229.15) scale(1.043 0.930)" d="M.2 4.7H4.3"/><path transform="translate(411.64 229.15) scale(1.043 0.930)" d="M.5 2.2Q.5 0 2.3 0Q4.1 0 4.1 2.2V6.4Q4.1 8.6 2.3 8.6Q.5 8.6 .5 6.4ZM.9 6.9L3.7 1.7"/><path transform="translate(417.49 229.15) scale(1.043 0.930)" d="M1.6 7.8V8.6"/><path transform="translate(423.34 229.15) scale(1.043 0.930)" d="M3.9 0H.9L.6 3.9Q1.4 3.1 2.4 3.1Q4.2 3.1 4.2 5.7Q4.2 8.6 2.3 8.6Q.9 8.6 .4 7.2"/></g><g fill="none" stroke="#e6e6e6" stroke-width="0.871" stroke-linecap="round" stroke-linejoin="round"><path transform="translate(450.14 219.37) scale(1.043 0.930)" d="M.5 2.2Q.5 0 2.3 0Q4.1 0 4.1 2.2V6.4Q4.1 8.6 2.3 8.6Q.5 8.6 .5 6.4ZM.9 6.9L3.7 1.7"/></g><g fill="none" stroke="#e6e6e6" stroke-width="0.871" stroke-linecap="round" stroke-linejoin="round"><path transform="translate(462.34 210.70) scale(1.043 0.930)" d="M.5 2.2Q.5 0 2.3 0Q4.1 0 4.1 2.2V6.4Q4.1 8.6 2.3 8.6Q.5 8.6 .5 6.4ZM.9 6.9L3.7 1.7"/><path transform="translate(468.19 210.70) scale(1.043 0.930)" d="M1.6 7.8V8.6"/><path transform="translate(474.04 210.70) scale(1.043 0.930)" d="M3.9 0H.9L.6 3.9Q1.4 3.1 2.4 3.1Q4.2 3.1 4.2 5.7Q4.2 8.6 2.3 8.6Q.9 8.6 .4 7.2"/></g><g fill="none" stroke="#e6e6e6" stroke-width="0.871" stroke-linecap="round" stroke-linejoin="round"><path transform="translate(483.78 202.97) scale(1.043 0.930)" d="M.9 1.9L2.6 0V8.6"/><path transform="translate(489.63 202.97) scale(1.043 0.930)" d="M1.6 7.8V8.6"/><path transform="translate(495.48 202.97) scale(1.043 0.930)" d="M.5 2.2Q.5 0 2.3 0Q4.1 0 4.1 2.2V6.4Q4.1 8.6 2.3 8.6Q.5 8.6 .5 6.4ZM.9 6.9L3.7 1.7"/></g><g fill="none" stroke="#e6e6e6" stroke-width="0.871" stroke-linecap="round" stroke-linejoin="round"><path transform="translate(511.28 202.77) scale(1.043 0.930)" d="M.2 4.7H4.3"/><path transform="translate(517.13 202.77) scale(1.043 0.930)" d="M.9 1.9L2.6 0V8.6"/><path transform="translate(522.98 202.77) scale(1.043 0.930)" d="M1.6 7.8V8.6"/><path transform="translate(528.83 202.77) scale(1.043 0.930)" d="M.5 2.2Q.5 0 2.3 0Q4.1 0 4.1 2.2V6.4Q4.1 8.6 2.3 8.6Q.5 8.6 .5 6.4ZM.9 6.9L3.7 1.7"/></g><g fill="none" stroke="#e6e6e6" stroke-width="0.871" stroke-linecap="round" stroke-linejoin="round"><path transform="translate(537.59 208.62) scale(1.043 0.930)" d="M.2 4.7H4.3"/><path transform="translate(543.44 208.62) scale(1.043 0.930)" d="M.5 2.2Q.5 0 2.3 0Q4.1 0 4.1 2.2V6.4Q4.1 8.6 2.3 8.6Q.5 8.6 .5 6.4ZM.9 6.9L3.7 1.7"/><path transform="translate(549.29 208.62) scale(1.043 0.930)" d="M1.6 7.8V8.6"/><path transform="translate(555.14 208.62) scale(1.043 0.930)" d="M3.9 0H.9L.6 3.9Q1.4 3.1 2.4 3.1Q4.2 3.1 4.2 5.7Q4.2 8.6 2.3 8.6Q.9 8.6 .4 7.2"/></g><g fill="none" stroke="#e6e6e6" stroke-width="0.871" stroke-linecap="round" stroke-linejoin="round"><path transform="translate(566.15 214.99) scale(1.043 0.930)" d="M.5 2.2Q.5 0 2.3 0Q4.1 0 4.1 2.2V6.4Q4.1 8.6 2.3 8.6Q.5 8.6 .5 6.4ZM.9 6.9L3.7 1.7"/></g><g fill="none" stroke="#e6e6e6" stroke-width="0.871" stroke-linecap="round" stroke-linejoin="round"><path transform="translate(597.27 221.95) scale(1.043 0.930)" d="M.5 2.2Q.5 0 2.3 0Q4.1 0 4.1 2.2V6.4Q4.1 8.6 2.3 8.6Q.5 8.6 .5 6.4ZM.9 6.9L3.7 1.7"/><path transform="translate(603.12 221.95) scale(1.043 0.930)" d="M1.6 7.8V8.6"/><path transform="translate(608.97 221.95) scale(1.043 0.930)" d="M3.9 0H.9L.6 3.9Q1.4 3.1 2.4 3.1Q4.2 3.1 4.2 5.7Q4.2 8.6 2.3 8.6Q.9 8.6 .4 7.2"/></g><g fill="none" stroke="#e6e6e6" stroke-width="0.871" stroke-linecap="round" stroke-linejoin="round"><path transform="translate(631.30 229.60) scale(1.043 0.930)" d="M.9 1.9L2.6 0V8.6"/><path transform="translate(637.15 229.60) scale(1.043 0.930)" d="M1.6 7.8V8.6"/><path transform="translate(643.00 229.60) scale(1.043 0.930)" d="M.5 2.2Q.5 0 2.3 0Q4.1 0 4.1 2.2V6.4Q4.1 8.6 2.3 8.6Q.5 8.6 .5 6.4ZM.9 6.9L3.7 1.7"/></g><g fill="none" stroke="#e6e6e6" stroke-width="0.871" stroke-linecap="round" stroke-linejoin="round"><path transform="translate(395.12 389.17) scale(1.043 0.930)" d="M.2 4.7H4.3"/><path transform="translate(400.97 389.17) scale(1.043 0.930)" d="M.9 1.9L2.6 0V8.6"/><path transform="translate(406.82 389.17) scale(1.043 0.930)" d="M1.6 7.8V8.6"/><path transform="translate(412.67 389.17) scale(1.043 0.930)" d="M.5 2.2Q.5 0 2.3 0Q4.1 0 4.1 2.2V6.4Q4.1 8.6 2.3 8.6Q.5 8.6 .5 6.4ZM.9 6.9L3.7 1.7"/></g><g fill="none" stroke="#e6e6e6" stroke-width="0.871" stroke-linecap="round" stroke-linejoin="round"><path transform="translate(419.38 403.58) scale(1.043 0.930)" d="M.2 4.7H4.3"/><path transform="translate(425.23 403.58) scale(1.043 0.930)" d="M.5 2.2Q.5 0 2.3 0Q4.1 0 4.1 2.2V6.4Q4.1 8.6 2.3 8.6Q.5 8.6 .5 6.4ZM.9 6.9L3.7 1.7"/><path transform="translate(431.08 403.58) scale(1.043 0.930)" d="M1.6 7.8V8.6"/><path transform="translate(436.93 403.58) scale(1.043 0.930)" d="M3.9 0H.9L.6 3.9Q1.4 3.1 2.4 3.1Q4.2 3.1 4.2 5.7Q4.2 8.6 2.3 8.6Q.9 8.6 .4 7.2"/></g><g fill="none" stroke="#e6e6e6" stroke-width="0.871" stroke-linecap="round" stroke-linejoin="round"><path transform="translate(463.39 419.26) scale(1.043 0.930)" d="M.5 2.2Q.5 0 2.3 0Q4.1 0 4.1 2.2V6.4Q4.1 8.6 2.3 8.6Q.5 8.6 .5 6.4ZM.9 6.9L3.7 1.7"/></g><g fill="none" stroke="#e6e6e6" stroke-width="0.871" stroke-linecap="round" stroke-linejoin="round"><path transform="translate(480.68 436.36) scale(1.043 0.930)" d="M.5 2.2Q.5 0 2.3 0Q4.1 0 4.1 2.2V6.4Q4.1 8.6 2.3 8.6Q.5 8.6 .5 6.4ZM.9 6.9L3.7 1.7"/><path transform="translate(486.53 436.36) scale(1.043 0.930)" d="M1.6 7.8V8.6"/><path transform="translate(492.38 436.36) scale(1.043 0.930)" d="M3.9 0H.9L.6 3.9Q1.4 3.1 2.4 3.1Q4.2 3.1 4.2 5.7Q4.2 8.6 2.3 8.6Q.9 8.6 .4 7.2"/></g><g fill="none" stroke="#e6e6e6" stroke-width="0.871" stroke-linecap="round" stroke-linejoin="round"><path transform="translate(512.57 455.12) scale(1.043 0.930)" d="M.9 1.9L2.6 0V8.6"/><path transform="translate(518.42 455.12) scale(1.043 0.930)" d="M1.6 7.8V8.6"/><path transform="translate(524.27 455.12) scale(1.043 0.930)" d="M.5 2.2Q.5 0 2.3 0Q4.1 0 4.1 2.2V6.4Q4.1 8.6 2.3 8.6Q.5 8.6 .5 6.4ZM.9 6.9L3.7 1.7"/></g><g fill="none" stroke="#e6e6e6" stroke-width="0.871" stroke-linecap="round" stroke-linejoin="round"><path transform="translate(541.57 454.02) scale(1.043 0.930)" d="M.2 4.7H4.3"/><path transform="translate(547.42 454.02) scale(1.043 0.930)" d="M.9 1.9L2.6 0V8.6"/><path transform="translate(553.27 454.02) scale(1.043 0.930)" d="M1.6 7.8V8.6"/><path transform="translate(559.12 454.02) scale(1.043 0.930)" d="M.5 2.2Q.5 0 2.3 0Q4.1 0 4.1 2.2V6.4Q4.1 8.6 2.3 8.6Q.5 8.6 .5 6.4ZM.9 6.9L3.7 1.7"/></g><g fill="none" stroke="#e6e6e6" stroke-width="0.871" stroke-linecap="round" stroke-linejoin="round"><path transform="translate(563.63 429.92) scale(1.043 0.930)" d="M.2 4.7H4.3"/><path transform="translate(569.48 429.92) scale(1.043 0.930)" d="M.5 2.2Q.5 0 2.3 0Q4.1 0 4.1 2.2V6.4Q4.1 8.6 2.3 8.6Q.5 8.6 .5 6.4ZM.9 6.9L3.7 1.7"/><path transform="translate(575.33 429.92) scale(1.043 0.930)" d="M1.6 7.8V8.6"/><path transform="translate(581.18 429.92) scale(1.043 0.930)" d="M3.9 0H.9L.6 3.9Q1.4 3.1 2.4 3.1Q4.2 3.1 4.2 5.7Q4.2 8.6 2.3 8.6Q.9 8.6 .4 7.2"/></g><g fill="none" stroke="#e6e6e6" stroke-width="0.871" stroke-linecap="round" stroke-linejoin="round"><path transform="translate(583.08 408.51) scale(1.043 0.930)" d="M.5 2.2Q.5 0 2.3 0Q4.1 0 4.1 2.2V6.4Q4.1 8.6 2.3 8.6Q.5 8.6 .5 6.4ZM.9 6.9L3.7 1.7"/></g><g fill="none" stroke="#e6e6e6" stroke-width="0.871" stroke-linecap="round" stroke-linejoin="round"><path transform="translate(600.35 389.37) scale(1.043 0.930)" d="M.5 2.2Q.5 0 2.3 0Q4.1 0 4.1 2.2V6.4Q4.1 8.6 2.3 8.6Q.5 8.6 .5 6.4ZM.9 6.9L3.7 1.7"/><path transform="translate(606.20 389.37) scale(1.043 0.930)" d="M1.6 7.8V8.6"/><path transform="translate(612.05 389.37) scale(1.043 0.930)" d="M3.9 0H.9L.6 3.9Q1.4 3.1 2.4 3.1Q4.2 3.1 4.2 5.7Q4.2 8.6 2.3 8.6Q.9 8.6 .4 7.2"/></g><g fill="none" stroke="#e6e6e6" stroke-width="0.871" stroke-linecap="round" stroke-linejoin="round"><path transform="translate(615.79 372.15) scale(1.043 0.930)" d="M.9 1.9L2.6 0V8.6"/><path transform="translate(621.64 372.15) scale(1.043 0.930)" d="M1.6 7.8V8.6"/><path transform="translate(627.49 372.15) scale(1.043 0.930)" d="M.5 2.2Q.5 0 2.3 0Q4.1 0 4.1 2.2V6.4Q4.1 8.6 2.3 8.6Q.5 8.6 .5 6.4ZM.9 6.9L3.7 1.7"/></g><g fill="none" stroke="#e6e6e6" stroke-width="0.871" stroke-linecap="round" stroke-linejoin="round"><path transform="translate(387.52 379.82) scale(1.043 0.930)" d="M.2 4.7H4.3"/><path transform="translate(393.37 379.82) scale(1.043 0.930)" d="M.5 2.1Q.5 0 2.3 0Q4.1 0 4.1 2.1Q4.1 3.6 2.6 5.2L.4 8.6H4.3"/><path transform="translate(399.22 379.82) scale(1.043 0.930)" d="M1.6 7.8V8.6"/><path transform="translate(405.07 379.82) scale(1.043 0.930)" d="M.5 2.2Q.5 0 2.3 0Q4.1 0 4.1 2.2V6.4Q4.1 8.6 2.3 8.6Q.5 8.6 .5 6.4ZM.9 6.9L3.7 1.7"/></g><g fill="none" stroke="#e6e6e6" stroke-width="0.871" stroke-linecap="round" stroke-linejoin="round"><path transform="translate(383.47 351.85) scale(1.043 0.930)" d="M.2 4.7H4.3"/><path transform="translate(389.32 351.85) scale(1.043 0.930)" d="M.9 1.9L2.6 0V8.6"/><path transform="translate(395.17 351.85) scale(1.043 0.930)" d="M1.6 7.8V8.6"/><path transform="translate(401.02 351.85) scale(1.043 0.930)" d="M.5 2.2Q.5 0 2.3 0Q4.1 0 4.1 2.2V6.4Q4.1 8.6 2.3 8.6Q.5 8.6 .5 6.4ZM.9 6.9L3.7 1.7"/></g><g fill="none" stroke="#e6e6e6" stroke-width="0.871" stroke-linecap="round" stroke-linejoin="round"><path transform="translate(396.62 321.47) scale(1.043 0.930)" d="M.5 2.2Q.5 0 2.3 0Q4.1 0 4.1 2.2V6.4Q4.1 8.6 2.3 8.6Q.5 8.6 .5 6.4ZM.9 6.9L3.7 1.7"/></g><g fill="none" stroke="#e6e6e6" stroke-width="0.871" stroke-linecap="round" stroke-linejoin="round"><path transform="translate(380.12 288.34) scale(1.043 0.930)" d="M.9 1.9L2.6 0V8.6"/><path transform="translate(385.97 288.34) scale(1.043 0.930)" d="M1.6 7.8V8.6"/><path transform="translate(391.82 288.34) scale(1.043 0.930)" d="M.5 2.2Q.5 0 2.3 0Q4.1 0 4.1 2.2V6.4Q4.1 8.6 2.3 8.6Q.5 8.6 .5 6.4ZM.9 6.9L3.7 1.7"/></g><g fill="none" stroke="#e6e6e6" stroke-width="0.871" stroke-linecap="round" stroke-linejoin="round"><path transform="translate(374.87 252.06) scale(1.043 0.930)" d="M.5 2.1Q.5 0 2.3 0Q4.1 0 4.1 2.1Q4.1 3.6 2.6 5.2L.4 8.6H4.3"/><path transform="translate(380.72 252.06) scale(1.043 0.930)" d="M1.6 7.8V8.6"/><path transform="translate(386.57 252.06) scale(1.043 0.930)" d="M.5 2.2Q.5 0 2.3 0Q4.1 0 4.1 2.2V6.4Q4.1 8.6 2.3 8.6Q.5 8.6 .5 6.4ZM.9 6.9L3.7 1.7"/></g><g fill="none" stroke="#e6e6e6" stroke-width="0.871" stroke-linecap="round" stroke-linejoin="round"><path transform="translate(620.69 362.60) scale(1.043 0.930)" d="M.2 4.7H4.3"/><path transform="translate(626.54 362.60) scale(1.043 0.930)" d="M.5 2.1Q.5 0 2.3 0Q4.1 0 4.1 2.1Q4.1 3.6 2.6 5.2L.4 8.6H4.3"/><path transform="translate(632.39 362.60) scale(1.043 0.930)" d="M1.6 7.8V8.6"/><path transform="translate(638.24 362.60) scale(1.043 0.930)" d="M.5 2.2Q.5 0 2.3 0Q4.1 0 4.1 2.2V6.4Q4.1 8.6 2.3 8.6Q.5 8.6 .5 6.4ZM.9 6.9L3.7 1.7"/></g><g fill="none" stroke="#e6e6e6" stroke-width="0.871" stroke-linecap="round" stroke-linejoin="round"><path transform="translate(624.24 335.42) scale(1.043 0.930)" d="M.2 4.7H4.3"/><path transform="translate(630.09 335.42) scale(1.043 0.930)" d="M.9 1.9L2.6 0V8.6"/><path transform="translate(635.94 335.42) scale(1.043 0.930)" d="M1.6 7.8V8.6"/><path transform="translate(641.79 335.42) scale(1.043 0.930)" d="M.5 2.2Q.5 0 2.3 0Q4.1 0 4.1 2.2V6.4Q4.1 8.6 2.3 8.6Q.5 8.6 .5 6.4ZM.9 6.9L3.7 1.7"/></g><g fill="none" stroke="#e6e6e6" stroke-width="0.871" stroke-linecap="round" stroke-linejoin="round"><path transform="translate(628.08 306.00) scale(1.043 0.930)" d="M.5 2.2Q.5 0 2.3 0Q4.1 0 4.1 2.2V6.4Q4.1 8.6 2.3 8.6Q.5 8.6 .5 6.4ZM.9 6.9L3.7 1.7"/></g><g fill="none" stroke="#e6e6e6" stroke-width="0.871" stroke-linecap="round" stroke-linejoin="round"><path transform="translate(632.25 274.08) scale(1.043 0.930)" d="M.9 1.9L2.6 0V8.6"/><path transform="translate(638.10 274.08) scale(1.043 0.930)" d="M1.6 7.8V8.6"/><path transform="translate(643.95 274.08) scale(1.043 0.930)" d="M.5 2.2Q.5 0 2.3 0Q4.1 0 4.1 2.2V6.4Q4.1 8.6 2.3 8.6Q.5 8.6 .5 6.4ZM.9 6.9L3.7 1.7"/></g><g fill="none" stroke="#e6e6e6" stroke-width="0.871" stroke-linecap="round" stroke-linejoin="round"><path transform="translate(636.80 239.30) scale(1.043 0.930)" d="M.5 2.1Q.5 0 2.3 0Q4.1 0 4.1 2.1Q4.1 3.6 2.6 5.2L.4 8.6H4.3"/><path transform="translate(642.65 239.30) scale(1.043 0.930)" d="M1.6 7.8V8.6"/><path transform="translate(648.50 239.30) scale(1.043 0.930)" d="M.5 2.2Q.5 0 2.3 0Q4.1 0 4.1 2.2V6.4Q4.1 8.6 2.3 8.6Q.5 8.6 .5 6.4ZM.9 6.9L3.7 1.7"/></g><g fill="none" stroke="#e6e6e6" stroke-width="0.882" stroke-linecap="round" stroke-linejoin="round"><path transform="translate(423.20 206.65) scale(1.233 1.035)" d="M0 0L3 4.3L6 0M3 4.3V8.6"/></g><g fill="none" stroke="#e6e6e6" stroke-width="0.882" stroke-linecap="round" stroke-linejoin="round"><path transform="translate(589.70 201.55) scale(1.233 1.035)" d="M0 0L6 8.6M6 0L0 8.6"/></g><g fill="none" stroke="#e6e6e6" stroke-width="0.882" stroke-linecap="round" stroke-linejoin="round"><path transform="translate(653.60 306.15) scale(1.233 1.035)" d="M0.3 0H5.7L0.3 8.6H5.7"/></g><g fill="none" stroke="#e6e6e6" stroke-width="0.882" stroke-linecap="round" stroke-linejoin="round"><path transform="translate(368.40 321.85) scale(1.233 1.035)" d="M0.3 0H5.7L0.3 8.6H5.7"/></g><g fill="none" stroke="#e6e6e6" stroke-width="0.882" stroke-linecap="round" stroke-linejoin="round"><path transform="translate(436.10 433.85) scale(1.233 1.035)" d="M0 0L6 8.6M6 0L0 8.6"/></g><g fill="none" stroke="#e6e6e6" stroke-width="0.882" stroke-linecap="round" stroke-linejoin="round"><path transform="translate(607.30 421.95) scale(1.233 1.035)" d="M0 0L3 4.3L6 0M3 4.3V8.6"/></g></svg>
</body></html>
